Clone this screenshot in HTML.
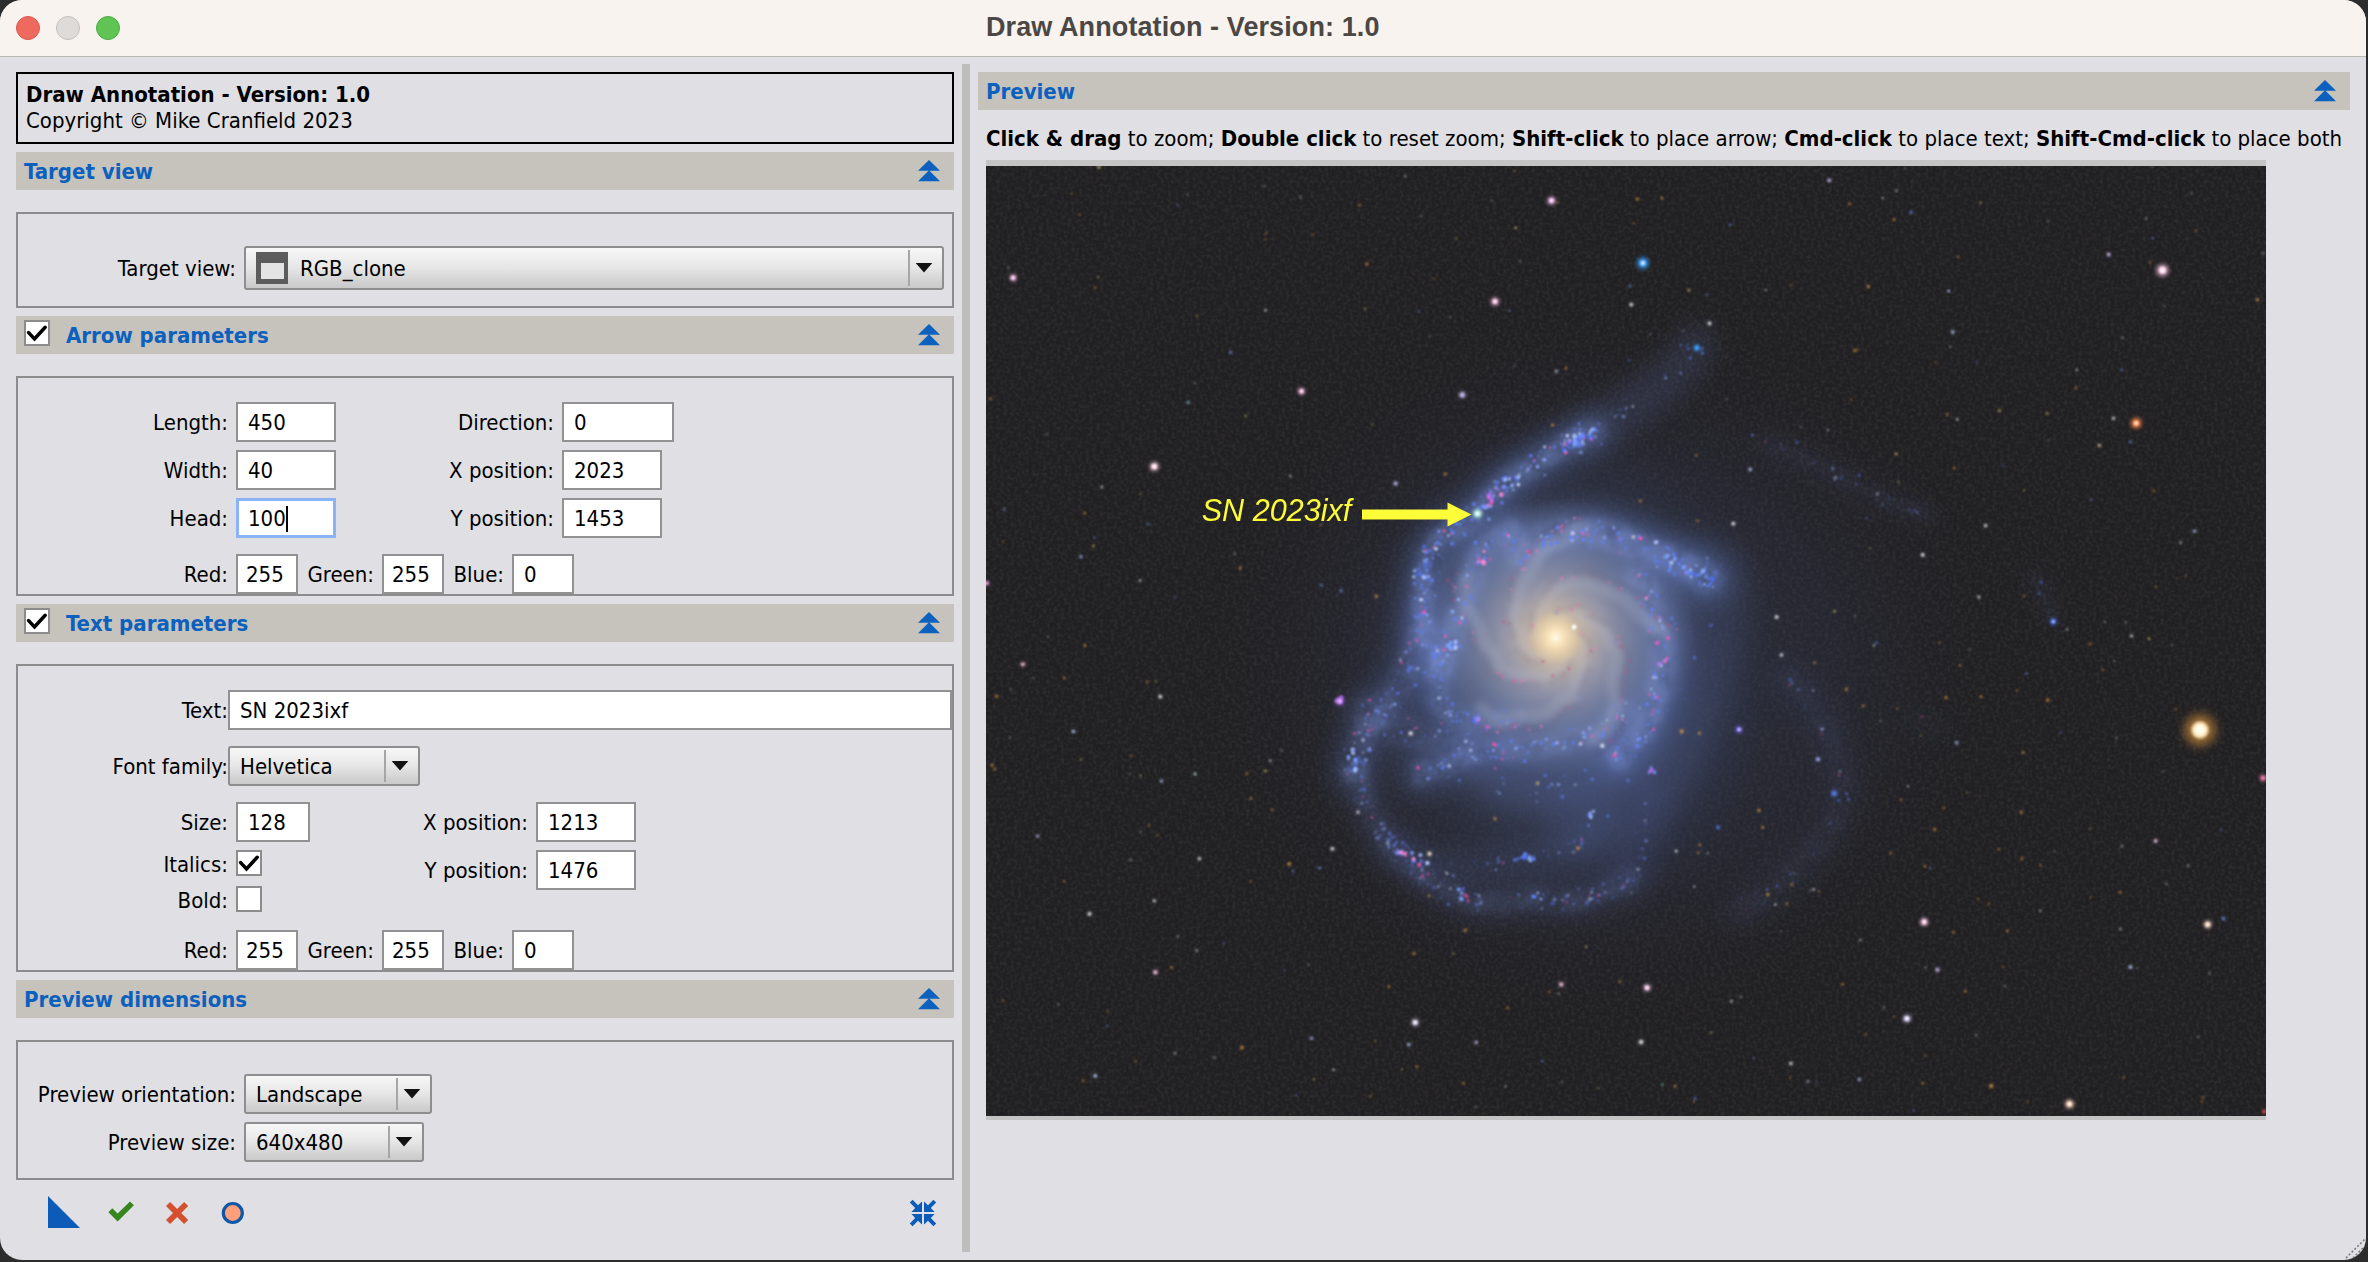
<!DOCTYPE html>
<html><head><meta charset="utf-8"><title>Draw Annotation - Version: 1.0</title>
<style>
html,body{margin:0;padding:0;}
body{width:2368px;height:1262px;overflow:hidden;background:#2c2c2c;position:relative;font-family:"DejaVu Sans Condensed","DejaVu Sans","Liberation Sans",sans-serif;font-size:22px;color:#000;}
.abs,#win *{position:absolute;box-sizing:border-box;}
#win b{position:static;}
#win{position:absolute;left:0;top:0;width:2366px;height:1260px;background:#e0e0e4;border-radius:22px;overflow:hidden;}
#tb{left:0;top:0;width:2366px;height:57px;background:#f8f3ef;border-bottom:1px solid #b9b6b4;}
#tb .dot{width:24px;height:24px;border-radius:50%;top:16px;}
#title{letter-spacing:.1px;left:986px;top:11px;font-family:"Liberation Sans",sans-serif;font-weight:bold;font-size:27px;color:#4b4745;white-space:nowrap;line-height:32px;}
.bar{background:#c5c3bb;height:38px;}
.grp{border:2px solid #8c8c8c;}
.lbl{white-space:nowrap;line-height:40px;height:40px;text-align:right;}
.ed{background:#fff;border:2px solid #929292;height:40px;line-height:36px;padding-left:10px;white-space:nowrap;}
.cb{background:#fff;border:2px solid #8c8c8c;width:26px;height:26px;}
.combo{border-radius:3px;border:2px solid #8e8e8e;background:linear-gradient(#f7f7f7,#e6e6e6 50%,#c9c9c9);height:40px;line-height:36px;white-space:nowrap;}
.combo .sep{width:2px;top:4px;bottom:4px;background:#a9a9a9;}
.combo .tx{left:10px;top:0;}
svg{overflow:visible;}
</style></head><body>
<div id="win">
<div id="tb">
 <div class="dot" style="left:16px;background:#ee6a5f;border:1px solid #d8584e;"></div>
 <div class="dot" style="left:56px;background:#dfdbd8;border:1px solid #c4c0bd;"></div>
 <div class="dot" style="left:96px;background:#5fc454;border:1px solid #4cab42;"></div>
 <div id="title">Draw Annotation - Version: 1.0</div>
</div>
<div style="left:16px;top:72px;width:938px;height:72px;border:2px solid #000"></div>
<div style="left:26px;top:81.70px;line-height:26px;white-space:nowrap;font-weight:bold;">Draw Annotation - Version: 1.0</div>
<div style="left:26px;top:107.90px;line-height:26px;white-space:nowrap;">Copyright © Mike Cranfield 2023</div>
<div class="bar" style="left:16px;top:152px;width:938px"></div>
<div style="left:24px;top:158.70px;line-height:26px;white-space:nowrap;font-weight:bold;color:#0c60be;">Target view</div>
<svg style="left:0;top:0" width="1" height="1"><path fill="#0c60be" d="M929 160L940 170.7L918 170.7ZM929 170.3L940 181.2L918 181.2Z"/></svg>
<div class="grp" style="left:16px;top:212px;width:938px;height:96px"></div>
<div style="left:0;width:236px;top:256.00px;line-height:26px;white-space:nowrap;text-align:right;">Target view:</div>
<div class="combo" style="left:244px;top:246px;width:700px;height:44px"></div>
<div style="left:908px;top:250px;width:2px;height:36px;background:#a6a6a6"></div>
<svg style="left:0;top:0" width="1" height="1"><path fill="#111" d="M915.7 263.0L932.3 263.0L924 272.6Z"/></svg>
<div style="left:300px;top:255.50px;line-height:26px;white-space:nowrap;">RGB_clone</div>
<div style="left:256px;top:252px;width:32px;height:32px;background:#5c5c5c"></div>
<div style="left:261px;top:263px;width:23px;height:16px;background:#e4e4e4"></div>
<div class="bar" style="left:16px;top:316px;width:938px"></div>
<div class="cb" style="left:24px;top:320px"></div>
<svg style="left:24px;top:320px" width="26" height="26" viewBox="0 0 26 26"><path d="M4.6 12.6L10.5 18.9L21.2 7.3" fill="none" stroke="#000" stroke-width="3.5" stroke-linecap="round" stroke-linejoin="miter"/></svg>
<div style="left:66px;top:322.70px;line-height:26px;white-space:nowrap;font-weight:bold;color:#0c60be;">Arrow parameters</div>
<svg style="left:0;top:0" width="1" height="1"><path fill="#0c60be" d="M929 324L940 334.7L918 334.7ZM929 334.3L940 345.2L918 345.2Z"/></svg>
<div class="grp" style="left:16px;top:376px;width:938px;height:220px"></div>
<div style="left:0;width:228px;top:409.50px;line-height:26px;white-space:nowrap;text-align:right;">Length:</div>
<div class="ed" style="left:236px;top:402px;width:100px;height:40px;"></div>
<div style="left:248px;top:409.50px;line-height:26px;white-space:nowrap;">450</div>
<div style="left:0;width:228px;top:457.50px;line-height:26px;white-space:nowrap;text-align:right;">Width:</div>
<div class="ed" style="left:236px;top:450px;width:100px;height:40px;"></div>
<div style="left:248px;top:457.50px;line-height:26px;white-space:nowrap;">40</div>
<div style="left:0;width:228px;top:505.50px;line-height:26px;white-space:nowrap;text-align:right;">Head:</div>
<div class="ed" style="left:236px;top:498px;width:100px;height:40px;border:3px solid #8bb3f8;"></div>
<div style="left:248px;top:505.50px;line-height:26px;white-space:nowrap;">100</div>
<div style="left:286px;top:506px;width:2px;height:26px;background:#000"></div>
<div style="left:0;width:554px;top:409.50px;line-height:26px;white-space:nowrap;text-align:right;">Direction:</div>
<div class="ed" style="left:562px;top:402px;width:112px;height:40px;"></div>
<div style="left:574px;top:409.50px;line-height:26px;white-space:nowrap;">0</div>
<div style="left:0;width:554px;top:457.50px;line-height:26px;white-space:nowrap;text-align:right;">X position:</div>
<div class="ed" style="left:562px;top:450px;width:100px;height:40px;"></div>
<div style="left:574px;top:457.50px;line-height:26px;white-space:nowrap;">2023</div>
<div style="left:0;width:554px;top:505.50px;line-height:26px;white-space:nowrap;text-align:right;">Y position:</div>
<div class="ed" style="left:562px;top:498px;width:100px;height:40px;"></div>
<div style="left:574px;top:505.50px;line-height:26px;white-space:nowrap;">1453</div>
<div style="left:0;width:228px;top:561.50px;line-height:26px;white-space:nowrap;text-align:right;">Red:</div>
<div class="ed" style="left:236px;top:554px;width:62px;height:40px;"></div>
<div style="left:246px;top:561.50px;line-height:26px;white-space:nowrap;">255</div>
<div style="left:0;width:374px;top:561.50px;line-height:26px;white-space:nowrap;text-align:right;">Green:</div>
<div class="ed" style="left:382px;top:554px;width:62px;height:40px;"></div>
<div style="left:392px;top:561.50px;line-height:26px;white-space:nowrap;">255</div>
<div style="left:0;width:504px;top:561.50px;line-height:26px;white-space:nowrap;text-align:right;">Blue:</div>
<div class="ed" style="left:512px;top:554px;width:62px;height:40px;"></div>
<div style="left:524px;top:561.50px;line-height:26px;white-space:nowrap;">0</div>
<div class="bar" style="left:16px;top:604px;width:938px"></div>
<div class="cb" style="left:24px;top:608px"></div>
<svg style="left:24px;top:608px" width="26" height="26" viewBox="0 0 26 26"><path d="M4.6 12.6L10.5 18.9L21.2 7.3" fill="none" stroke="#000" stroke-width="3.5" stroke-linecap="round" stroke-linejoin="miter"/></svg>
<div style="left:66px;top:610.70px;line-height:26px;white-space:nowrap;font-weight:bold;color:#0c60be;">Text parameters</div>
<svg style="left:0;top:0" width="1" height="1"><path fill="#0c60be" d="M929 612L940 622.7L918 622.7ZM929 622.3L940 633.2L918 633.2Z"/></svg>
<div class="grp" style="left:16px;top:664px;width:938px;height:308px"></div>
<div style="left:0;width:228px;top:697.50px;line-height:26px;white-space:nowrap;text-align:right;">Text:</div>
<div class="ed" style="left:228px;top:690px;width:724px;height:40px;"></div>
<div style="left:240px;top:697.50px;line-height:26px;white-space:nowrap;">SN 2023ixf</div>
<div style="left:0;width:228px;top:753.50px;line-height:26px;white-space:nowrap;text-align:right;">Font family:</div>
<div class="combo" style="left:228px;top:746px;width:192px;height:40px"></div>
<div style="left:384px;top:750px;width:2px;height:32px;background:#a6a6a6"></div>
<svg style="left:0;top:0" width="1" height="1"><path fill="#111" d="M391.7 761.0L408.3 761.0L400 770.6Z"/></svg>
<div style="left:240px;top:753.50px;line-height:26px;white-space:nowrap;">Helvetica</div>
<div style="left:0;width:228px;top:809.50px;line-height:26px;white-space:nowrap;text-align:right;">Size:</div>
<div class="ed" style="left:236px;top:802px;width:74px;height:40px;"></div>
<div style="left:248px;top:809.50px;line-height:26px;white-space:nowrap;">128</div>
<div style="left:0;width:228px;top:851.50px;line-height:26px;white-space:nowrap;text-align:right;">Italics:</div>
<div class="cb" style="left:236px;top:850px"></div>
<svg style="left:236px;top:850px" width="26" height="26" viewBox="0 0 26 26"><path d="M4.6 12.6L10.5 18.9L21.2 7.3" fill="none" stroke="#000" stroke-width="3.5" stroke-linecap="round" stroke-linejoin="miter"/></svg>
<div style="left:0;width:228px;top:887.50px;line-height:26px;white-space:nowrap;text-align:right;">Bold:</div>
<div class="cb" style="left:236px;top:886px"></div>
<div style="left:0;width:528px;top:809.50px;line-height:26px;white-space:nowrap;text-align:right;">X position:</div>
<div class="ed" style="left:536px;top:802px;width:100px;height:40px;"></div>
<div style="left:548px;top:809.50px;line-height:26px;white-space:nowrap;">1213</div>
<div style="left:0;width:528px;top:857.50px;line-height:26px;white-space:nowrap;text-align:right;">Y position:</div>
<div class="ed" style="left:536px;top:850px;width:100px;height:40px;"></div>
<div style="left:548px;top:857.50px;line-height:26px;white-space:nowrap;">1476</div>
<div style="left:0;width:228px;top:937.50px;line-height:26px;white-space:nowrap;text-align:right;">Red:</div>
<div class="ed" style="left:236px;top:930px;width:62px;height:40px;"></div>
<div style="left:246px;top:937.50px;line-height:26px;white-space:nowrap;">255</div>
<div style="left:0;width:374px;top:937.50px;line-height:26px;white-space:nowrap;text-align:right;">Green:</div>
<div class="ed" style="left:382px;top:930px;width:62px;height:40px;"></div>
<div style="left:392px;top:937.50px;line-height:26px;white-space:nowrap;">255</div>
<div style="left:0;width:504px;top:937.50px;line-height:26px;white-space:nowrap;text-align:right;">Blue:</div>
<div class="ed" style="left:512px;top:930px;width:62px;height:40px;"></div>
<div style="left:524px;top:937.50px;line-height:26px;white-space:nowrap;">0</div>
<div class="bar" style="left:16px;top:980px;width:938px"></div>
<div style="left:24px;top:986.70px;line-height:26px;white-space:nowrap;font-weight:bold;color:#0c60be;">Preview dimensions</div>
<svg style="left:0;top:0" width="1" height="1"><path fill="#0c60be" d="M929 988L940 998.7L918 998.7ZM929 998.3L940 1009.2L918 1009.2Z"/></svg>
<div class="grp" style="left:16px;top:1040px;width:938px;height:140px"></div>
<div style="left:0;width:236px;top:1081.50px;line-height:26px;white-space:nowrap;text-align:right;">Preview orientation:</div>
<div class="combo" style="left:244px;top:1074px;width:188px;height:40px"></div>
<div style="left:396px;top:1078px;width:2px;height:32px;background:#a6a6a6"></div>
<svg style="left:0;top:0" width="1" height="1"><path fill="#111" d="M403.7 1089.0L420.3 1089.0L412 1098.6Z"/></svg>
<div style="left:256px;top:1081.50px;line-height:26px;white-space:nowrap;">Landscape</div>
<div style="left:0;width:236px;top:1129.50px;line-height:26px;white-space:nowrap;text-align:right;">Preview size:</div>
<div class="combo" style="left:244px;top:1122px;width:180px;height:40px"></div>
<div style="left:388px;top:1126px;width:2px;height:32px;background:#a6a6a6"></div>
<svg style="left:0;top:0" width="1" height="1"><path fill="#111" d="M395.7 1137.0L412.3 1137.0L404 1146.6Z"/></svg>
<div style="left:256px;top:1129.50px;line-height:26px;white-space:nowrap;">640x480</div>
<svg style="left:0;top:0" width="1" height="1">
<path d="M48 1196L80 1228L48 1228Z" fill="#0d5bb8"/>
<path d="M108.4 1212.2L112.3 1208.3L117.6 1213.6L130 1201.4L133.9 1205.3L117.6 1221.4Z" fill="#35861f"/>
<path d="M166 1206L170.1 1201.9L177.1 1208.9L184.1 1201.9L188.2 1206L181.2 1213L188.2 1220L184.1 1224.1L177.1 1217.1L170.1 1224.1L166 1220L173 1213Z" fill="#d4502f"/>
<circle cx="232.8" cy="1213" r="9.5" fill="#ffa07a" stroke="#0d56a8" stroke-width="3.2"/>
<g fill="#0d5bb8" transform="translate(923 1213)">
 <g id="ar"><path d="M-13.2 -10.4L-10.4 -13.2L-5 -7.8L-1 -11.6L-1 -1L-11.6 -1L-7.8 -5Z"/></g>
 <use href="#ar" transform="scale(-1 1)"/><use href="#ar" transform="scale(1 -1)"/><use href="#ar" transform="scale(-1 -1)"/>
</g>
</svg>
<div style="left:962px;top:64px;width:8px;height:1188px;background:#bebebe"></div>
<div class="bar" style="left:978px;top:72px;width:1372px"></div>
<div style="left:986px;top:78.70px;line-height:26px;white-space:nowrap;font-weight:bold;color:#0c60be;">Preview</div>
<svg style="left:0;top:0" width="1" height="1"><path fill="#0c60be" d="M2325 80L2336 90.7L2314 90.7ZM2325 90.3L2336 101.2L2314 101.2Z"/></svg>
<div style="left:986px;top:125.60px;line-height:26px;white-space:nowrap;"><b>Click &amp; drag</b> to zoom; <b>Double click</b> to reset zoom; <b>Shift-click</b> to place arrow; <b>Cmd-click</b> to place text; <b>Shift-Cmd-click</b> to place both</div>
<div style="left:986px;top:160px;width:1280px;height:960px;background:#c4c4c4"></div>
<svg style="left:986px;top:166px;overflow:hidden" width="1280" height="950" viewBox="0 0 1280 950">
<defs>
<filter id="b1" x="-50%" y="-50%" width="200%" height="200%"><feGaussianBlur stdDeviation="0.8"/></filter>
<filter id="b3" x="-50%" y="-50%" width="200%" height="200%"><feGaussianBlur stdDeviation="1.5"/></filter>
<filter id="b6" x="-50%" y="-50%" width="200%" height="200%"><feGaussianBlur stdDeviation="5"/></filter>
<filter id="armw" x="0" y="0" width="1280" height="950" filterUnits="userSpaceOnUse"><feGaussianBlur stdDeviation="12"/></filter>
<filter id="armn" x="0" y="0" width="1280" height="950" filterUnits="userSpaceOnUse">
 <feGaussianBlur stdDeviation="4.5" result="bl"/>
 <feTurbulence type="fractalNoise" baseFrequency="0.045" numOctaves="3" seed="4" result="n"/>
 <feColorMatrix in="n" type="matrix" values="0 0 0 0 1  0 0 0 0 1  0 0 0 0 1  2.2 1.0 0 0 -.85" result="m"/>
 <feComposite in="bl" in2="m" operator="in"/>
</filter>
<radialGradient id="halo"><stop offset="0" stop-color="#5c6990" stop-opacity=".8"/><stop offset=".45" stop-color="#4c587e" stop-opacity=".55"/><stop offset=".78" stop-color="#394260" stop-opacity=".2"/><stop offset="1" stop-color="#303850" stop-opacity="0"/></radialGradient>
<radialGradient id="halo2"><stop offset="0" stop-color="#3c4666" stop-opacity=".5"/><stop offset=".6" stop-color="#343c58" stop-opacity=".26"/><stop offset="1" stop-color="#2c3248" stop-opacity="0"/></radialGradient>
<radialGradient id="disk"><stop offset="0" stop-color="#e6d2b0" stop-opacity="1"/><stop offset=".17" stop-color="#cdbba5" stop-opacity=".95"/><stop offset=".38" stop-color="#aaa9b8" stop-opacity=".78"/><stop offset=".62" stop-color="#8d99bd" stop-opacity=".5"/><stop offset=".85" stop-color="#7b89b3" stop-opacity=".2"/><stop offset="1" stop-color="#7b89b3" stop-opacity="0"/></radialGradient>
<radialGradient id="core"><stop offset="0" stop-color="#fffbe8" stop-opacity="1"/><stop offset=".3" stop-color="#fbe6bd" stop-opacity=".9"/><stop offset="1" stop-color="#e8c99a" stop-opacity="0"/></radialGradient>
</defs>
<rect width="1280" height="950" fill="#201f21"/>
<filter id="grain" x="0" y="0" width="100%" height="100%"><feTurbulence type="fractalNoise" baseFrequency="0.28" numOctaves="2" seed="9"/><feColorMatrix type="matrix" values="0 0 0 0 .62  0 0 0 0 .56  0 0 0 0 .52  0 0 0 .9 -.34"/></filter>
<rect width="1280" height="950" filter="url(#grain)" opacity=".2"/>
<ellipse cx="614.6" cy="506.6" rx="390" ry="350" fill="url(#halo2)"/>
<ellipse cx="573.6" cy="501.6" rx="215" ry="250" fill="url(#halo)"/>
<ellipse cx="631.6" cy="566.6" rx="150" ry="175" fill="url(#halo2)"/>
<g filter="url(#armw)" fill="none" stroke-linecap="round" stroke-linejoin="round">
<path d="M450.7 487.6C448.4 482.9 439.0 470.4 436.9 459.8C434.8 449.3 436.9 435.4 438.1 424.2C439.2 412.9 440.2 401.4 443.6 392.5C447.0 383.6 450.9 378.0 458.7 370.7C466.5 363.4 480.5 357.5 490.4 348.9C500.3 340.3 508.2 327.8 518.1 319.2C528.0 310.6 539.2 304.3 549.8 297.4C560.4 290.5 572.2 282.9 581.5 277.6C590.7 272.3 601.3 267.7 605.3 265.7" stroke="#627bc4" stroke-width="38" stroke-opacity="0.40"/>
<path d="M605.3 265.7C610.5 262.4 627.7 251.8 637.0 245.9C646.2 239.9 652.1 236.6 660.7 230.0C669.3 223.4 680.2 214.9 688.5 206.3C696.7 197.7 706.6 183.2 710.3 178.5" stroke="#627bc4" stroke-width="42" stroke-opacity="0.17"/>
<path d="M526.0 364.7C521.4 368.0 504.9 376.6 498.3 384.6C491.7 392.5 490.4 401.7 486.4 412.3C482.4 422.9 478.5 436.7 474.5 447.9C470.6 459.2 466.3 469.7 462.6 479.6C459.0 489.5 454.4 502.8 452.7 507.4" stroke="#627bc4" stroke-width="38" stroke-opacity="0.42"/>
<path d="M533.9 388.5C539.2 385.5 553.8 374.3 565.6 370.7C577.5 367.1 593.4 366.1 605.3 366.7C617.1 367.4 626.4 371.3 637.0 374.6C647.5 378.0 658.7 382.6 668.7 386.5C678.6 390.5 687.5 394.0 696.4 398.4C705.3 402.8 717.8 410.6 722.1 413.1" stroke="#627bc4" stroke-width="45" stroke-opacity="0.47"/>
<path d="M722.1 413.1C721.8 418.9 722.1 435.5 720.2 447.9C718.2 460.4 713.9 474.4 710.3 487.6C706.6 500.8 703.0 514.0 698.4 527.2C693.7 540.4 688.8 553.6 682.5 566.8C676.2 580.0 669.0 594.5 660.7 606.4C652.5 618.3 642.2 630.2 633.0 638.1C623.8 646.0 609.9 651.3 605.3 654.0" stroke="#627bc4" stroke-width="90" stroke-opacity="0.11"/>
<path d="M652.8 412.3C655.8 418.2 666.7 435.4 670.6 447.9C674.6 460.5 676.6 474.4 676.6 487.6C676.6 500.8 673.9 514.6 670.6 527.2C667.3 539.7 663.0 552.3 656.8 562.8C650.5 573.4 637.0 586.0 633.0 590.6" stroke="#627bc4" stroke-width="45" stroke-opacity="0.39"/>
<path d="M637.0 543.0C632.3 547.0 619.8 561.0 609.2 566.8C598.7 572.6 585.5 575.3 573.6 577.9C561.7 580.5 549.1 581.5 537.9 582.7C526.7 583.8 516.8 583.0 506.2 584.6C495.6 586.3 483.8 589.6 474.5 592.6C465.3 595.5 457.7 599.8 450.7 602.5C443.8 605.1 435.9 607.4 432.9 608.4" stroke="#627bc4" stroke-width="38" stroke-opacity="0.29"/>
<path d="M452.7 507.4C452.4 511.3 448.4 524.2 450.7 531.1C453.1 538.1 459.3 544.9 466.6 549.0C473.9 553.1 484.4 555.1 494.3 555.7C504.2 556.4 520.7 553.4 526.0 552.9" stroke="#627bc4" stroke-width="38" stroke-opacity="0.28"/>
<path d="M435.7 455.9C434.4 461.2 431.5 477.0 427.8 487.6C424.0 498.1 419.5 508.7 413.1 519.3C406.7 529.8 395.9 540.4 389.3 551.0C382.7 561.5 377.0 573.4 373.5 582.7C370.0 591.9 369.2 602.5 368.3 606.4" stroke="#627bc4" stroke-width="42" stroke-opacity="0.23"/>
<path d="M379.4 547.0C384.7 549.6 399.9 558.6 411.1 562.8C422.4 567.1 435.6 569.8 446.8 572.7C458.0 575.7 473.2 579.4 478.5 580.7" stroke="#627bc4" stroke-width="45" stroke-opacity="0.17"/>
<path d="M506.2 614.3C514.1 616.0 537.9 624.9 553.8 624.3C569.6 623.6 587.4 616.7 601.3 610.4C615.2 604.1 631.0 590.6 637.0 586.6" stroke="#627bc4" stroke-width="42" stroke-opacity="0.17"/>
<path d="M368.0 598.0C370.0 604.2 375.5 624.2 380.0 635.0C384.5 645.8 389.2 653.8 395.0 663.0C400.8 672.2 406.7 681.3 415.0 690.0C423.3 698.7 435.2 708.2 445.0 715.0C454.8 721.8 463.2 727.3 474.0 731.0C484.8 734.7 497.3 736.8 510.0 737.0C522.7 737.2 537.5 732.2 550.0 732.0C562.5 731.8 573.8 737.0 585.0 736.0C596.2 735.0 607.3 730.0 617.0 726.0C626.7 722.0 638.7 714.3 643.0 712.0" stroke="#627bc4" stroke-width="35" stroke-opacity="0.14"/>
<path d="M643.0 712.0C645.5 706.0 654.2 689.7 658.0 676.0C661.8 662.3 664.7 637.7 666.0 630.0" stroke="#627bc4" stroke-width="38" stroke-opacity="0.09"/>
<path d="M405.0 680.0C410.3 682.5 424.5 691.7 437.0 695.0C449.5 698.3 462.5 700.5 480.0 700.0C497.5 699.5 523.7 695.3 542.0 692.0C560.3 688.7 577.5 687.0 590.0 680.0C602.5 673.0 612.5 655.0 617.0 650.0" stroke="#627bc4" stroke-width="32" stroke-opacity="0.14"/>
<path d="M783.1 278.6C790.7 281.8 815.8 291.8 828.3 297.4C840.9 303.1 845.9 306.2 858.4 312.5C871.0 318.8 889.8 329.2 903.6 335.1C917.4 341.0 935.0 345.8 941.3 347.9" stroke="#627bc4" stroke-width="29" stroke-opacity="0.05"/>
<path d="M802.0 512.0C808.2 520.2 830.6 542.2 839.6 561.0C848.6 579.8 856.8 606.2 856.2 625.0C855.5 643.8 845.5 659.5 835.8 673.9C826.2 688.4 812.0 699.4 798.2 711.6C784.4 723.8 760.5 741.1 753.0 747.0" stroke="#627bc4" stroke-width="38" stroke-opacity="0.06"/>
<path d="M1050.5 410.4 L1065.5 451.8" stroke="#627bc4" stroke-width="22" stroke-opacity="0.06"/>
<path d="M930.0 553.5 L960.1 563.3" stroke="#627bc4" stroke-width="22" stroke-opacity="0.04"/>
</g>
<g filter="url(#armn)" fill="none" stroke-linecap="round" stroke-linejoin="round">
<path d="M450.7 487.6C448.4 482.9 439.0 470.4 436.9 459.8C434.8 449.3 436.9 435.4 438.1 424.2C439.2 412.9 440.2 401.4 443.6 392.5C447.0 383.6 450.9 378.0 458.7 370.7C466.5 363.4 480.5 357.5 490.4 348.9C500.3 340.3 508.2 327.8 518.1 319.2C528.0 310.6 539.2 304.3 549.8 297.4C560.4 290.5 572.2 282.9 581.5 277.6C590.7 272.3 601.3 267.7 605.3 265.7" stroke="#8aa2ea" stroke-width="23" stroke-opacity="0.29"/>
<path d="M526.0 364.7C521.4 368.0 504.9 376.6 498.3 384.6C491.7 392.5 490.4 401.7 486.4 412.3C482.4 422.9 478.5 436.7 474.5 447.9C470.6 459.2 466.3 469.7 462.6 479.6C459.0 489.5 454.4 502.8 452.7 507.4" stroke="#8aa2ea" stroke-width="23" stroke-opacity="0.31"/>
<path d="M533.9 388.5C539.2 385.5 553.8 374.3 565.6 370.7C577.5 367.1 593.4 366.1 605.3 366.7C617.1 367.4 626.4 371.3 637.0 374.6C647.5 378.0 658.7 382.6 668.7 386.5C678.6 390.5 687.5 394.0 696.4 398.4C705.3 402.8 717.8 410.6 722.1 413.1" stroke="#8aa2ea" stroke-width="27" stroke-opacity="0.34"/>
<path d="M652.8 412.3C655.8 418.2 666.7 435.4 670.6 447.9C674.6 460.5 676.6 474.4 676.6 487.6C676.6 500.8 673.9 514.6 670.6 527.2C667.3 539.7 663.0 552.3 656.8 562.8C650.5 573.4 637.0 586.0 633.0 590.6" stroke="#8aa2ea" stroke-width="27" stroke-opacity="0.29"/>
<path d="M637.0 543.0C632.3 547.0 619.8 561.0 609.2 566.8C598.7 572.6 585.5 575.3 573.6 577.9C561.7 580.5 549.1 581.5 537.9 582.7C526.7 583.8 516.8 583.0 506.2 584.6C495.6 586.3 483.8 589.6 474.5 592.6C465.3 595.5 457.7 599.8 450.7 602.5C443.8 605.1 435.9 607.4 432.9 608.4" stroke="#8aa2ea" stroke-width="23" stroke-opacity="0.21"/>
<path d="M452.7 507.4C452.4 511.3 448.4 524.2 450.7 531.1C453.1 538.1 459.3 544.9 466.6 549.0C473.9 553.1 484.4 555.1 494.3 555.7C504.2 556.4 520.7 553.4 526.0 552.9" stroke="#8aa2ea" stroke-width="23" stroke-opacity="0.20"/>
<path d="M435.7 455.9C434.4 461.2 431.5 477.0 427.8 487.6C424.0 498.1 419.5 508.7 413.1 519.3C406.7 529.8 395.9 540.4 389.3 551.0C382.7 561.5 377.0 573.4 373.5 582.7C370.0 591.9 369.2 602.5 368.3 606.4" stroke="#8aa2ea" stroke-width="25" stroke-opacity="0.17"/>
<path d="M379.4 547.0C384.7 549.6 399.9 558.6 411.1 562.8C422.4 567.1 435.6 569.8 446.8 572.7C458.0 575.7 473.2 579.4 478.5 580.7" stroke="#8aa2ea" stroke-width="27" stroke-opacity="0.12"/>
<path d="M368.0 598.0C370.0 604.2 375.5 624.2 380.0 635.0C384.5 645.8 389.2 653.8 395.0 663.0C400.8 672.2 406.7 681.3 415.0 690.0C423.3 698.7 435.2 708.2 445.0 715.0C454.8 721.8 463.2 727.3 474.0 731.0C484.8 734.7 497.3 736.8 510.0 737.0C522.7 737.2 537.5 732.2 550.0 732.0C562.5 731.8 573.8 737.0 585.0 736.0C596.2 735.0 607.3 730.0 617.0 726.0C626.7 722.0 638.7 714.3 643.0 712.0" stroke="#8aa2ea" stroke-width="21" stroke-opacity="0.11"/>
<path d="M783.1 278.6C790.7 281.8 815.8 291.8 828.3 297.4C840.9 303.1 845.9 306.2 858.4 312.5C871.0 318.8 889.8 329.2 903.6 335.1C917.4 341.0 935.0 345.8 941.3 347.9" stroke="#8aa2ea" stroke-width="17" stroke-opacity="0.04"/>
<path d="M802.0 512.0C808.2 520.2 830.6 542.2 839.6 561.0C848.6 579.8 856.8 606.2 856.2 625.0C855.5 643.8 845.5 659.5 835.8 673.9C826.2 688.4 812.0 699.4 798.2 711.6C784.4 723.8 760.5 741.1 753.0 747.0" stroke="#8aa2ea" stroke-width="23" stroke-opacity="0.04"/>
<path d="M1050.5 410.4 L1065.5 451.8" stroke="#8aa2ea" stroke-width="13" stroke-opacity="0.04"/>
</g>
<circle cx="569.6" cy="471.6" r="140" fill="url(#disk)"/>
<filter id="b4" x="-50%" y="-50%" width="200%" height="200%"><feGaussianBlur stdDeviation="3"/></filter><g filter="url(#b4)" fill="none" stroke-linecap="round">
<path d="M583.2 492.1C582.8 493.0 581.8 495.5 580.8 497.4C579.9 499.4 578.9 502.3 577.4 503.8C575.9 505.3 573.8 505.3 571.8 506.4C569.7 507.5 567.6 509.1 565.2 510.2C562.8 511.3 559.8 512.8 557.1 513.0C554.4 513.3 552.3 511.7 549.1 511.5C545.9 511.3 541.7 512.4 537.9 511.9C534.1 511.4 530.3 510.2 526.3 508.5C522.3 506.9 516.8 505.2 513.9 502.0C511.0 498.9 511.7 493.9 509.1 489.7C506.4 485.5 500.6 481.7 497.9 476.8C495.2 471.9 496.0 467.0 492.9 460.4C489.9 453.8 481.9 445.1 479.8 437.3C477.7 429.4 480.1 417.3 480.2 413.3" stroke="#d4d4e4" stroke-width="13" stroke-opacity=".17"/>
<path d="M585.0 494.8C584.5 495.8 583.4 498.6 582.3 500.8C581.2 503.0 580.1 506.3 578.4 508.0C576.7 509.7 574.3 509.7 572.0 510.9C569.7 512.1 567.4 514.0 564.6 515.2C561.9 516.5 558.5 518.2 555.5 518.4C552.5 518.7 550.0 516.9 546.4 516.7C542.8 516.5 538.0 517.7 533.8 517.2C529.5 516.6 525.2 515.2 520.7 513.3C516.2 511.4 509.9 509.5 506.6 506.0C503.4 502.5 504.2 496.8 501.2 492.1C498.2 487.3 491.6 483.0 488.6 477.5C485.6 472.0 486.4 466.4 483.0 458.9C479.6 451.5 470.5 441.7 468.1 432.8C465.7 423.9 468.5 410.2 468.6 405.7" stroke="#4a2c44" stroke-width="3.5" stroke-opacity=".3" stroke-dasharray="7 4 12 5 4 8"/>
<path d="M558.2 492.1C557.0 492.4 553.2 493.8 551.1 493.6C548.9 493.4 547.0 492.2 545.3 491.0C543.5 489.8 542.3 488.0 540.6 486.3C539.0 484.5 536.7 482.7 535.5 480.5C534.3 478.3 534.1 475.7 533.3 473.0C532.5 470.3 532.1 467.8 530.8 464.5C529.6 461.1 526.3 456.5 525.9 452.8C525.6 449.2 528.1 446.5 529.0 442.6C529.8 438.6 529.6 433.7 530.8 429.1C531.9 424.5 533.5 419.4 536.0 415.2C538.5 410.9 542.1 408.7 545.6 403.8C549.1 399.0 552.2 390.9 556.9 386.2C561.6 381.4 567.2 379.4 573.6 375.2C580.1 371.0 591.9 363.3 595.6 360.9" stroke="#d4d4e4" stroke-width="13" stroke-opacity=".17"/>
<path d="M556.7 494.8C555.4 495.1 551.1 496.7 548.6 496.5C546.2 496.3 544.1 494.9 542.1 493.5C540.1 492.2 538.7 490.2 536.9 488.2C535.0 486.2 532.4 484.1 531.0 481.7C529.7 479.2 529.5 476.2 528.6 473.2C527.7 470.2 527.2 467.3 525.8 463.5C524.4 459.7 520.6 454.5 520.3 450.4C519.9 446.3 522.8 443.3 523.7 438.8C524.6 434.3 524.4 428.7 525.7 423.6C527.0 418.4 528.8 412.6 531.6 407.8C534.4 403.1 538.5 400.5 542.5 395.0C546.4 389.6 550.0 380.5 555.2 375.1C560.5 369.7 566.9 367.5 574.2 362.7C581.4 358.0 594.8 349.2 599.0 346.5" stroke="#4a2c44" stroke-width="3.5" stroke-opacity=".3" stroke-dasharray="7 4 12 5 4 8"/>
<path d="M548.4 467.2C548.2 466.2 547.3 463.3 547.3 461.3C547.3 459.3 547.8 457.4 548.1 455.2C548.5 452.9 548.6 450.0 549.5 447.7C550.3 445.4 551.8 443.4 553.3 441.4C554.9 439.4 556.8 438.3 558.7 435.5C560.7 432.7 562.4 427.4 565.1 424.7C567.8 421.9 571.2 420.4 574.7 419.0C578.2 417.6 582.0 416.8 586.1 416.3C590.1 415.8 594.7 415.2 598.9 415.9C603.0 416.6 606.7 418.8 611.1 420.5C615.5 422.1 620.3 423.7 625.2 426.0C630.2 428.3 636.3 430.7 640.9 434.5C645.5 438.3 647.1 443.5 652.9 448.7C658.7 453.9 672.0 462.8 675.8 465.6" stroke="#d4d4e4" stroke-width="13" stroke-opacity=".17"/>
<path d="M545.6 466.6C545.4 465.5 544.4 462.2 544.4 460.0C544.4 457.7 544.9 455.6 545.4 453.0C545.8 450.5 545.9 447.2 546.8 444.6C547.8 442.0 549.5 439.8 551.2 437.5C553.0 435.2 555.1 433.9 557.3 430.8C559.5 427.6 561.5 421.7 564.5 418.6C567.5 415.5 571.4 413.7 575.4 412.2C579.3 410.6 583.7 409.7 588.2 409.1C592.8 408.5 597.9 407.8 602.7 408.6C607.4 409.4 611.5 411.9 616.5 413.8C621.5 415.7 626.9 417.4 632.5 420.1C638.1 422.7 644.9 425.4 650.1 429.7C655.3 434.0 657.1 439.9 663.7 445.7C670.3 451.6 685.3 461.6 689.6 464.8" stroke="#4a2c44" stroke-width="3.5" stroke-opacity=".3" stroke-dasharray="7 4 12 5 4 8"/>
<path d="M568.7 450.2C569.5 449.5 571.9 446.8 573.6 446.1C575.4 445.5 576.8 446.7 579.0 446.3C581.2 445.9 584.3 443.9 586.8 443.8C589.4 443.6 592.3 444.2 594.2 445.5C596.2 446.8 596.5 449.8 598.6 451.6C600.7 453.3 603.6 454.1 607.0 455.9C610.3 457.6 616.1 459.3 618.7 462.1C621.3 464.9 620.2 468.8 622.4 472.8C624.6 476.9 630.4 481.7 631.7 486.3C632.9 490.8 630.7 495.3 629.9 500.1C629.2 504.9 627.6 508.8 627.4 515.1C627.2 521.3 629.7 530.3 628.8 537.7C628.0 545.1 625.9 553.8 622.3 559.7C618.6 565.5 609.4 570.8 606.8 573.0" stroke="#d4d4e4" stroke-width="13" stroke-opacity=".17"/>
<path d="M568.6 447.4C569.5 446.6 572.2 443.6 574.2 442.8C576.1 442.1 577.8 443.5 580.3 443.0C582.8 442.6 586.2 440.3 589.1 440.1C591.9 440.0 595.2 440.6 597.4 442.1C599.6 443.6 600.0 447.0 602.4 448.9C604.8 450.9 608.1 451.9 611.9 453.8C615.6 455.8 622.2 457.7 625.1 460.9C628.0 464.1 626.8 468.5 629.3 473.0C631.7 477.6 638.3 483.0 639.8 488.2C641.2 493.3 638.6 498.4 637.8 503.8C637.0 509.3 635.1 513.7 634.9 520.7C634.7 527.8 637.5 537.9 636.5 546.3C635.5 554.7 633.3 564.5 629.1 571.1C625.0 577.8 614.6 583.7 611.7 586.2" stroke="#4a2c44" stroke-width="3.5" stroke-opacity=".3" stroke-dasharray="7 4 12 5 4 8"/>
<path d="M589.0 465.8C589.7 466.4 591.7 468.0 593.3 469.6C594.9 471.1 597.6 472.9 598.8 475.0C599.9 477.0 600.4 479.6 600.4 481.9C600.4 484.1 599.0 486.0 598.8 488.6C598.6 491.2 599.4 494.5 599.0 497.4C598.6 500.3 597.5 503.1 596.3 506.0C595.2 509.0 593.5 511.2 592.0 515.2C590.5 519.2 589.9 526.9 587.4 530.1C584.8 533.3 580.6 531.6 576.8 534.2C573.0 536.7 569.3 542.8 564.8 545.4C560.3 548.0 555.1 549.1 549.9 549.8C544.7 550.4 540.3 548.7 533.7 549.4C527.2 550.0 516.9 555.2 510.5 553.8C504.0 552.4 497.6 543.3 495.1 541.2" stroke="#d4d4e4" stroke-width="13" stroke-opacity=".17"/>
<path d="M591.5 465.0C592.4 465.7 594.5 467.6 596.4 469.3C598.2 471.0 601.2 473.1 602.6 475.4C603.9 477.7 604.4 480.6 604.4 483.2C604.4 485.7 602.9 487.9 602.6 490.8C602.3 493.7 603.3 497.5 602.9 500.8C602.4 504.1 601.1 507.1 599.8 510.5C598.5 513.8 596.6 516.3 595.0 520.9C593.3 525.4 592.6 534.1 589.7 537.7C586.8 541.3 582.0 539.4 577.7 542.3C573.5 545.2 569.2 552.0 564.1 555.0C559.1 557.9 553.2 559.2 547.3 559.9C541.5 560.7 536.5 558.7 529.1 559.5C521.7 560.2 510.1 566.0 502.8 564.5C495.5 562.9 488.3 552.6 485.4 550.2" stroke="#4a2c44" stroke-width="3.5" stroke-opacity=".3" stroke-dasharray="7 4 12 5 4 8"/>
</g>
<circle cx="569.6" cy="471.6" r="27" fill="url(#core)"/>
<circle cx="588.1" cy="461.1" r="2.4" fill="#fff" filter="url(#b1)"/>
<g filter="url(#b1)"><circle cx="519.7" cy="325.9" r="1.0" fill="#5f80ff" fill-opacity="0.96"/><circle cx="486.6" cy="352.8" r="1.0" fill="#5f80ff" fill-opacity="0.96"/><circle cx="615.6" cy="277.7" r="1.0" fill="#5f80ff" fill-opacity="0.96"/><circle cx="450.2" cy="480.2" r="1.2" fill="#5f80ff" fill-opacity="0.96"/><circle cx="442.5" cy="456.0" r="1.0" fill="#5f80ff" fill-opacity="0.96"/><circle cx="505.2" cy="332.3" r="1.8" fill="#5f80ff" fill-opacity="0.96"/><circle cx="605.3" cy="271.8" r="1.0" fill="#5f80ff" fill-opacity="0.96"/><circle cx="455.7" cy="371.5" r="1.0" fill="#5f80ff" fill-opacity="0.96"/><circle cx="594.8" cy="286.3" r="1.4" fill="#8eaaff" fill-opacity="0.96"/><circle cx="532.1" cy="311.3" r="1.8" fill="#c9d6ff" fill-opacity="0.96"/><circle cx="458.3" cy="365.0" r="1.4" fill="#ff58b8" fill-opacity="0.96"/><circle cx="559.7" cy="293.8" r="0.8" fill="#5f80ff" fill-opacity="0.96"/><circle cx="544.7" cy="289.8" r="1.8" fill="#5f80ff" fill-opacity="0.96"/><circle cx="452.3" cy="379.8" r="0.8" fill="#5f80ff" fill-opacity="0.96"/><circle cx="524.2" cy="313.5" r="1.0" fill="#5f80ff" fill-opacity="0.96"/><circle cx="575.6" cy="278.1" r="1.2" fill="#5f80ff" fill-opacity="0.96"/><circle cx="551.4" cy="300.7" r="1.8" fill="#8eaaff" fill-opacity="0.96"/><circle cx="427.7" cy="410.9" r="1.4" fill="#c9d6ff" fill-opacity="0.96"/><circle cx="489.9" cy="350.0" r="0.8" fill="#5f80ff" fill-opacity="0.96"/><circle cx="479.5" cy="370.3" r="0.8" fill="#5f80ff" fill-opacity="0.96"/><circle cx="508.6" cy="315.4" r="1.0" fill="#8eaaff" fill-opacity="0.96"/><circle cx="495.0" cy="345.8" r="0.8" fill="#ff58b8" fill-opacity="0.96"/><circle cx="529.2" cy="311.2" r="1.4" fill="#5f80ff" fill-opacity="0.96"/><circle cx="513.1" cy="323.9" r="0.8" fill="#5f80ff" fill-opacity="0.96"/><circle cx="449.2" cy="429.8" r="1.2" fill="#5f80ff" fill-opacity="0.96"/><circle cx="596.8" cy="268.5" r="1.8" fill="#5f80ff" fill-opacity="0.96"/><circle cx="579.2" cy="285.0" r="1.4" fill="#5f80ff" fill-opacity="0.96"/><circle cx="429.2" cy="432.6" r="1.4" fill="#5f80ff" fill-opacity="0.96"/><circle cx="447.3" cy="487.7" r="1.8" fill="#5f80ff" fill-opacity="0.96"/><circle cx="441.2" cy="396.2" r="1.4" fill="#5f80ff" fill-opacity="0.96"/><circle cx="454.7" cy="378.2" r="1.0" fill="#8eaaff" fill-opacity="0.96"/><circle cx="450.2" cy="382.9" r="1.8" fill="#c9d6ff" fill-opacity="0.96"/><circle cx="452.4" cy="388.5" r="0.8" fill="#8eaaff" fill-opacity="0.96"/><circle cx="474.1" cy="358.3" r="1.4" fill="#5f80ff" fill-opacity="0.96"/><circle cx="451.7" cy="376.8" r="1.8" fill="#5f80ff" fill-opacity="0.96"/><circle cx="488.0" cy="338.1" r="1.8" fill="#5f80ff" fill-opacity="0.96"/><circle cx="438.2" cy="447.8" r="1.8" fill="#5f80ff" fill-opacity="0.96"/><circle cx="470.2" cy="357.6" r="1.8" fill="#5f80ff" fill-opacity="0.96"/><circle cx="435.4" cy="422.1" r="1.2" fill="#5f80ff" fill-opacity="0.96"/><circle cx="443.7" cy="399.9" r="0.8" fill="#5f80ff" fill-opacity="0.96"/><circle cx="575.6" cy="268.9" r="0.8" fill="#8eaaff" fill-opacity="0.96"/><circle cx="448.1" cy="382.8" r="0.8" fill="#8eaaff" fill-opacity="0.96"/><circle cx="579.1" cy="275.0" r="1.2" fill="#8eaaff" fill-opacity="0.96"/><circle cx="581.4" cy="269.8" r="1.8" fill="#c9d6ff" fill-opacity="0.96"/><circle cx="432.0" cy="413.8" r="1.0" fill="#5f80ff" fill-opacity="0.96"/><circle cx="521.0" cy="325.1" r="0.8" fill="#5f80ff" fill-opacity="0.96"/><circle cx="594.3" cy="263.5" r="1.2" fill="#5f80ff" fill-opacity="0.96"/><circle cx="456.4" cy="391.8" r="0.8" fill="#5f80ff" fill-opacity="0.96"/><circle cx="532.4" cy="318.6" r="1.8" fill="#c9d6ff" fill-opacity="0.96"/><circle cx="492.6" cy="355.4" r="0.8" fill="#5f80ff" fill-opacity="0.96"/><circle cx="441.1" cy="448.9" r="1.4" fill="#8eaaff" fill-opacity="0.96"/><circle cx="562.4" cy="289.6" r="0.8" fill="#5f80ff" fill-opacity="0.96"/><circle cx="445.6" cy="479.5" r="1.0" fill="#5f80ff" fill-opacity="0.96"/><circle cx="578.9" cy="278.4" r="1.4" fill="#c9d6ff" fill-opacity="0.96"/><circle cx="554.7" cy="285.0" r="1.0" fill="#5f80ff" fill-opacity="0.96"/><circle cx="592.0" cy="279.9" r="1.0" fill="#5f80ff" fill-opacity="0.96"/><circle cx="594.0" cy="279.5" r="1.8" fill="#5f80ff" fill-opacity="0.96"/><circle cx="445.8" cy="414.4" r="1.8" fill="#5f80ff" fill-opacity="0.96"/><circle cx="519.5" cy="311.3" r="1.8" fill="#5f80ff" fill-opacity="0.96"/><circle cx="588.3" cy="276.3" r="1.4" fill="#5f80ff" fill-opacity="0.96"/><circle cx="598.2" cy="271.7" r="1.0" fill="#5f80ff" fill-opacity="0.96"/><circle cx="568.9" cy="280.9" r="1.4" fill="#5f80ff" fill-opacity="0.96"/><circle cx="548.1" cy="295.3" r="1.4" fill="#5f80ff" fill-opacity="0.96"/><circle cx="439.8" cy="442.1" r="1.2" fill="#5f80ff" fill-opacity="0.96"/><circle cx="449.9" cy="481.4" r="0.8" fill="#8eaaff" fill-opacity="0.96"/><circle cx="492.6" cy="342.0" r="1.4" fill="#5f80ff" fill-opacity="0.96"/><circle cx="609.2" cy="271.0" r="1.2" fill="#8eaaff" fill-opacity="0.96"/><circle cx="579.2" cy="278.6" r="1.4" fill="#ff58b8" fill-opacity="0.96"/><circle cx="428.8" cy="404.7" r="1.8" fill="#8eaaff" fill-opacity="0.96"/><circle cx="579.8" cy="286.5" r="1.8" fill="#ff58b8" fill-opacity="0.96"/><circle cx="462.3" cy="369.8" r="1.2" fill="#c9d6ff" fill-opacity="0.96"/><circle cx="480.7" cy="341.6" r="1.0" fill="#5f80ff" fill-opacity="0.96"/><circle cx="446.8" cy="388.5" r="1.0" fill="#5f80ff" fill-opacity="0.96"/><circle cx="435.9" cy="448.1" r="1.4" fill="#5f80ff" fill-opacity="0.96"/><circle cx="440.5" cy="431.9" r="0.8" fill="#5f80ff" fill-opacity="0.96"/><circle cx="593.0" cy="257.5" r="1.2" fill="#5f80ff" fill-opacity="0.96"/><circle cx="564.4" cy="281.8" r="1.0" fill="#ff58b8" fill-opacity="0.96"/><circle cx="558.2" cy="293.7" r="1.8" fill="#8eaaff" fill-opacity="0.96"/><circle cx="594.5" cy="269.5" r="0.8" fill="#5f80ff" fill-opacity="0.96"/><circle cx="453.1" cy="406.7" r="0.8" fill="#5f80ff" fill-opacity="0.96"/><circle cx="444.6" cy="418.0" r="0.8" fill="#5f80ff" fill-opacity="0.96"/><circle cx="545.0" cy="299.8" r="1.0" fill="#8eaaff" fill-opacity="0.96"/><circle cx="447.5" cy="482.7" r="1.0" fill="#5f80ff" fill-opacity="0.96"/><circle cx="541.2" cy="304.9" r="1.0" fill="#8eaaff" fill-opacity="0.96"/><circle cx="435.3" cy="441.1" r="0.8" fill="#ff58b8" fill-opacity="0.96"/><circle cx="519.5" cy="313.7" r="1.8" fill="#c9d6ff" fill-opacity="0.96"/><circle cx="465.4" cy="368.0" r="1.0" fill="#ff58b8" fill-opacity="0.96"/><circle cx="526.3" cy="319.1" r="1.8" fill="#8eaaff" fill-opacity="0.96"/><circle cx="535.1" cy="301.3" r="1.0" fill="#5f80ff" fill-opacity="0.96"/><circle cx="499.4" cy="341.3" r="1.2" fill="#c9d6ff" fill-opacity="0.96"/><circle cx="440.5" cy="480.1" r="1.2" fill="#5f80ff" fill-opacity="0.96"/><circle cx="516.4" cy="312.3" r="1.4" fill="#5f80ff" fill-opacity="0.96"/><circle cx="558.7" cy="281.0" r="1.4" fill="#c9d6ff" fill-opacity="0.96"/><circle cx="448.7" cy="482.5" r="1.0" fill="#5f80ff" fill-opacity="0.96"/><circle cx="511.5" cy="316.3" r="1.4" fill="#5f80ff" fill-opacity="0.96"/><circle cx="465.9" cy="377.7" r="1.8" fill="#5f80ff" fill-opacity="0.96"/><circle cx="535.1" cy="310.1" r="0.8" fill="#8eaaff" fill-opacity="0.96"/><circle cx="427.9" cy="449.3" r="0.8" fill="#5f80ff" fill-opacity="0.96"/><circle cx="428.5" cy="417.5" r="1.4" fill="#5f80ff" fill-opacity="0.96"/><circle cx="431.3" cy="464.8" r="1.2" fill="#5f80ff" fill-opacity="0.96"/><circle cx="485.6" cy="353.8" r="1.2" fill="#5f80ff" fill-opacity="0.96"/><circle cx="471.5" cy="350.4" r="0.8" fill="#5f80ff" fill-opacity="0.96"/><circle cx="453.0" cy="365.4" r="1.4" fill="#8eaaff" fill-opacity="0.96"/><circle cx="521.4" cy="322.1" r="1.4" fill="#5f80ff" fill-opacity="0.96"/><circle cx="503.0" cy="353.2" r="1.4" fill="#8eaaff" fill-opacity="0.96"/><circle cx="467.0" cy="366.6" r="1.8" fill="#5f80ff" fill-opacity="0.96"/><circle cx="558.8" cy="308.9" r="1.0" fill="#8eaaff" fill-opacity="0.96"/><circle cx="443.1" cy="432.2" r="0.8" fill="#5f80ff" fill-opacity="0.96"/><circle cx="436.0" cy="466.8" r="1.2" fill="#5f80ff" fill-opacity="0.96"/><circle cx="523.5" cy="312.9" r="1.8" fill="#8eaaff" fill-opacity="0.96"/><circle cx="509.5" cy="322.3" r="1.0" fill="#c9d6ff" fill-opacity="0.96"/><circle cx="438.3" cy="427.0" r="1.2" fill="#8eaaff" fill-opacity="0.96"/><circle cx="504.3" cy="340.3" r="1.8" fill="#8eaaff" fill-opacity="0.96"/><circle cx="437.2" cy="385.3" r="1.0" fill="#c9d6ff" fill-opacity="0.96"/><circle cx="578.8" cy="285.2" r="0.8" fill="#8eaaff" fill-opacity="0.96"/><circle cx="448.7" cy="491.3" r="1.8" fill="#5f80ff" fill-opacity="0.96"/><circle cx="449.1" cy="378.0" r="0.8" fill="#c9d6ff" fill-opacity="0.96"/><circle cx="432.6" cy="402.9" r="1.2" fill="#5f80ff" fill-opacity="0.96"/><circle cx="505.5" cy="339.2" r="1.0" fill="#ff58b8" fill-opacity="0.96"/><circle cx="438.1" cy="446.0" r="1.8" fill="#ff58b8" fill-opacity="0.96"/><circle cx="440.0" cy="385.0" r="1.4" fill="#ff58b8" fill-opacity="0.96"/><circle cx="515.9" cy="336.8" r="1.8" fill="#5f80ff" fill-opacity="0.96"/><circle cx="588.6" cy="263.3" r="1.0" fill="#5f80ff" fill-opacity="0.96"/><circle cx="504.0" cy="324.7" r="1.2" fill="#5f80ff" fill-opacity="0.96"/><circle cx="429.2" cy="450.8" r="1.4" fill="#5f80ff" fill-opacity="0.96"/><circle cx="453.0" cy="487.2" r="1.8" fill="#5f80ff" fill-opacity="0.96"/><circle cx="475.6" cy="353.1" r="1.2" fill="#5f80ff" fill-opacity="0.96"/><circle cx="440.6" cy="424.0" r="1.2" fill="#5f80ff" fill-opacity="0.96"/><circle cx="434.9" cy="433.8" r="1.8" fill="#c9d6ff" fill-opacity="0.96"/><circle cx="465.0" cy="363.7" r="1.2" fill="#5f80ff" fill-opacity="0.96"/><circle cx="440.4" cy="386.6" r="1.8" fill="#5f80ff" fill-opacity="0.96"/><circle cx="507.5" cy="329.8" r="1.4" fill="#8eaaff" fill-opacity="0.96"/><circle cx="444.0" cy="385.0" r="1.4" fill="#5f80ff" fill-opacity="0.96"/><circle cx="597.4" cy="272.2" r="1.4" fill="#ff58b8" fill-opacity="0.96"/><circle cx="478.0" cy="354.9" r="0.8" fill="#5f80ff" fill-opacity="0.96"/><circle cx="597.9" cy="270.2" r="1.4" fill="#5f80ff" fill-opacity="0.96"/><circle cx="583.4" cy="282.0" r="1.2" fill="#5f80ff" fill-opacity="0.96"/><circle cx="438.7" cy="435.4" r="1.0" fill="#5f80ff" fill-opacity="0.96"/><circle cx="531.3" cy="313.4" r="1.8" fill="#5f80ff" fill-opacity="0.96"/><circle cx="542.3" cy="302.8" r="1.2" fill="#8eaaff" fill-opacity="0.96"/><circle cx="552.1" cy="290.0" r="0.8" fill="#8eaaff" fill-opacity="0.96"/><circle cx="430.7" cy="474.3" r="1.2" fill="#ff58b8" fill-opacity="0.96"/><circle cx="518.4" cy="314.3" r="1.8" fill="#8eaaff" fill-opacity="0.96"/><circle cx="576.1" cy="281.0" r="0.8" fill="#5f80ff" fill-opacity="0.96"/><circle cx="533.2" cy="308.3" r="1.0" fill="#c9d6ff" fill-opacity="0.96"/><circle cx="510.3" cy="320.1" r="1.4" fill="#5f80ff" fill-opacity="0.96"/><circle cx="478.3" cy="368.2" r="1.4" fill="#5f80ff" fill-opacity="0.96"/><circle cx="436.3" cy="433.5" r="1.0" fill="#c9d6ff" fill-opacity="0.96"/><circle cx="553.0" cy="300.3" r="0.8" fill="#5f80ff" fill-opacity="0.96"/><circle cx="446.9" cy="392.3" r="1.0" fill="#8eaaff" fill-opacity="0.96"/><circle cx="548.2" cy="293.9" r="1.0" fill="#ff58b8" fill-opacity="0.96"/><circle cx="527.4" cy="323.8" r="1.2" fill="#8eaaff" fill-opacity="0.96"/><circle cx="583.6" cy="274.6" r="1.4" fill="#c9d6ff" fill-opacity="0.96"/><circle cx="494.9" cy="330.4" r="0.8" fill="#5f80ff" fill-opacity="0.96"/><circle cx="448.0" cy="381.0" r="1.0" fill="#ff58b8" fill-opacity="0.96"/><circle cx="525.3" cy="320.3" r="1.2" fill="#8eaaff" fill-opacity="0.96"/><circle cx="435.1" cy="458.4" r="0.8" fill="#ff58b8" fill-opacity="0.96"/><circle cx="679.7" cy="212.0" r="1.4" fill="#8eaaff" fill-opacity="0.61"/><circle cx="631.5" cy="248.9" r="1.0" fill="#5f80ff" fill-opacity="0.61"/><circle cx="716.5" cy="187.0" r="1.8" fill="#5f80ff" fill-opacity="0.61"/><circle cx="620.0" cy="269.1" r="0.8" fill="#5f80ff" fill-opacity="0.61"/><circle cx="640.0" cy="242.3" r="1.2" fill="#8eaaff" fill-opacity="0.61"/><circle cx="716.1" cy="182.6" r="1.4" fill="#5f80ff" fill-opacity="0.61"/><circle cx="704.1" cy="192.2" r="1.4" fill="#5f80ff" fill-opacity="0.61"/><circle cx="625.1" cy="247.6" r="0.8" fill="#5f80ff" fill-opacity="0.61"/><circle cx="695.2" cy="179.1" r="1.2" fill="#5f80ff" fill-opacity="0.61"/><circle cx="694.7" cy="207.1" r="1.4" fill="#8eaaff" fill-opacity="0.61"/><circle cx="611.6" cy="265.4" r="0.8" fill="#8eaaff" fill-opacity="0.61"/><circle cx="701.6" cy="179.1" r="0.8" fill="#8eaaff" fill-opacity="0.61"/><circle cx="612.7" cy="257.6" r="1.4" fill="#5f80ff" fill-opacity="0.61"/><circle cx="629.0" cy="250.6" r="1.0" fill="#c9d6ff" fill-opacity="0.61"/><circle cx="637.4" cy="250.5" r="1.8" fill="#8eaaff" fill-opacity="0.61"/><circle cx="678.2" cy="208.2" r="0.8" fill="#5f80ff" fill-opacity="0.61"/><circle cx="646.9" cy="240.3" r="1.2" fill="#c9d6ff" fill-opacity="0.61"/><circle cx="702.2" cy="182.6" r="1.4" fill="#5f80ff" fill-opacity="0.61"/><circle cx="634.6" cy="243.6" r="1.0" fill="#5f80ff" fill-opacity="0.61"/><circle cx="480.0" cy="451.5" r="0.8" fill="#5f80ff" fill-opacity="1.00"/><circle cx="522.7" cy="370.3" r="1.4" fill="#8eaaff" fill-opacity="1.00"/><circle cx="484.5" cy="431.1" r="1.8" fill="#5f80ff" fill-opacity="1.00"/><circle cx="491.5" cy="389.6" r="1.4" fill="#5f80ff" fill-opacity="1.00"/><circle cx="466.4" cy="445.6" r="1.8" fill="#8eaaff" fill-opacity="1.00"/><circle cx="482.9" cy="403.5" r="0.8" fill="#5f80ff" fill-opacity="1.00"/><circle cx="487.1" cy="403.5" r="0.8" fill="#5f80ff" fill-opacity="1.00"/><circle cx="480.3" cy="399.6" r="0.8" fill="#8eaaff" fill-opacity="1.00"/><circle cx="494.7" cy="396.6" r="1.2" fill="#5f80ff" fill-opacity="1.00"/><circle cx="472.5" cy="433.6" r="1.8" fill="#8eaaff" fill-opacity="1.00"/><circle cx="471.7" cy="479.5" r="1.0" fill="#5f80ff" fill-opacity="1.00"/><circle cx="519.9" cy="364.2" r="0.8" fill="#5f80ff" fill-opacity="1.00"/><circle cx="458.3" cy="466.0" r="1.2" fill="#5f80ff" fill-opacity="1.00"/><circle cx="475.9" cy="452.0" r="1.4" fill="#c9d6ff" fill-opacity="1.00"/><circle cx="498.8" cy="392.0" r="1.8" fill="#5f80ff" fill-opacity="1.00"/><circle cx="461.6" cy="489.2" r="1.2" fill="#8eaaff" fill-opacity="1.00"/><circle cx="501.5" cy="381.5" r="1.2" fill="#5f80ff" fill-opacity="1.00"/><circle cx="454.7" cy="498.1" r="1.8" fill="#5f80ff" fill-opacity="1.00"/><circle cx="506.3" cy="375.2" r="1.0" fill="#5f80ff" fill-opacity="1.00"/><circle cx="469.7" cy="438.7" r="0.8" fill="#5f80ff" fill-opacity="1.00"/><circle cx="469.9" cy="452.8" r="1.4" fill="#5f80ff" fill-opacity="1.00"/><circle cx="477.0" cy="456.2" r="1.2" fill="#5f80ff" fill-opacity="1.00"/><circle cx="489.3" cy="435.3" r="1.0" fill="#5f80ff" fill-opacity="1.00"/><circle cx="459.5" cy="470.2" r="1.4" fill="#ff58b8" fill-opacity="1.00"/><circle cx="458.2" cy="483.7" r="1.4" fill="#ff58b8" fill-opacity="1.00"/><circle cx="473.7" cy="456.6" r="1.4" fill="#ff58b8" fill-opacity="1.00"/><circle cx="489.5" cy="376.7" r="1.8" fill="#5f80ff" fill-opacity="1.00"/><circle cx="451.3" cy="484.8" r="1.2" fill="#c9d6ff" fill-opacity="1.00"/><circle cx="481.2" cy="409.5" r="1.4" fill="#8eaaff" fill-opacity="1.00"/><circle cx="490.5" cy="417.8" r="1.0" fill="#5f80ff" fill-opacity="1.00"/><circle cx="469.8" cy="474.0" r="0.8" fill="#5f80ff" fill-opacity="1.00"/><circle cx="500.1" cy="378.2" r="1.2" fill="#8eaaff" fill-opacity="1.00"/><circle cx="503.8" cy="393.1" r="1.2" fill="#ff58b8" fill-opacity="1.00"/><circle cx="469.1" cy="452.8" r="1.4" fill="#5f80ff" fill-opacity="1.00"/><circle cx="520.2" cy="379.5" r="0.8" fill="#ff58b8" fill-opacity="1.00"/><circle cx="457.1" cy="495.4" r="1.0" fill="#8eaaff" fill-opacity="1.00"/><circle cx="521.6" cy="368.8" r="1.4" fill="#ff58b8" fill-opacity="1.00"/><circle cx="480.1" cy="454.8" r="1.0" fill="#5f80ff" fill-opacity="1.00"/><circle cx="517.8" cy="368.4" r="1.2" fill="#5f80ff" fill-opacity="1.00"/><circle cx="469.7" cy="465.5" r="0.8" fill="#5f80ff" fill-opacity="1.00"/><circle cx="478.7" cy="437.5" r="1.8" fill="#5f80ff" fill-opacity="1.00"/><circle cx="453.9" cy="521.4" r="0.8" fill="#8eaaff" fill-opacity="1.00"/><circle cx="481.0" cy="420.8" r="1.2" fill="#ff58b8" fill-opacity="1.00"/><circle cx="490.9" cy="397.0" r="1.4" fill="#5f80ff" fill-opacity="1.00"/><circle cx="494.8" cy="396.0" r="1.0" fill="#5f80ff" fill-opacity="1.00"/><circle cx="713.9" cy="417.6" r="1.2" fill="#5f80ff" fill-opacity="1.00"/><circle cx="693.1" cy="397.9" r="1.8" fill="#5f80ff" fill-opacity="1.00"/><circle cx="610.8" cy="364.3" r="1.0" fill="#5f80ff" fill-opacity="1.00"/><circle cx="687.3" cy="389.4" r="0.8" fill="#5f80ff" fill-opacity="1.00"/><circle cx="678.0" cy="391.6" r="0.8" fill="#8eaaff" fill-opacity="1.00"/><circle cx="596.5" cy="365.0" r="1.8" fill="#5f80ff" fill-opacity="1.00"/><circle cx="607.7" cy="366.3" r="1.0" fill="#5f80ff" fill-opacity="1.00"/><circle cx="682.3" cy="389.5" r="1.0" fill="#c9d6ff" fill-opacity="1.00"/><circle cx="527.9" cy="375.1" r="1.8" fill="#5f80ff" fill-opacity="1.00"/><circle cx="659.3" cy="382.8" r="1.2" fill="#5f80ff" fill-opacity="1.00"/><circle cx="654.7" cy="372.4" r="1.8" fill="#ff58b8" fill-opacity="1.00"/><circle cx="687.8" cy="388.4" r="1.8" fill="#5f80ff" fill-opacity="1.00"/><circle cx="726.8" cy="421.0" r="1.0" fill="#8eaaff" fill-opacity="1.00"/><circle cx="672.3" cy="375.6" r="1.0" fill="#5f80ff" fill-opacity="1.00"/><circle cx="670.2" cy="395.2" r="1.4" fill="#5f80ff" fill-opacity="1.00"/><circle cx="571.3" cy="361.6" r="1.8" fill="#5f80ff" fill-opacity="1.00"/><circle cx="571.5" cy="376.5" r="1.8" fill="#5f80ff" fill-opacity="1.00"/><circle cx="630.2" cy="375.7" r="0.8" fill="#5f80ff" fill-opacity="1.00"/><circle cx="566.0" cy="365.2" r="1.0" fill="#8eaaff" fill-opacity="1.00"/><circle cx="541.1" cy="385.2" r="1.2" fill="#ff58b8" fill-opacity="1.00"/><circle cx="711.5" cy="409.0" r="1.8" fill="#5f80ff" fill-opacity="1.00"/><circle cx="696.4" cy="393.8" r="1.2" fill="#5f80ff" fill-opacity="1.00"/><circle cx="652.4" cy="370.1" r="1.4" fill="#5f80ff" fill-opacity="1.00"/><circle cx="624.8" cy="376.2" r="0.8" fill="#5f80ff" fill-opacity="1.00"/><circle cx="721.2" cy="392.1" r="1.0" fill="#8eaaff" fill-opacity="1.00"/><circle cx="662.9" cy="382.4" r="1.0" fill="#5f80ff" fill-opacity="1.00"/><circle cx="669.1" cy="390.2" r="1.2" fill="#5f80ff" fill-opacity="1.00"/><circle cx="557.3" cy="378.1" r="1.8" fill="#5f80ff" fill-opacity="1.00"/><circle cx="604.9" cy="375.5" r="1.4" fill="#5f80ff" fill-opacity="1.00"/><circle cx="584.7" cy="371.4" r="1.8" fill="#5f80ff" fill-opacity="1.00"/><circle cx="561.5" cy="375.2" r="0.8" fill="#8eaaff" fill-opacity="1.00"/><circle cx="669.9" cy="376.2" r="1.8" fill="#c9d6ff" fill-opacity="1.00"/><circle cx="567.1" cy="370.3" r="1.0" fill="#5f80ff" fill-opacity="1.00"/><circle cx="543.2" cy="389.4" r="1.0" fill="#8eaaff" fill-opacity="1.00"/><circle cx="562.8" cy="370.5" r="1.8" fill="#5f80ff" fill-opacity="1.00"/><circle cx="601.9" cy="368.5" r="1.0" fill="#ff58b8" fill-opacity="1.00"/><circle cx="575.4" cy="365.7" r="0.8" fill="#8eaaff" fill-opacity="1.00"/><circle cx="632.4" cy="367.3" r="1.8" fill="#5f80ff" fill-opacity="1.00"/><circle cx="588.6" cy="365.9" r="1.0" fill="#5f80ff" fill-opacity="1.00"/><circle cx="633.7" cy="374.1" r="1.2" fill="#5f80ff" fill-opacity="1.00"/><circle cx="588.5" cy="352.3" r="0.8" fill="#c9d6ff" fill-opacity="1.00"/><circle cx="616.7" cy="376.2" r="1.4" fill="#5f80ff" fill-opacity="1.00"/><circle cx="729.4" cy="406.2" r="1.2" fill="#5f80ff" fill-opacity="1.00"/><circle cx="586.6" cy="367.0" r="1.8" fill="#8eaaff" fill-opacity="1.00"/><circle cx="540.5" cy="392.2" r="1.4" fill="#5f80ff" fill-opacity="1.00"/><circle cx="555.2" cy="370.5" r="1.2" fill="#8eaaff" fill-opacity="1.00"/><circle cx="688.4" cy="409.1" r="1.2" fill="#5f80ff" fill-opacity="1.00"/><circle cx="639.5" cy="381.1" r="1.2" fill="#5f80ff" fill-opacity="1.00"/><circle cx="598.9" cy="373.4" r="1.0" fill="#5f80ff" fill-opacity="1.00"/><circle cx="537.2" cy="378.7" r="0.8" fill="#ff58b8" fill-opacity="1.00"/><circle cx="715.4" cy="420.4" r="1.0" fill="#5f80ff" fill-opacity="1.00"/><circle cx="613.2" cy="355.2" r="1.2" fill="#5f80ff" fill-opacity="1.00"/><circle cx="688.5" cy="407.1" r="0.8" fill="#5f80ff" fill-opacity="1.00"/><circle cx="528.1" cy="383.2" r="1.2" fill="#5f80ff" fill-opacity="1.00"/><circle cx="604.1" cy="381.6" r="1.0" fill="#5f80ff" fill-opacity="1.00"/><circle cx="565.3" cy="377.7" r="1.8" fill="#5f80ff" fill-opacity="1.00"/><circle cx="627.9" cy="362.0" r="1.4" fill="#8eaaff" fill-opacity="1.00"/><circle cx="710.3" cy="399.4" r="0.8" fill="#c9d6ff" fill-opacity="1.00"/><circle cx="557.9" cy="374.9" r="1.4" fill="#5f80ff" fill-opacity="1.00"/><circle cx="618.4" cy="371.7" r="1.4" fill="#8eaaff" fill-opacity="1.00"/><circle cx="596.8" cy="367.4" r="1.2" fill="#ff58b8" fill-opacity="1.00"/><circle cx="670.9" cy="400.7" r="1.0" fill="#8eaaff" fill-opacity="1.00"/><circle cx="616.7" cy="361.0" r="1.2" fill="#5f80ff" fill-opacity="1.00"/><circle cx="719.7" cy="401.2" r="0.8" fill="#8eaaff" fill-opacity="1.00"/><circle cx="633.1" cy="372.4" r="0.8" fill="#ff58b8" fill-opacity="1.00"/><circle cx="634.1" cy="387.3" r="0.8" fill="#ff58b8" fill-opacity="1.00"/><circle cx="696.7" cy="401.4" r="1.2" fill="#5f80ff" fill-opacity="1.00"/><circle cx="538.6" cy="390.8" r="1.0" fill="#5f80ff" fill-opacity="1.00"/><circle cx="586.6" cy="367.3" r="1.8" fill="#c9d6ff" fill-opacity="1.00"/><circle cx="534.5" cy="396.3" r="1.8" fill="#5f80ff" fill-opacity="1.00"/><circle cx="680.3" cy="381.2" r="1.2" fill="#5f80ff" fill-opacity="1.00"/><circle cx="559.8" cy="371.3" r="1.0" fill="#8eaaff" fill-opacity="1.00"/><circle cx="704.9" cy="405.3" r="1.0" fill="#5f80ff" fill-opacity="1.00"/><circle cx="682.9" cy="383.0" r="1.2" fill="#5f80ff" fill-opacity="1.00"/><circle cx="596.7" cy="374.0" r="1.4" fill="#5f80ff" fill-opacity="1.00"/><circle cx="586.2" cy="374.6" r="1.8" fill="#8eaaff" fill-opacity="1.00"/><circle cx="557.8" cy="380.2" r="1.2" fill="#5f80ff" fill-opacity="1.00"/><circle cx="634.9" cy="376.6" r="0.8" fill="#5f80ff" fill-opacity="1.00"/><circle cx="636.5" cy="372.4" r="1.2" fill="#5f80ff" fill-opacity="1.00"/><circle cx="718.6" cy="403.5" r="1.2" fill="#5f80ff" fill-opacity="1.00"/><circle cx="699.7" cy="407.0" r="1.0" fill="#ff58b8" fill-opacity="1.00"/><circle cx="555.2" cy="369.3" r="1.0" fill="#8eaaff" fill-opacity="1.00"/><circle cx="600.5" cy="363.2" r="1.4" fill="#8eaaff" fill-opacity="1.00"/><circle cx="605.8" cy="371.0" r="0.8" fill="#5f80ff" fill-opacity="1.00"/><circle cx="721.3" cy="396.4" r="1.0" fill="#5f80ff" fill-opacity="1.00"/><circle cx="591.1" cy="371.2" r="1.4" fill="#5f80ff" fill-opacity="1.00"/><circle cx="702.5" cy="400.3" r="0.8" fill="#ff58b8" fill-opacity="1.00"/><circle cx="698.6" cy="532.6" r="0.8" fill="#5f80ff" fill-opacity="0.52"/><circle cx="735.0" cy="399.7" r="1.0" fill="#5f80ff" fill-opacity="0.52"/><circle cx="656.5" cy="578.8" r="1.2" fill="#5f80ff" fill-opacity="0.52"/><circle cx="659.5" cy="575.5" r="1.4" fill="#8eaaff" fill-opacity="0.52"/><circle cx="676.6" cy="516.4" r="1.0" fill="#5f80ff" fill-opacity="0.52"/><circle cx="689.0" cy="457.6" r="1.4" fill="#5f80ff" fill-opacity="0.52"/><circle cx="708.5" cy="491.9" r="1.8" fill="#5f80ff" fill-opacity="0.52"/><circle cx="681.6" cy="544.1" r="1.0" fill="#5f80ff" fill-opacity="0.52"/><circle cx="695.4" cy="523.1" r="0.8" fill="#5f80ff" fill-opacity="0.52"/><circle cx="731.1" cy="407.0" r="0.8" fill="#5f80ff" fill-opacity="0.52"/><circle cx="629.5" cy="586.3" r="1.0" fill="#c9d6ff" fill-opacity="0.52"/><circle cx="642.0" cy="614.6" r="1.8" fill="#5f80ff" fill-opacity="0.52"/><circle cx="725.1" cy="459.2" r="1.8" fill="#5f80ff" fill-opacity="0.52"/><circle cx="685.7" cy="452.5" r="1.4" fill="#5f80ff" fill-opacity="0.95"/><circle cx="649.6" cy="590.3" r="1.0" fill="#5f80ff" fill-opacity="0.95"/><circle cx="651.2" cy="580.1" r="1.8" fill="#5f80ff" fill-opacity="0.95"/><circle cx="653.5" cy="542.0" r="0.8" fill="#c9d6ff" fill-opacity="0.95"/><circle cx="653.9" cy="408.1" r="1.0" fill="#8eaaff" fill-opacity="0.95"/><circle cx="628.9" cy="588.9" r="1.8" fill="#ff58b8" fill-opacity="0.95"/><circle cx="671.3" cy="430.0" r="1.4" fill="#5f80ff" fill-opacity="0.95"/><circle cx="664.4" cy="565.9" r="1.0" fill="#5f80ff" fill-opacity="0.95"/><circle cx="630.2" cy="593.6" r="1.2" fill="#8eaaff" fill-opacity="0.95"/><circle cx="668.3" cy="527.7" r="1.2" fill="#8eaaff" fill-opacity="0.95"/><circle cx="670.4" cy="485.1" r="1.0" fill="#5f80ff" fill-opacity="0.95"/><circle cx="658.6" cy="438.8" r="1.0" fill="#5f80ff" fill-opacity="0.95"/><circle cx="674.5" cy="452.8" r="1.4" fill="#5f80ff" fill-opacity="0.95"/><circle cx="667.3" cy="511.5" r="1.2" fill="#c9d6ff" fill-opacity="0.95"/><circle cx="678.2" cy="462.1" r="0.8" fill="#8eaaff" fill-opacity="0.95"/><circle cx="660.1" cy="432.4" r="1.4" fill="#c9d6ff" fill-opacity="0.95"/><circle cx="663.1" cy="465.6" r="1.0" fill="#ff58b8" fill-opacity="0.95"/><circle cx="652.5" cy="409.9" r="1.2" fill="#ff58b8" fill-opacity="0.95"/><circle cx="675.0" cy="499.4" r="1.4" fill="#c9d6ff" fill-opacity="0.95"/><circle cx="660.8" cy="431.7" r="1.4" fill="#ff58b8" fill-opacity="0.95"/><circle cx="638.7" cy="574.6" r="0.8" fill="#5f80ff" fill-opacity="0.95"/><circle cx="631.9" cy="581.9" r="1.4" fill="#5f80ff" fill-opacity="0.95"/><circle cx="668.3" cy="507.6" r="1.8" fill="#5f80ff" fill-opacity="0.95"/><circle cx="674.4" cy="535.0" r="1.4" fill="#5f80ff" fill-opacity="0.95"/><circle cx="661.8" cy="558.3" r="1.2" fill="#5f80ff" fill-opacity="0.95"/><circle cx="668.2" cy="531.7" r="1.8" fill="#5f80ff" fill-opacity="0.95"/><circle cx="626.3" cy="590.4" r="0.8" fill="#ff58b8" fill-opacity="0.95"/><circle cx="668.6" cy="427.4" r="0.8" fill="#5f80ff" fill-opacity="0.95"/><circle cx="651.1" cy="568.3" r="0.8" fill="#8eaaff" fill-opacity="0.95"/><circle cx="667.1" cy="544.2" r="1.0" fill="#ff58b8" fill-opacity="0.95"/><circle cx="633.7" cy="591.9" r="1.2" fill="#5f80ff" fill-opacity="0.95"/><circle cx="672.2" cy="545.4" r="1.4" fill="#5f80ff" fill-opacity="0.95"/><circle cx="651.9" cy="573.3" r="1.4" fill="#8eaaff" fill-opacity="0.95"/><circle cx="670.9" cy="531.3" r="1.4" fill="#ff58b8" fill-opacity="0.95"/><circle cx="666.2" cy="548.2" r="1.0" fill="#ff58b8" fill-opacity="0.95"/><circle cx="673.8" cy="454.8" r="1.2" fill="#c9d6ff" fill-opacity="0.95"/><circle cx="676.5" cy="462.6" r="1.0" fill="#8eaaff" fill-opacity="0.95"/><circle cx="660.2" cy="408.3" r="1.4" fill="#5f80ff" fill-opacity="0.95"/><circle cx="652.8" cy="581.0" r="1.0" fill="#5f80ff" fill-opacity="0.95"/><circle cx="663.6" cy="528.1" r="1.2" fill="#ff58b8" fill-opacity="0.95"/><circle cx="673.8" cy="475.7" r="1.0" fill="#5f80ff" fill-opacity="0.95"/><circle cx="672.5" cy="449.5" r="0.8" fill="#5f80ff" fill-opacity="0.95"/><circle cx="666.0" cy="443.5" r="1.8" fill="#5f80ff" fill-opacity="0.95"/><circle cx="676.2" cy="459.7" r="1.0" fill="#8eaaff" fill-opacity="0.95"/><circle cx="683.6" cy="493.2" r="1.0" fill="#5f80ff" fill-opacity="0.95"/><circle cx="653.8" cy="572.9" r="1.8" fill="#5f80ff" fill-opacity="0.95"/><circle cx="673.4" cy="527.9" r="0.8" fill="#5f80ff" fill-opacity="0.95"/><circle cx="632.7" cy="587.5" r="0.8" fill="#5f80ff" fill-opacity="0.95"/><circle cx="679.0" cy="480.8" r="1.4" fill="#5f80ff" fill-opacity="0.95"/><circle cx="661.1" cy="538.3" r="1.8" fill="#5f80ff" fill-opacity="0.95"/><circle cx="659.5" cy="571.0" r="1.2" fill="#8eaaff" fill-opacity="0.95"/><circle cx="654.1" cy="572.1" r="0.8" fill="#8eaaff" fill-opacity="0.95"/><circle cx="682.1" cy="472.1" r="1.8" fill="#ff58b8" fill-opacity="0.95"/><circle cx="671.7" cy="477.1" r="0.8" fill="#ff58b8" fill-opacity="0.95"/><circle cx="667.4" cy="563.7" r="1.4" fill="#ff58b8" fill-opacity="0.95"/><circle cx="663.4" cy="429.6" r="0.8" fill="#8eaaff" fill-opacity="0.95"/><circle cx="640.5" cy="556.2" r="0.8" fill="#8eaaff" fill-opacity="0.95"/><circle cx="664.4" cy="449.2" r="1.4" fill="#5f80ff" fill-opacity="0.95"/><circle cx="665.2" cy="523.1" r="1.0" fill="#c9d6ff" fill-opacity="0.95"/><circle cx="670.1" cy="511.6" r="1.8" fill="#8eaaff" fill-opacity="0.95"/><circle cx="665.4" cy="425.7" r="1.4" fill="#8eaaff" fill-opacity="0.95"/><circle cx="665.6" cy="462.5" r="1.4" fill="#5f80ff" fill-opacity="0.95"/><circle cx="606.6" cy="566.6" r="0.8" fill="#5f80ff" fill-opacity="0.79"/><circle cx="472.9" cy="582.5" r="1.2" fill="#8eaaff" fill-opacity="0.79"/><circle cx="444.3" cy="602.2" r="1.4" fill="#5f80ff" fill-opacity="0.79"/><circle cx="631.3" cy="548.7" r="0.8" fill="#5f80ff" fill-opacity="0.79"/><circle cx="533.0" cy="580.9" r="0.8" fill="#8eaaff" fill-opacity="0.79"/><circle cx="617.9" cy="565.4" r="0.8" fill="#5f80ff" fill-opacity="0.79"/><circle cx="587.4" cy="576.9" r="1.8" fill="#5f80ff" fill-opacity="0.79"/><circle cx="555.2" cy="576.7" r="1.4" fill="#5f80ff" fill-opacity="0.79"/><circle cx="588.9" cy="571.7" r="0.8" fill="#5f80ff" fill-opacity="0.79"/><circle cx="620.8" cy="554.1" r="1.0" fill="#c9d6ff" fill-opacity="0.79"/><circle cx="512.0" cy="591.4" r="0.8" fill="#5f80ff" fill-opacity="0.79"/><circle cx="637.5" cy="554.0" r="0.8" fill="#8eaaff" fill-opacity="0.79"/><circle cx="456.4" cy="601.9" r="1.8" fill="#5f80ff" fill-opacity="0.79"/><circle cx="603.8" cy="562.4" r="1.8" fill="#8eaaff" fill-opacity="0.79"/><circle cx="449.4" cy="606.7" r="0.8" fill="#5f80ff" fill-opacity="0.79"/><circle cx="516.1" cy="593.0" r="1.2" fill="#ff58b8" fill-opacity="0.79"/><circle cx="587.1" cy="563.1" r="1.0" fill="#5f80ff" fill-opacity="0.79"/><circle cx="516.9" cy="582.6" r="1.2" fill="#5f80ff" fill-opacity="0.79"/><circle cx="489.6" cy="593.6" r="1.4" fill="#8eaaff" fill-opacity="0.79"/><circle cx="542.2" cy="586.6" r="1.4" fill="#5f80ff" fill-opacity="0.79"/><circle cx="568.3" cy="577.4" r="1.8" fill="#5f80ff" fill-opacity="0.79"/><circle cx="559.7" cy="582.3" r="0.8" fill="#8eaaff" fill-opacity="0.79"/><circle cx="630.2" cy="553.1" r="1.0" fill="#5f80ff" fill-opacity="0.79"/><circle cx="507.5" cy="584.4" r="1.4" fill="#8eaaff" fill-opacity="0.79"/><circle cx="626.0" cy="560.8" r="1.0" fill="#5f80ff" fill-opacity="0.79"/><circle cx="486.1" cy="577.8" r="1.0" fill="#8eaaff" fill-opacity="0.79"/><circle cx="495.4" cy="588.8" r="0.8" fill="#5f80ff" fill-opacity="0.79"/><circle cx="444.4" cy="611.9" r="1.0" fill="#5f80ff" fill-opacity="0.79"/><circle cx="582.5" cy="564.1" r="1.2" fill="#5f80ff" fill-opacity="0.79"/><circle cx="571.2" cy="576.8" r="1.4" fill="#c9d6ff" fill-opacity="0.79"/><circle cx="579.3" cy="580.5" r="1.0" fill="#8eaaff" fill-opacity="0.79"/><circle cx="473.4" cy="614.3" r="1.4" fill="#5f80ff" fill-opacity="0.79"/><circle cx="486.6" cy="591.3" r="1.2" fill="#8eaaff" fill-opacity="0.79"/><circle cx="628.7" cy="538.8" r="1.0" fill="#5f80ff" fill-opacity="0.79"/><circle cx="639.9" cy="537.1" r="1.2" fill="#8eaaff" fill-opacity="0.79"/><circle cx="441.9" cy="613.0" r="1.4" fill="#8eaaff" fill-opacity="0.79"/><circle cx="606.5" cy="570.1" r="1.4" fill="#ff58b8" fill-opacity="0.79"/><circle cx="527.3" cy="591.6" r="0.8" fill="#ff58b8" fill-opacity="0.79"/><circle cx="550.8" cy="574.7" r="0.8" fill="#8eaaff" fill-opacity="0.79"/><circle cx="538.7" cy="595.3" r="1.8" fill="#5f80ff" fill-opacity="0.79"/><circle cx="596.1" cy="576.5" r="1.0" fill="#ff58b8" fill-opacity="0.79"/><circle cx="617.2" cy="567.1" r="1.4" fill="#5f80ff" fill-opacity="0.79"/><circle cx="537.0" cy="581.4" r="1.4" fill="#5f80ff" fill-opacity="0.79"/><circle cx="467.9" cy="589.3" r="1.4" fill="#5f80ff" fill-opacity="0.79"/><circle cx="458.6" cy="593.9" r="1.2" fill="#5f80ff" fill-opacity="0.79"/><circle cx="560.3" cy="573.2" r="1.4" fill="#8eaaff" fill-opacity="0.79"/><circle cx="507.9" cy="578.3" r="1.8" fill="#ff58b8" fill-opacity="0.79"/><circle cx="554.9" cy="577.7" r="1.4" fill="#5f80ff" fill-opacity="0.79"/><circle cx="455.6" cy="597.3" r="1.2" fill="#8eaaff" fill-opacity="0.79"/><circle cx="508.5" cy="590.2" r="1.2" fill="#5f80ff" fill-opacity="0.79"/><circle cx="462.7" cy="610.8" r="0.8" fill="#5f80ff" fill-opacity="0.79"/><circle cx="545.3" cy="579.0" r="1.4" fill="#5f80ff" fill-opacity="0.79"/><circle cx="599.9" cy="568.3" r="1.2" fill="#5f80ff" fill-opacity="0.79"/><circle cx="616.1" cy="569.7" r="1.8" fill="#5f80ff" fill-opacity="0.79"/><circle cx="517.1" cy="586.4" r="1.2" fill="#ff58b8" fill-opacity="0.79"/><circle cx="620.1" cy="562.3" r="1.0" fill="#ff58b8" fill-opacity="0.79"/><circle cx="452.0" cy="599.2" r="1.0" fill="#8eaaff" fill-opacity="0.79"/><circle cx="548.2" cy="576.3" r="1.2" fill="#8eaaff" fill-opacity="0.79"/><circle cx="458.9" cy="599.9" r="1.2" fill="#5f80ff" fill-opacity="0.79"/><circle cx="512.8" cy="579.2" r="1.2" fill="#5f80ff" fill-opacity="0.79"/><circle cx="612.6" cy="566.9" r="0.8" fill="#5f80ff" fill-opacity="0.79"/><circle cx="578.7" cy="576.3" r="1.4" fill="#5f80ff" fill-opacity="0.79"/><circle cx="509.0" cy="578.7" r="1.8" fill="#ff58b8" fill-opacity="0.79"/><circle cx="597.3" cy="566.8" r="1.8" fill="#8eaaff" fill-opacity="0.79"/><circle cx="577.5" cy="582.3" r="1.2" fill="#8eaaff" fill-opacity="0.79"/><circle cx="504.9" cy="591.3" r="1.2" fill="#5f80ff" fill-opacity="0.79"/><circle cx="598.3" cy="571.2" r="1.8" fill="#8eaaff" fill-opacity="0.79"/><circle cx="594.3" cy="577.9" r="1.8" fill="#c9d6ff" fill-opacity="0.79"/><circle cx="474.3" cy="587.7" r="0.8" fill="#5f80ff" fill-opacity="0.79"/><circle cx="501.8" cy="585.2" r="1.2" fill="#5f80ff" fill-opacity="0.79"/><circle cx="617.1" cy="570.0" r="0.8" fill="#5f80ff" fill-opacity="0.79"/><circle cx="525.1" cy="575.4" r="1.8" fill="#5f80ff" fill-opacity="0.79"/><circle cx="529.9" cy="582.4" r="1.8" fill="#8eaaff" fill-opacity="0.79"/><circle cx="482.0" cy="589.2" r="0.8" fill="#5f80ff" fill-opacity="0.79"/><circle cx="521.8" cy="591.8" r="0.8" fill="#5f80ff" fill-opacity="0.79"/><circle cx="510.6" cy="592.3" r="1.2" fill="#5f80ff" fill-opacity="0.79"/><circle cx="463.3" cy="600.0" r="1.8" fill="#c9d6ff" fill-opacity="0.79"/><circle cx="615.9" cy="557.3" r="0.8" fill="#8eaaff" fill-opacity="0.79"/><circle cx="431.9" cy="601.7" r="1.8" fill="#ff58b8" fill-opacity="0.79"/><circle cx="567.3" cy="578.5" r="1.8" fill="#5f80ff" fill-opacity="0.79"/><circle cx="636.6" cy="550.0" r="1.2" fill="#c9d6ff" fill-opacity="0.79"/><circle cx="631.2" cy="547.4" r="1.0" fill="#8eaaff" fill-opacity="0.79"/><circle cx="516.0" cy="576.0" r="0.8" fill="#5f80ff" fill-opacity="0.79"/><circle cx="630.9" cy="551.6" r="1.4" fill="#ff58b8" fill-opacity="0.79"/><circle cx="471.1" cy="555.3" r="1.4" fill="#5f80ff" fill-opacity="0.78"/><circle cx="523.4" cy="555.0" r="1.2" fill="#5f80ff" fill-opacity="0.78"/><circle cx="459.3" cy="547.1" r="1.0" fill="#c9d6ff" fill-opacity="0.78"/><circle cx="475.0" cy="554.9" r="1.2" fill="#5f80ff" fill-opacity="0.78"/><circle cx="454.5" cy="531.7" r="1.0" fill="#8eaaff" fill-opacity="0.78"/><circle cx="500.5" cy="562.7" r="1.2" fill="#5f80ff" fill-opacity="0.78"/><circle cx="454.2" cy="512.5" r="1.2" fill="#5f80ff" fill-opacity="0.78"/><circle cx="518.5" cy="545.2" r="1.0" fill="#5f80ff" fill-opacity="0.78"/><circle cx="448.2" cy="510.7" r="1.4" fill="#5f80ff" fill-opacity="0.78"/><circle cx="470.6" cy="550.9" r="1.2" fill="#5f80ff" fill-opacity="0.78"/><circle cx="457.1" cy="514.2" r="1.0" fill="#5f80ff" fill-opacity="0.78"/><circle cx="509.3" cy="550.0" r="1.0" fill="#5f80ff" fill-opacity="0.78"/><circle cx="446.4" cy="538.3" r="0.8" fill="#5f80ff" fill-opacity="0.78"/><circle cx="454.1" cy="507.9" r="0.8" fill="#5f80ff" fill-opacity="0.78"/><circle cx="452.7" cy="532.2" r="1.4" fill="#c9d6ff" fill-opacity="0.78"/><circle cx="455.5" cy="557.6" r="1.0" fill="#ff58b8" fill-opacity="0.78"/><circle cx="466.3" cy="545.2" r="1.0" fill="#8eaaff" fill-opacity="0.78"/><circle cx="461.6" cy="532.3" r="1.4" fill="#5f80ff" fill-opacity="0.78"/><circle cx="521.0" cy="557.2" r="0.8" fill="#c9d6ff" fill-opacity="0.78"/><circle cx="516.6" cy="555.5" r="1.2" fill="#5f80ff" fill-opacity="0.78"/><circle cx="501.4" cy="560.7" r="1.8" fill="#ff58b8" fill-opacity="0.78"/><circle cx="478.0" cy="546.1" r="0.8" fill="#5f80ff" fill-opacity="0.78"/><circle cx="466.4" cy="538.1" r="1.8" fill="#5f80ff" fill-opacity="0.78"/><circle cx="462.9" cy="545.7" r="1.4" fill="#8eaaff" fill-opacity="0.78"/><circle cx="491.0" cy="557.8" r="1.4" fill="#5f80ff" fill-opacity="0.78"/><circle cx="455.4" cy="538.2" r="0.8" fill="#5f80ff" fill-opacity="0.78"/><circle cx="494.9" cy="556.9" r="1.0" fill="#5f80ff" fill-opacity="0.78"/><circle cx="471.3" cy="547.4" r="0.8" fill="#5f80ff" fill-opacity="0.78"/><circle cx="477.5" cy="546.1" r="0.8" fill="#5f80ff" fill-opacity="0.78"/><circle cx="448.8" cy="534.1" r="0.8" fill="#5f80ff" fill-opacity="0.78"/><circle cx="492.8" cy="552.4" r="1.2" fill="#8eaaff" fill-opacity="0.78"/><circle cx="464.4" cy="549.3" r="1.8" fill="#8eaaff" fill-opacity="0.78"/><circle cx="466.6" cy="555.3" r="1.2" fill="#5f80ff" fill-opacity="0.78"/><circle cx="380.4" cy="584.7" r="1.0" fill="#5f80ff" fill-opacity="0.70"/><circle cx="377.1" cy="586.8" r="1.0" fill="#c9d6ff" fill-opacity="0.70"/><circle cx="405.4" cy="539.2" r="1.0" fill="#8eaaff" fill-opacity="0.70"/><circle cx="400.0" cy="538.7" r="0.8" fill="#5f80ff" fill-opacity="0.70"/><circle cx="379.8" cy="594.0" r="1.8" fill="#8eaaff" fill-opacity="0.70"/><circle cx="432.4" cy="450.5" r="1.4" fill="#5f80ff" fill-opacity="0.70"/><circle cx="366.6" cy="604.4" r="1.2" fill="#5f80ff" fill-opacity="0.70"/><circle cx="383.0" cy="569.6" r="0.8" fill="#5f80ff" fill-opacity="0.70"/><circle cx="389.6" cy="560.2" r="0.8" fill="#5f80ff" fill-opacity="0.70"/><circle cx="391.8" cy="544.7" r="1.8" fill="#5f80ff" fill-opacity="0.70"/><circle cx="383.7" cy="534.2" r="1.4" fill="#ff58b8" fill-opacity="0.70"/><circle cx="422.7" cy="504.7" r="1.8" fill="#5f80ff" fill-opacity="0.70"/><circle cx="415.2" cy="496.7" r="1.4" fill="#ff58b8" fill-opacity="0.70"/><circle cx="423.3" cy="477.3" r="1.2" fill="#ff58b8" fill-opacity="0.70"/><circle cx="428.7" cy="503.5" r="1.0" fill="#5f80ff" fill-opacity="0.70"/><circle cx="443.9" cy="455.8" r="1.4" fill="#8eaaff" fill-opacity="0.70"/><circle cx="366.2" cy="596.7" r="0.8" fill="#c9d6ff" fill-opacity="0.70"/><circle cx="438.7" cy="506.3" r="1.4" fill="#5f80ff" fill-opacity="0.70"/><circle cx="414.4" cy="493.7" r="1.2" fill="#c9d6ff" fill-opacity="0.70"/><circle cx="362.6" cy="595.6" r="0.8" fill="#5f80ff" fill-opacity="0.70"/><circle cx="390.6" cy="540.1" r="0.8" fill="#5f80ff" fill-opacity="0.70"/><circle cx="373.3" cy="566.5" r="1.4" fill="#8eaaff" fill-opacity="0.70"/><circle cx="437.7" cy="464.0" r="1.0" fill="#5f80ff" fill-opacity="0.70"/><circle cx="370.3" cy="594.4" r="1.8" fill="#5f80ff" fill-opacity="0.70"/><circle cx="381.1" cy="568.4" r="1.2" fill="#8eaaff" fill-opacity="0.70"/><circle cx="422.9" cy="493.7" r="0.8" fill="#5f80ff" fill-opacity="0.70"/><circle cx="358.6" cy="583.4" r="0.8" fill="#5f80ff" fill-opacity="0.70"/><circle cx="414.9" cy="541.5" r="0.8" fill="#5f80ff" fill-opacity="0.70"/><circle cx="384.1" cy="584.3" r="1.8" fill="#5f80ff" fill-opacity="0.70"/><circle cx="426.4" cy="501.9" r="1.4" fill="#5f80ff" fill-opacity="0.70"/><circle cx="424.2" cy="483.0" r="1.2" fill="#5f80ff" fill-opacity="0.70"/><circle cx="364.1" cy="605.6" r="1.0" fill="#8eaaff" fill-opacity="0.70"/><circle cx="436.4" cy="478.9" r="1.4" fill="#8eaaff" fill-opacity="0.70"/><circle cx="377.1" cy="574.1" r="1.8" fill="#c9d6ff" fill-opacity="0.70"/><circle cx="408.6" cy="514.0" r="0.8" fill="#5f80ff" fill-opacity="0.70"/><circle cx="429.5" cy="519.2" r="1.8" fill="#5f80ff" fill-opacity="0.70"/><circle cx="383.4" cy="582.9" r="1.8" fill="#8eaaff" fill-opacity="0.70"/><circle cx="403.4" cy="542.0" r="0.8" fill="#8eaaff" fill-opacity="0.70"/><circle cx="398.5" cy="568.8" r="1.4" fill="#5f80ff" fill-opacity="0.70"/><circle cx="415.8" cy="516.0" r="0.8" fill="#5f80ff" fill-opacity="0.70"/><circle cx="379.4" cy="558.1" r="1.0" fill="#c9d6ff" fill-opacity="0.70"/><circle cx="368.7" cy="567.5" r="1.4" fill="#ff58b8" fill-opacity="0.70"/><circle cx="412.7" cy="505.8" r="0.8" fill="#5f80ff" fill-opacity="0.70"/><circle cx="372.8" cy="591.2" r="1.4" fill="#5f80ff" fill-opacity="0.70"/><circle cx="398.3" cy="548.7" r="1.4" fill="#8eaaff" fill-opacity="0.70"/><circle cx="431.8" cy="502.7" r="1.4" fill="#c9d6ff" fill-opacity="0.70"/><circle cx="412.6" cy="527.0" r="1.2" fill="#5f80ff" fill-opacity="0.70"/><circle cx="423.4" cy="501.4" r="1.8" fill="#5f80ff" fill-opacity="0.70"/><circle cx="393.2" cy="546.3" r="0.8" fill="#8eaaff" fill-opacity="0.70"/><circle cx="406.4" cy="522.8" r="1.4" fill="#5f80ff" fill-opacity="0.70"/><circle cx="382.4" cy="564.6" r="1.4" fill="#ff58b8" fill-opacity="0.70"/><circle cx="369.8" cy="597.1" r="1.4" fill="#8eaaff" fill-opacity="0.70"/><circle cx="366.9" cy="586.7" r="1.8" fill="#c9d6ff" fill-opacity="0.70"/><circle cx="392.3" cy="547.7" r="1.0" fill="#5f80ff" fill-opacity="0.70"/><circle cx="377.9" cy="597.7" r="1.4" fill="#5f80ff" fill-opacity="0.70"/><circle cx="408.9" cy="538.2" r="1.8" fill="#8eaaff" fill-opacity="0.70"/><circle cx="394.9" cy="533.5" r="1.4" fill="#5f80ff" fill-opacity="0.70"/><circle cx="386.5" cy="563.3" r="1.0" fill="#ff58b8" fill-opacity="0.70"/><circle cx="411.4" cy="527.4" r="1.4" fill="#5f80ff" fill-opacity="0.70"/><circle cx="374.4" cy="595.7" r="1.4" fill="#5f80ff" fill-opacity="0.70"/><circle cx="400.4" cy="527.7" r="1.2" fill="#5f80ff" fill-opacity="0.70"/><circle cx="368.9" cy="589.3" r="0.8" fill="#5f80ff" fill-opacity="0.70"/><circle cx="365.8" cy="603.3" r="0.8" fill="#5f80ff" fill-opacity="0.70"/><circle cx="362.8" cy="602.6" r="1.2" fill="#5f80ff" fill-opacity="0.70"/><circle cx="370.5" cy="598.3" r="1.4" fill="#5f80ff" fill-opacity="0.70"/><circle cx="386.9" cy="550.3" r="0.8" fill="#5f80ff" fill-opacity="0.70"/><circle cx="368.5" cy="576.9" r="0.8" fill="#c9d6ff" fill-opacity="0.70"/><circle cx="396.0" cy="540.1" r="0.8" fill="#5f80ff" fill-opacity="0.70"/><circle cx="419.9" cy="486.0" r="1.4" fill="#8eaaff" fill-opacity="0.70"/><circle cx="421.5" cy="497.3" r="0.8" fill="#5f80ff" fill-opacity="0.70"/><circle cx="389.6" cy="544.7" r="1.2" fill="#8eaaff" fill-opacity="0.70"/><circle cx="369.0" cy="606.2" r="0.8" fill="#c9d6ff" fill-opacity="0.70"/><circle cx="461.1" cy="565.0" r="1.2" fill="#5f80ff" fill-opacity="0.61"/><circle cx="382.5" cy="547.4" r="1.2" fill="#ff58b8" fill-opacity="0.61"/><circle cx="398.2" cy="554.7" r="1.2" fill="#5f80ff" fill-opacity="0.61"/><circle cx="408.6" cy="550.6" r="0.8" fill="#5f80ff" fill-opacity="0.61"/><circle cx="479.8" cy="575.4" r="1.8" fill="#c9d6ff" fill-opacity="0.61"/><circle cx="396.2" cy="557.4" r="1.2" fill="#5f80ff" fill-opacity="0.61"/><circle cx="422.2" cy="551.9" r="1.0" fill="#ff58b8" fill-opacity="0.61"/><circle cx="449.3" cy="570.2" r="1.2" fill="#8eaaff" fill-opacity="0.61"/><circle cx="423.8" cy="579.7" r="1.0" fill="#5f80ff" fill-opacity="0.61"/><circle cx="384.5" cy="559.5" r="0.8" fill="#ff58b8" fill-opacity="0.61"/><circle cx="484.8" cy="584.2" r="1.8" fill="#c9d6ff" fill-opacity="0.61"/><circle cx="382.1" cy="548.7" r="1.2" fill="#8eaaff" fill-opacity="0.61"/><circle cx="428.2" cy="562.9" r="0.8" fill="#8eaaff" fill-opacity="0.61"/><circle cx="439.2" cy="569.7" r="1.0" fill="#5f80ff" fill-opacity="0.61"/><circle cx="376.5" cy="539.2" r="1.2" fill="#5f80ff" fill-opacity="0.61"/><circle cx="474.0" cy="588.4" r="1.2" fill="#5f80ff" fill-opacity="0.61"/><circle cx="379.5" cy="552.6" r="1.2" fill="#5f80ff" fill-opacity="0.61"/><circle cx="419.5" cy="575.0" r="1.2" fill="#5f80ff" fill-opacity="0.61"/><circle cx="400.5" cy="549.7" r="1.8" fill="#5f80ff" fill-opacity="0.61"/><circle cx="453.4" cy="564.9" r="1.8" fill="#8eaaff" fill-opacity="0.61"/><circle cx="430.2" cy="561.9" r="1.4" fill="#ff58b8" fill-opacity="0.61"/><circle cx="415.3" cy="566.5" r="1.8" fill="#5f80ff" fill-opacity="0.61"/><circle cx="481.6" cy="568.1" r="1.2" fill="#5f80ff" fill-opacity="0.61"/><circle cx="407.4" cy="570.3" r="0.8" fill="#8eaaff" fill-opacity="0.61"/><circle cx="572.4" cy="618.6" r="1.8" fill="#8eaaff" fill-opacity="0.61"/><circle cx="599.3" cy="604.3" r="1.4" fill="#5f80ff" fill-opacity="0.61"/><circle cx="577.9" cy="610.0" r="1.0" fill="#5f80ff" fill-opacity="0.61"/><circle cx="562.5" cy="621.0" r="1.4" fill="#5f80ff" fill-opacity="0.61"/><circle cx="589.3" cy="618.6" r="1.2" fill="#c9d6ff" fill-opacity="0.61"/><circle cx="517.6" cy="617.8" r="1.0" fill="#8eaaff" fill-opacity="0.61"/><circle cx="513.7" cy="627.4" r="1.4" fill="#8eaaff" fill-opacity="0.61"/><circle cx="630.0" cy="582.1" r="1.0" fill="#5f80ff" fill-opacity="0.61"/><circle cx="566.0" cy="618.4" r="1.4" fill="#8eaaff" fill-opacity="0.61"/><circle cx="606.2" cy="613.4" r="1.8" fill="#5f80ff" fill-opacity="0.61"/><circle cx="559.3" cy="609.5" r="1.8" fill="#5f80ff" fill-opacity="0.61"/><circle cx="576.4" cy="630.9" r="1.8" fill="#5f80ff" fill-opacity="0.61"/><circle cx="550.9" cy="635.7" r="1.0" fill="#8eaaff" fill-opacity="0.61"/><circle cx="511.0" cy="625.6" r="1.0" fill="#8eaaff" fill-opacity="0.61"/><circle cx="509.1" cy="602.3" r="1.2" fill="#ff58b8" fill-opacity="0.61"/><circle cx="550.4" cy="627.1" r="0.8" fill="#c9d6ff" fill-opacity="0.61"/><circle cx="516.5" cy="612.2" r="1.2" fill="#5f80ff" fill-opacity="0.61"/><circle cx="543.9" cy="628.9" r="0.8" fill="#5f80ff" fill-opacity="0.61"/><circle cx="575.7" cy="624.2" r="0.8" fill="#5f80ff" fill-opacity="0.61"/><circle cx="408.8" cy="680.2" r="0.8" fill="#c9d6ff" fill-opacity="0.57"/><circle cx="634.0" cy="711.4" r="1.2" fill="#5f80ff" fill-opacity="0.57"/><circle cx="371.1" cy="630.9" r="0.8" fill="#5f80ff" fill-opacity="0.57"/><circle cx="378.5" cy="623.8" r="1.8" fill="#5f80ff" fill-opacity="0.57"/><circle cx="462.3" cy="738.4" r="1.8" fill="#5f80ff" fill-opacity="0.57"/><circle cx="568.5" cy="733.5" r="1.8" fill="#8eaaff" fill-opacity="0.57"/><circle cx="535.3" cy="742.1" r="0.8" fill="#5f80ff" fill-opacity="0.57"/><circle cx="375.6" cy="615.2" r="1.0" fill="#ff58b8" fill-opacity="0.57"/><circle cx="619.0" cy="726.3" r="1.2" fill="#8eaaff" fill-opacity="0.57"/><circle cx="374.4" cy="624.3" r="1.2" fill="#5f80ff" fill-opacity="0.57"/><circle cx="375.8" cy="611.2" r="1.4" fill="#5f80ff" fill-opacity="0.57"/><circle cx="377.2" cy="621.9" r="0.8" fill="#8eaaff" fill-opacity="0.57"/><circle cx="426.2" cy="704.5" r="0.8" fill="#5f80ff" fill-opacity="0.57"/><circle cx="377.2" cy="630.7" r="1.0" fill="#ff58b8" fill-opacity="0.57"/><circle cx="491.0" cy="738.7" r="1.8" fill="#5f80ff" fill-opacity="0.57"/><circle cx="366.9" cy="599.3" r="1.8" fill="#5f80ff" fill-opacity="0.57"/><circle cx="479.1" cy="728.8" r="1.8" fill="#ff58b8" fill-opacity="0.57"/><circle cx="441.8" cy="717.7" r="1.0" fill="#5f80ff" fill-opacity="0.57"/><circle cx="495.6" cy="734.5" r="0.8" fill="#5f80ff" fill-opacity="0.57"/><circle cx="455.0" cy="731.6" r="0.8" fill="#8eaaff" fill-opacity="0.57"/><circle cx="636.1" cy="722.1" r="1.2" fill="#8eaaff" fill-opacity="0.57"/><circle cx="386.0" cy="651.4" r="1.4" fill="#ff58b8" fill-opacity="0.57"/><circle cx="480.6" cy="730.3" r="1.8" fill="#ff58b8" fill-opacity="0.57"/><circle cx="602.8" cy="730.1" r="1.0" fill="#ff58b8" fill-opacity="0.57"/><circle cx="638.4" cy="721.0" r="1.2" fill="#5f80ff" fill-opacity="0.57"/><circle cx="601.1" cy="739.5" r="0.8" fill="#5f80ff" fill-opacity="0.57"/><circle cx="600.7" cy="736.7" r="1.8" fill="#5f80ff" fill-opacity="0.57"/><circle cx="433.6" cy="717.3" r="0.8" fill="#5f80ff" fill-opacity="0.57"/><circle cx="482.1" cy="734.7" r="1.8" fill="#ff58b8" fill-opacity="0.57"/><circle cx="409.7" cy="694.9" r="0.8" fill="#5f80ff" fill-opacity="0.57"/><circle cx="362.7" cy="592.6" r="1.4" fill="#c9d6ff" fill-opacity="0.57"/><circle cx="637.5" cy="719.3" r="1.0" fill="#ff58b8" fill-opacity="0.57"/><circle cx="406.1" cy="671.5" r="1.4" fill="#5f80ff" fill-opacity="0.57"/><circle cx="587.6" cy="737.8" r="1.4" fill="#5f80ff" fill-opacity="0.57"/><circle cx="626.6" cy="731.6" r="1.0" fill="#5f80ff" fill-opacity="0.57"/><circle cx="612.2" cy="729.5" r="1.4" fill="#ff58b8" fill-opacity="0.57"/><circle cx="582.2" cy="729.3" r="1.2" fill="#c9d6ff" fill-opacity="0.57"/><circle cx="368.0" cy="634.0" r="1.0" fill="#5f80ff" fill-opacity="0.57"/><circle cx="435.9" cy="704.3" r="1.2" fill="#c9d6ff" fill-opacity="0.57"/><circle cx="375.6" cy="624.0" r="1.0" fill="#5f80ff" fill-opacity="0.57"/><circle cx="606.6" cy="732.3" r="1.8" fill="#5f80ff" fill-opacity="0.57"/><circle cx="375.8" cy="637.2" r="1.2" fill="#c9d6ff" fill-opacity="0.57"/><circle cx="489.3" cy="728.1" r="1.4" fill="#5f80ff" fill-opacity="0.57"/><circle cx="603.7" cy="733.2" r="1.8" fill="#c9d6ff" fill-opacity="0.57"/><circle cx="448.1" cy="721.4" r="1.4" fill="#5f80ff" fill-opacity="0.57"/><circle cx="359.1" cy="604.1" r="1.4" fill="#8eaaff" fill-opacity="0.57"/><circle cx="567.2" cy="737.2" r="1.8" fill="#5f80ff" fill-opacity="0.57"/><circle cx="613.6" cy="728.5" r="1.2" fill="#5f80ff" fill-opacity="0.57"/><circle cx="605.6" cy="726.4" r="1.4" fill="#c9d6ff" fill-opacity="0.57"/><circle cx="557.2" cy="728.6" r="1.2" fill="#5f80ff" fill-opacity="0.57"/><circle cx="395.7" cy="657.4" r="0.8" fill="#c9d6ff" fill-opacity="0.57"/><circle cx="393.0" cy="672.2" r="0.8" fill="#8eaaff" fill-opacity="0.57"/><circle cx="394.1" cy="669.7" r="1.2" fill="#5f80ff" fill-opacity="0.57"/><circle cx="420.6" cy="695.1" r="1.0" fill="#5f80ff" fill-opacity="0.57"/><circle cx="395.2" cy="663.4" r="0.8" fill="#5f80ff" fill-opacity="0.57"/><circle cx="401.8" cy="677.2" r="1.8" fill="#c9d6ff" fill-opacity="0.57"/><circle cx="454.8" cy="716.8" r="1.0" fill="#5f80ff" fill-opacity="0.57"/><circle cx="381.1" cy="635.9" r="1.2" fill="#5f80ff" fill-opacity="0.57"/><circle cx="423.2" cy="682.5" r="1.0" fill="#5f80ff" fill-opacity="0.57"/><circle cx="457.2" cy="729.3" r="0.8" fill="#5f80ff" fill-opacity="0.57"/><circle cx="408.6" cy="671.0" r="1.2" fill="#5f80ff" fill-opacity="0.57"/><circle cx="523.6" cy="731.4" r="0.8" fill="#ff58b8" fill-opacity="0.57"/><circle cx="436.2" cy="710.3" r="1.8" fill="#ff58b8" fill-opacity="0.57"/><circle cx="438.3" cy="713.4" r="1.0" fill="#8eaaff" fill-opacity="0.57"/><circle cx="442.1" cy="708.0" r="1.4" fill="#ff58b8" fill-opacity="0.57"/><circle cx="422.8" cy="700.3" r="0.8" fill="#5f80ff" fill-opacity="0.57"/><circle cx="436.4" cy="701.1" r="1.4" fill="#5f80ff" fill-opacity="0.57"/><circle cx="494.7" cy="737.1" r="1.8" fill="#8eaaff" fill-opacity="0.57"/><circle cx="398.0" cy="662.7" r="1.8" fill="#8eaaff" fill-opacity="0.57"/><circle cx="617.6" cy="717.9" r="1.4" fill="#5f80ff" fill-opacity="0.57"/><circle cx="647.4" cy="714.6" r="1.2" fill="#5f80ff" fill-opacity="0.57"/><circle cx="434.0" cy="713.0" r="1.2" fill="#8eaaff" fill-opacity="0.57"/><circle cx="403.4" cy="667.2" r="0.8" fill="#5f80ff" fill-opacity="0.57"/><circle cx="451.8" cy="721.2" r="1.0" fill="#c9d6ff" fill-opacity="0.57"/><circle cx="452.8" cy="720.1" r="1.0" fill="#c9d6ff" fill-opacity="0.57"/><circle cx="576.8" cy="734.2" r="1.2" fill="#8eaaff" fill-opacity="0.57"/><circle cx="556.0" cy="742.8" r="1.2" fill="#8eaaff" fill-opacity="0.57"/><circle cx="420.2" cy="679.7" r="1.2" fill="#5f80ff" fill-opacity="0.57"/><circle cx="555.5" cy="733.5" r="1.2" fill="#5f80ff" fill-opacity="0.57"/><circle cx="370.7" cy="603.3" r="1.8" fill="#5f80ff" fill-opacity="0.57"/><circle cx="425.1" cy="707.3" r="1.2" fill="#5f80ff" fill-opacity="0.57"/><circle cx="564.7" cy="736.9" r="1.0" fill="#5f80ff" fill-opacity="0.57"/><circle cx="603.0" cy="736.2" r="0.8" fill="#5f80ff" fill-opacity="0.57"/><circle cx="641.2" cy="715.5" r="1.4" fill="#8eaaff" fill-opacity="0.57"/><circle cx="464.3" cy="722.8" r="1.2" fill="#c9d6ff" fill-opacity="0.57"/><circle cx="532.6" cy="728.8" r="1.2" fill="#8eaaff" fill-opacity="0.57"/><circle cx="391.1" cy="672.0" r="1.8" fill="#8eaaff" fill-opacity="0.57"/><circle cx="606.7" cy="722.8" r="1.4" fill="#5f80ff" fill-opacity="0.57"/><circle cx="398.0" cy="657.7" r="1.2" fill="#5f80ff" fill-opacity="0.57"/><circle cx="389.4" cy="666.2" r="1.2" fill="#8eaaff" fill-opacity="0.57"/><circle cx="612.0" cy="734.9" r="1.4" fill="#5f80ff" fill-opacity="0.57"/><circle cx="576.7" cy="743.9" r="1.0" fill="#5f80ff" fill-opacity="0.57"/><circle cx="438.7" cy="707.6" r="1.0" fill="#5f80ff" fill-opacity="0.57"/><circle cx="567.9" cy="730.3" r="0.8" fill="#5f80ff" fill-opacity="0.57"/><circle cx="544.5" cy="734.4" r="1.0" fill="#5f80ff" fill-opacity="0.57"/><circle cx="580.7" cy="735.9" r="1.0" fill="#ff58b8" fill-opacity="0.57"/><circle cx="493.2" cy="731.9" r="1.4" fill="#5f80ff" fill-opacity="0.57"/><circle cx="559.8" cy="731.0" r="0.8" fill="#5f80ff" fill-opacity="0.57"/><circle cx="523.2" cy="747.3" r="0.8" fill="#5f80ff" fill-opacity="0.57"/><circle cx="394.7" cy="658.1" r="1.2" fill="#8eaaff" fill-opacity="0.57"/><circle cx="580.0" cy="730.4" r="1.4" fill="#5f80ff" fill-opacity="0.57"/><circle cx="493.0" cy="729.3" r="1.2" fill="#c9d6ff" fill-opacity="0.57"/><circle cx="402.0" cy="673.5" r="1.8" fill="#5f80ff" fill-opacity="0.57"/><circle cx="361.4" cy="608.0" r="1.0" fill="#ff58b8" fill-opacity="0.57"/><circle cx="374.7" cy="611.1" r="0.8" fill="#5f80ff" fill-opacity="0.57"/><circle cx="403.6" cy="667.6" r="1.8" fill="#5f80ff" fill-opacity="0.57"/><circle cx="409.8" cy="686.2" r="1.4" fill="#8eaaff" fill-opacity="0.57"/><circle cx="432.4" cy="711.5" r="0.8" fill="#5f80ff" fill-opacity="0.57"/><circle cx="491.8" cy="744.2" r="1.2" fill="#5f80ff" fill-opacity="0.57"/><circle cx="659.1" cy="654.7" r="1.2" fill="#c9d6ff" fill-opacity="0.48"/><circle cx="652.1" cy="703.2" r="1.8" fill="#c9d6ff" fill-opacity="0.48"/><circle cx="653.6" cy="691.7" r="1.0" fill="#5f80ff" fill-opacity="0.48"/><circle cx="659.9" cy="674.7" r="1.8" fill="#8eaaff" fill-opacity="0.48"/><circle cx="658.4" cy="692.5" r="1.8" fill="#5f80ff" fill-opacity="0.48"/><circle cx="656.3" cy="682.8" r="1.4" fill="#5f80ff" fill-opacity="0.48"/><circle cx="636.5" cy="701.0" r="0.8" fill="#5f80ff" fill-opacity="0.48"/><circle cx="660.2" cy="658.3" r="1.0" fill="#5f80ff" fill-opacity="0.48"/><circle cx="643.0" cy="712.7" r="1.2" fill="#5f80ff" fill-opacity="0.48"/><circle cx="659.3" cy="637.6" r="1.4" fill="#8eaaff" fill-opacity="0.48"/><circle cx="650.0" cy="667.2" r="0.8" fill="#5f80ff" fill-opacity="0.48"/><circle cx="654.3" cy="708.9" r="1.0" fill="#5f80ff" fill-opacity="0.48"/><circle cx="410.7" cy="675.8" r="0.8" fill="#5f80ff" fill-opacity="0.56"/><circle cx="513.2" cy="695.7" r="1.4" fill="#5f80ff" fill-opacity="0.56"/><circle cx="605.6" cy="663.6" r="0.8" fill="#5f80ff" fill-opacity="0.56"/><circle cx="594.9" cy="680.9" r="1.0" fill="#8eaaff" fill-opacity="0.56"/><circle cx="532.3" cy="692.7" r="1.8" fill="#5f80ff" fill-opacity="0.56"/><circle cx="621.7" cy="650.1" r="1.8" fill="#5f80ff" fill-opacity="0.56"/><circle cx="547.8" cy="690.4" r="1.4" fill="#5f80ff" fill-opacity="0.56"/><circle cx="407.7" cy="679.1" r="1.8" fill="#5f80ff" fill-opacity="0.56"/><circle cx="595.6" cy="673.8" r="1.2" fill="#ff58b8" fill-opacity="0.56"/><circle cx="517.3" cy="696.8" r="1.4" fill="#ff58b8" fill-opacity="0.56"/><circle cx="602.5" cy="659.3" r="1.4" fill="#8eaaff" fill-opacity="0.56"/><circle cx="595.8" cy="677.3" r="1.8" fill="#5f80ff" fill-opacity="0.56"/><circle cx="511.7" cy="696.9" r="0.8" fill="#5f80ff" fill-opacity="0.56"/><circle cx="501.4" cy="697.5" r="1.4" fill="#5f80ff" fill-opacity="0.56"/><circle cx="543.2" cy="689.5" r="1.2" fill="#5f80ff" fill-opacity="0.56"/><circle cx="529.5" cy="694.2" r="1.8" fill="#5f80ff" fill-opacity="0.56"/><circle cx="416.7" cy="676.8" r="1.8" fill="#5f80ff" fill-opacity="0.56"/><circle cx="467.3" cy="709.7" r="1.4" fill="#8eaaff" fill-opacity="0.56"/><circle cx="488.8" cy="696.0" r="0.8" fill="#5f80ff" fill-opacity="0.56"/><circle cx="465.5" cy="697.8" r="0.8" fill="#8eaaff" fill-opacity="0.56"/><circle cx="426.2" cy="699.3" r="1.2" fill="#5f80ff" fill-opacity="0.56"/><circle cx="528.5" cy="693.7" r="1.8" fill="#5f80ff" fill-opacity="0.56"/><circle cx="587.4" cy="686.0" r="1.2" fill="#c9d6ff" fill-opacity="0.56"/><circle cx="557.6" cy="685.3" r="1.0" fill="#5f80ff" fill-opacity="0.56"/><circle cx="459.3" cy="705.8" r="0.8" fill="#c9d6ff" fill-opacity="0.56"/><circle cx="588.4" cy="675.2" r="1.2" fill="#5f80ff" fill-opacity="0.56"/><circle cx="427.6" cy="680.2" r="0.8" fill="#5f80ff" fill-opacity="0.56"/><circle cx="407.4" cy="685.0" r="0.8" fill="#ff58b8" fill-opacity="0.56"/><circle cx="573.0" cy="686.7" r="1.2" fill="#8eaaff" fill-opacity="0.56"/><circle cx="510.0" cy="703.8" r="1.4" fill="#8eaaff" fill-opacity="0.56"/><circle cx="595.6" cy="672.5" r="1.0" fill="#5f80ff" fill-opacity="0.56"/><circle cx="583.1" cy="677.5" r="1.0" fill="#5f80ff" fill-opacity="0.56"/><circle cx="511.2" cy="693.6" r="1.0" fill="#5f80ff" fill-opacity="0.56"/><circle cx="512.4" cy="691.4" r="1.0" fill="#8eaaff" fill-opacity="0.56"/><circle cx="403.6" cy="674.6" r="1.0" fill="#8eaaff" fill-opacity="0.56"/><circle cx="562.9" cy="690.4" r="0.8" fill="#5f80ff" fill-opacity="0.56"/><circle cx="794.8" cy="277.7" r="0.8" fill="#8eaaff" fill-opacity="0.43"/><circle cx="928.8" cy="344.7" r="1.4" fill="#5f80ff" fill-opacity="0.43"/><circle cx="779.4" cy="275.6" r="1.0" fill="#ff58b8" fill-opacity="0.43"/><circle cx="931.4" cy="346.3" r="1.2" fill="#8eaaff" fill-opacity="0.43"/><circle cx="891.4" cy="328.1" r="1.8" fill="#c9d6ff" fill-opacity="0.43"/><circle cx="897.9" cy="326.6" r="0.8" fill="#5f80ff" fill-opacity="0.43"/><circle cx="870.1" cy="317.9" r="1.2" fill="#5f80ff" fill-opacity="0.43"/><circle cx="797.5" cy="283.8" r="0.8" fill="#5f80ff" fill-opacity="0.43"/><circle cx="896.7" cy="338.7" r="1.2" fill="#8eaaff" fill-opacity="0.43"/><circle cx="827.3" cy="296.8" r="1.2" fill="#5f80ff" fill-opacity="0.43"/><circle cx="848.3" cy="313.6" r="1.2" fill="#5f80ff" fill-opacity="0.43"/><circle cx="903.0" cy="332.6" r="1.2" fill="#5f80ff" fill-opacity="0.43"/><circle cx="873.3" cy="309.2" r="1.8" fill="#5f80ff" fill-opacity="0.43"/><circle cx="856.1" cy="309.9" r="1.0" fill="#5f80ff" fill-opacity="0.43"/><circle cx="810.8" cy="276.1" r="1.8" fill="#5f80ff" fill-opacity="0.43"/><circle cx="923.3" cy="344.0" r="1.4" fill="#5f80ff" fill-opacity="0.43"/><circle cx="855.0" cy="312.3" r="1.4" fill="#5f80ff" fill-opacity="0.43"/><circle cx="795.3" cy="282.7" r="0.8" fill="#5f80ff" fill-opacity="0.43"/><circle cx="849.7" cy="311.6" r="1.8" fill="#c9d6ff" fill-opacity="0.43"/><circle cx="846.7" cy="302.4" r="1.8" fill="#8eaaff" fill-opacity="0.43"/><circle cx="818.9" cy="540.6" r="1.0" fill="#5f80ff" fill-opacity="0.44"/><circle cx="755.2" cy="732.8" r="1.0" fill="#5f80ff" fill-opacity="0.44"/><circle cx="781.2" cy="723.5" r="1.4" fill="#8eaaff" fill-opacity="0.44"/><circle cx="812.2" cy="523.8" r="1.4" fill="#8eaaff" fill-opacity="0.44"/><circle cx="837.0" cy="562.3" r="1.4" fill="#5f80ff" fill-opacity="0.44"/><circle cx="835.2" cy="568.1" r="1.2" fill="#ff58b8" fill-opacity="0.44"/><circle cx="844.5" cy="657.3" r="1.2" fill="#5f80ff" fill-opacity="0.44"/><circle cx="804.0" cy="513.5" r="1.8" fill="#5f80ff" fill-opacity="0.44"/><circle cx="790.9" cy="720.1" r="1.8" fill="#5f80ff" fill-opacity="0.44"/><circle cx="827.6" cy="688.0" r="1.0" fill="#5f80ff" fill-opacity="0.44"/><circle cx="806.1" cy="517.1" r="1.4" fill="#8eaaff" fill-opacity="0.44"/><circle cx="804.4" cy="708.2" r="1.2" fill="#5f80ff" fill-opacity="0.44"/><circle cx="849.7" cy="595.5" r="0.8" fill="#5f80ff" fill-opacity="0.44"/><circle cx="778.1" cy="737.2" r="1.0" fill="#5f80ff" fill-opacity="0.44"/><circle cx="853.9" cy="605.6" r="1.4" fill="#c9d6ff" fill-opacity="0.44"/><circle cx="853.4" cy="609.7" r="1.2" fill="#ff58b8" fill-opacity="0.44"/><circle cx="859.6" cy="612.2" r="0.8" fill="#5f80ff" fill-opacity="0.44"/><circle cx="842.5" cy="667.1" r="0.8" fill="#5f80ff" fill-opacity="0.44"/><circle cx="807.0" cy="715.9" r="1.0" fill="#5f80ff" fill-opacity="0.44"/><circle cx="760.4" cy="743.5" r="0.8" fill="#ff58b8" fill-opacity="0.44"/><circle cx="852.5" cy="634.6" r="1.8" fill="#5f80ff" fill-opacity="0.44"/><circle cx="862.6" cy="633.6" r="1.8" fill="#5f80ff" fill-opacity="0.44"/><circle cx="808.2" cy="707.3" r="1.0" fill="#c9d6ff" fill-opacity="0.44"/><circle cx="835.8" cy="563.3" r="1.8" fill="#c9d6ff" fill-opacity="0.44"/><circle cx="769.3" cy="727.4" r="0.8" fill="#5f80ff" fill-opacity="0.44"/><circle cx="827.1" cy="524.6" r="1.4" fill="#c9d6ff" fill-opacity="0.44"/><circle cx="860.6" cy="627.8" r="1.8" fill="#5f80ff" fill-opacity="0.44"/><circle cx="803.0" cy="519.4" r="1.2" fill="#ff58b8" fill-opacity="0.44"/><circle cx="1065.8" cy="444.9" r="0.8" fill="#5f80ff" fill-opacity="0.44"/><circle cx="1055.0" cy="416.4" r="1.8" fill="#5f80ff" fill-opacity="0.44"/><circle cx="1053.0" cy="427.4" r="1.8" fill="#5f80ff" fill-opacity="0.44"/><circle cx="936.4" cy="550.8" r="1.4" fill="#ff58b8" fill-opacity="0.41"/><circle cx="538.3" cy="514.1" r="0.8" fill="#ff7ac8" fill-opacity=".7"/><circle cx="500.6" cy="492.4" r="1.0" fill="#8090e0" fill-opacity=".7"/><circle cx="487.1" cy="466.5" r="1.0" fill="#ff7ac8" fill-opacity=".7"/><circle cx="537.1" cy="514.1" r="1.0" fill="#ff7ac8" fill-opacity=".7"/><circle cx="461.9" cy="414.4" r="1.3" fill="#d04878" fill-opacity=".7"/><circle cx="468.1" cy="434.5" r="1.0" fill="#ff5ab0" fill-opacity=".7"/><circle cx="485.6" cy="473.5" r="0.8" fill="#8090e0" fill-opacity=".7"/><circle cx="480.5" cy="461.5" r="0.8" fill="#8090e0" fill-opacity=".7"/><circle cx="547.5" cy="514.2" r="0.8" fill="#ff5ab0" fill-opacity=".7"/><circle cx="477.7" cy="448.4" r="0.8" fill="#ff5ab0" fill-opacity=".7"/><circle cx="566.6" cy="509.7" r="1.3" fill="#d04878" fill-opacity=".7"/><circle cx="512.4" cy="507.3" r="1.3" fill="#ff5ab0" fill-opacity=".7"/><circle cx="583.0" cy="502.8" r="1.3" fill="#d04878" fill-opacity=".7"/><circle cx="468.2" cy="425.2" r="0.8" fill="#ff7ac8" fill-opacity=".7"/><circle cx="489.0" cy="473.4" r="1.0" fill="#d04878" fill-opacity=".7"/><circle cx="527.8" cy="515.8" r="1.0" fill="#d04878" fill-opacity=".7"/><circle cx="471.1" cy="407.4" r="0.8" fill="#d04878" fill-opacity=".7"/><circle cx="469.2" cy="421.5" r="1.3" fill="#ff7ac8" fill-opacity=".7"/><circle cx="465.9" cy="418.4" r="0.8" fill="#ff7ac8" fill-opacity=".7"/><circle cx="528.8" cy="514.6" r="1.3" fill="#ff5ab0" fill-opacity=".7"/><circle cx="516.7" cy="511.1" r="1.3" fill="#ff5ab0" fill-opacity=".7"/><circle cx="577.1" cy="507.3" r="0.8" fill="#ff5ab0" fill-opacity=".7"/><circle cx="534.0" cy="516.1" r="1.0" fill="#ff7ac8" fill-opacity=".7"/><circle cx="517.7" cy="456.0" r="1.3" fill="#d04878" fill-opacity=".7"/><circle cx="587.5" cy="352.4" r="0.8" fill="#ff7ac8" fill-opacity=".7"/><circle cx="529.2" cy="483.4" r="0.8" fill="#8090e0" fill-opacity=".7"/><circle cx="523.6" cy="457.9" r="0.8" fill="#d04878" fill-opacity=".7"/><circle cx="536.6" cy="403.2" r="1.3" fill="#ff7ac8" fill-opacity=".7"/><circle cx="568.7" cy="365.2" r="0.8" fill="#d04878" fill-opacity=".7"/><circle cx="576.6" cy="358.9" r="1.0" fill="#ff5ab0" fill-opacity=".7"/><circle cx="576.1" cy="360.4" r="1.0" fill="#ff5ab0" fill-opacity=".7"/><circle cx="576.4" cy="361.7" r="1.0" fill="#d04878" fill-opacity=".7"/><circle cx="592.2" cy="352.5" r="1.0" fill="#d04878" fill-opacity=".7"/><circle cx="557.0" cy="495.6" r="1.3" fill="#d04878" fill-opacity=".7"/><circle cx="580.5" cy="355.4" r="1.3" fill="#8090e0" fill-opacity=".7"/><circle cx="554.0" cy="374.0" r="1.0" fill="#d04878" fill-opacity=".7"/><circle cx="524.9" cy="423.5" r="1.0" fill="#ff7ac8" fill-opacity=".7"/><circle cx="574.2" cy="361.3" r="1.0" fill="#ff7ac8" fill-opacity=".7"/><circle cx="544.1" cy="385.2" r="1.3" fill="#d04878" fill-opacity=".7"/><circle cx="539.7" cy="402.5" r="1.0" fill="#ff7ac8" fill-opacity=".7"/><circle cx="594.2" cy="352.2" r="0.8" fill="#ff5ab0" fill-opacity=".7"/><circle cx="525.9" cy="412.7" r="1.3" fill="#d04878" fill-opacity=".7"/><circle cx="550.7" cy="384.9" r="1.3" fill="#ff7ac8" fill-opacity=".7"/><circle cx="575.5" cy="365.5" r="1.3" fill="#ff5ab0" fill-opacity=".7"/><circle cx="543.9" cy="387.6" r="1.3" fill="#d04878" fill-opacity=".7"/><circle cx="540.6" cy="394.9" r="0.8" fill="#ff5ab0" fill-opacity=".7"/><circle cx="564.5" cy="423.2" r="0.8" fill="#d04878" fill-opacity=".7"/><circle cx="608.3" cy="411.3" r="0.8" fill="#d04878" fill-opacity=".7"/><circle cx="653.2" cy="431.3" r="0.8" fill="#ff7ac8" fill-opacity=".7"/><circle cx="624.0" cy="419.5" r="0.8" fill="#8090e0" fill-opacity=".7"/><circle cx="673.5" cy="451.6" r="1.0" fill="#ff7ac8" fill-opacity=".7"/><circle cx="575.6" cy="412.4" r="1.0" fill="#ff7ac8" fill-opacity=".7"/><circle cx="668.3" cy="451.3" r="1.3" fill="#d04878" fill-opacity=".7"/><circle cx="655.7" cy="440.0" r="1.0" fill="#d04878" fill-opacity=".7"/><circle cx="575.9" cy="412.1" r="1.3" fill="#ff7ac8" fill-opacity=".7"/><circle cx="651.5" cy="431.2" r="0.8" fill="#d04878" fill-opacity=".7"/><circle cx="691.0" cy="463.6" r="1.0" fill="#ff7ac8" fill-opacity=".7"/><circle cx="587.5" cy="410.9" r="1.0" fill="#ff7ac8" fill-opacity=".7"/><circle cx="686.5" cy="460.7" r="1.0" fill="#8090e0" fill-opacity=".7"/><circle cx="635.9" cy="422.6" r="1.3" fill="#8090e0" fill-opacity=".7"/><circle cx="673.2" cy="454.2" r="0.8" fill="#ff5ab0" fill-opacity=".7"/><circle cx="623.5" cy="416.2" r="0.8" fill="#ff7ac8" fill-opacity=".7"/><circle cx="545.6" cy="453.3" r="0.8" fill="#8090e0" fill-opacity=".7"/><circle cx="546.1" cy="459.6" r="1.3" fill="#ff5ab0" fill-opacity=".7"/><circle cx="633.7" cy="423.2" r="1.3" fill="#d04878" fill-opacity=".7"/><circle cx="682.2" cy="459.6" r="1.3" fill="#d04878" fill-opacity=".7"/><circle cx="652.9" cy="436.1" r="0.8" fill="#8090e0" fill-opacity=".7"/><circle cx="642.4" cy="425.6" r="1.0" fill="#8090e0" fill-opacity=".7"/><circle cx="635.0" cy="481.1" r="1.3" fill="#d04878" fill-opacity=".7"/><circle cx="585.4" cy="443.7" r="1.3" fill="#ff5ab0" fill-opacity=".7"/><circle cx="632.8" cy="470.6" r="1.0" fill="#ff5ab0" fill-opacity=".7"/><circle cx="639.1" cy="500.8" r="0.8" fill="#d04878" fill-opacity=".7"/><circle cx="634.2" cy="478.0" r="0.8" fill="#ff5ab0" fill-opacity=".7"/><circle cx="602.7" cy="447.9" r="0.8" fill="#ff7ac8" fill-opacity=".7"/><circle cx="624.9" cy="575.4" r="1.3" fill="#d04878" fill-opacity=".7"/><circle cx="635.5" cy="530.5" r="1.0" fill="#d04878" fill-opacity=".7"/><circle cx="572.2" cy="443.2" r="0.8" fill="#ff5ab0" fill-opacity=".7"/><circle cx="636.3" cy="553.8" r="1.0" fill="#ff7ac8" fill-opacity=".7"/><circle cx="570.6" cy="446.7" r="1.3" fill="#8090e0" fill-opacity=".7"/><circle cx="633.6" cy="476.1" r="1.0" fill="#ff7ac8" fill-opacity=".7"/><circle cx="599.5" cy="450.9" r="1.0" fill="#8090e0" fill-opacity=".7"/><circle cx="643.5" cy="494.9" r="1.0" fill="#d04878" fill-opacity=".7"/><circle cx="639.7" cy="506.2" r="1.3" fill="#d04878" fill-opacity=".7"/><circle cx="636.2" cy="535.2" r="1.0" fill="#ff5ab0" fill-opacity=".7"/><circle cx="629.3" cy="477.0" r="1.3" fill="#8090e0" fill-opacity=".7"/><circle cx="635.4" cy="553.3" r="0.8" fill="#8090e0" fill-opacity=".7"/><circle cx="633.9" cy="544.3" r="1.0" fill="#8090e0" fill-opacity=".7"/><circle cx="591.9" cy="439.1" r="1.3" fill="#ff5ab0" fill-opacity=".7"/><circle cx="635.2" cy="518.9" r="0.8" fill="#d04878" fill-opacity=".7"/><circle cx="633.1" cy="566.8" r="0.8" fill="#8090e0" fill-opacity=".7"/><circle cx="619.6" cy="456.8" r="0.8" fill="#8090e0" fill-opacity=".7"/><circle cx="594.0" cy="533.9" r="0.8" fill="#8090e0" fill-opacity=".7"/><circle cx="517.2" cy="563.5" r="0.8" fill="#d04878" fill-opacity=".7"/><circle cx="593.6" cy="531.5" r="1.3" fill="#8090e0" fill-opacity=".7"/><circle cx="529.3" cy="560.7" r="1.3" fill="#8090e0" fill-opacity=".7"/><circle cx="541.5" cy="561.0" r="1.0" fill="#d04878" fill-opacity=".7"/><circle cx="604.8" cy="485.0" r="1.3" fill="#d04878" fill-opacity=".7"/><circle cx="495.8" cy="560.4" r="0.8" fill="#d04878" fill-opacity=".7"/><circle cx="501.1" cy="565.2" r="0.8" fill="#d04878" fill-opacity=".7"/><circle cx="574.7" cy="544.9" r="0.8" fill="#ff7ac8" fill-opacity=".7"/><circle cx="528.2" cy="561.5" r="1.0" fill="#ff5ab0" fill-opacity=".7"/><circle cx="503.9" cy="561.5" r="1.0" fill="#8090e0" fill-opacity=".7"/><circle cx="532.6" cy="559.2" r="0.8" fill="#ff7ac8" fill-opacity=".7"/><circle cx="543.4" cy="563.7" r="1.0" fill="#ff7ac8" fill-opacity=".7"/><circle cx="581.9" cy="541.2" r="1.0" fill="#d04878" fill-opacity=".7"/><circle cx="608.4" cy="482.6" r="1.3" fill="#ff7ac8" fill-opacity=".7"/><circle cx="595.7" cy="468.3" r="1.0" fill="#ff7ac8" fill-opacity=".7"/><circle cx="513.7" cy="560.5" r="0.8" fill="#ff5ab0" fill-opacity=".7"/><circle cx="555.1" cy="560.4" r="1.3" fill="#ff7ac8" fill-opacity=".7"/><circle cx="597.5" cy="509.0" r="1.3" fill="#8090e0" fill-opacity=".7"/><circle cx="527.6" cy="559.1" r="1.3" fill="#d04878" fill-opacity=".7"/><circle cx="511.4" cy="566.3" r="1.3" fill="#ff7ac8" fill-opacity=".7"/><circle cx="524.3" cy="563.1" r="1.0" fill="#d04878" fill-opacity=".7"/></g>
<g filter="url(#b1)" fill-opacity=".95"><circle cx="605.2" cy="273.2" r="1.5" fill="#c070ff"/><circle cx="589.6" cy="275.9" r="2.3" fill="#7ca0ff"/><circle cx="588.7" cy="278.4" r="2.3" fill="#7ca0ff"/><circle cx="596.0" cy="269.8" r="2.3" fill="#5f86ff"/><circle cx="588.7" cy="273.9" r="2.3" fill="#7ca0ff"/><circle cx="584.2" cy="276.7" r="1.9" fill="#4f70f0"/><circle cx="593.7" cy="267.5" r="1.5" fill="#a9c0ff"/><circle cx="593.7" cy="271.7" r="1.2" fill="#7ca0ff"/><circle cx="596.1" cy="276.3" r="1.5" fill="#4f70f0"/><circle cx="596.3" cy="275.3" r="1.5" fill="#a9c0ff"/><circle cx="591.6" cy="272.6" r="1.9" fill="#4f70f0"/><circle cx="592.8" cy="270.4" r="1.5" fill="#5f86ff"/><circle cx="588.5" cy="269.9" r="2.3" fill="#a9c0ff"/><circle cx="587.4" cy="281.4" r="1.2" fill="#5f86ff"/><circle cx="592.8" cy="277.6" r="1.9" fill="#5f86ff"/><circle cx="608.1" cy="263.3" r="2.3" fill="#5f86ff"/><circle cx="578.8" cy="285.1" r="1.2" fill="#7ca0ff"/><circle cx="604.6" cy="265.2" r="1.5" fill="#a9c0ff"/><circle cx="581.3" cy="279.4" r="1.5" fill="#4f70f0"/><circle cx="577.6" cy="283.7" r="1.9" fill="#4f70f0"/><circle cx="596.4" cy="273.6" r="1.2" fill="#4f70f0"/><circle cx="583.2" cy="275.8" r="1.2" fill="#c070ff"/><circle cx="603.6" cy="268.2" r="1.9" fill="#7ca0ff"/><circle cx="602.2" cy="271.5" r="1.2" fill="#4f70f0"/><circle cx="609.6" cy="264.1" r="1.5" fill="#5f86ff"/><circle cx="606.3" cy="263.2" r="1.5" fill="#a9c0ff"/><circle cx="604.8" cy="270.3" r="1.9" fill="#4f70f0"/><circle cx="597.3" cy="278.0" r="1.2" fill="#a9c0ff"/><circle cx="515.3" cy="328.6" r="2.3" fill="#ff8ad8"/><circle cx="502.8" cy="331.2" r="1.9" fill="#7c90ff"/><circle cx="498.0" cy="340.6" r="1.5" fill="#7c90ff"/><circle cx="517.9" cy="321.0" r="2.3" fill="#7c90ff"/><circle cx="511.9" cy="323.0" r="1.2" fill="#c070ff"/><circle cx="497.2" cy="340.5" r="2.3" fill="#7c90ff"/><circle cx="506.0" cy="334.2" r="1.9" fill="#c070ff"/><circle cx="505.4" cy="336.3" r="1.9" fill="#ff5cc4"/><circle cx="502.9" cy="331.6" r="1.9" fill="#ff5cc4"/><circle cx="498.6" cy="340.1" r="1.2" fill="#7c90ff"/><circle cx="505.3" cy="326.5" r="1.2" fill="#c070ff"/><circle cx="500.5" cy="341.0" r="2.3" fill="#7c90ff"/><circle cx="502.2" cy="339.0" r="1.2" fill="#ff8ad8"/><circle cx="503.0" cy="329.5" r="2.3" fill="#c070ff"/><circle cx="717.0" cy="405.0" r="2.3" fill="#a9c0ff"/><circle cx="705.0" cy="410.8" r="1.2" fill="#a9c0ff"/><circle cx="721.8" cy="420.1" r="1.5" fill="#5f86ff"/><circle cx="704.8" cy="406.7" r="1.2" fill="#5f86ff"/><circle cx="726.3" cy="412.6" r="2.3" fill="#4f70f0"/><circle cx="708.6" cy="408.0" r="1.5" fill="#4f70f0"/><circle cx="718.5" cy="418.2" r="1.2" fill="#a9c0ff"/><circle cx="714.1" cy="408.4" r="1.2" fill="#7ca0ff"/><circle cx="719.8" cy="410.7" r="1.5" fill="#7ca0ff"/><circle cx="707.4" cy="409.0" r="1.5" fill="#4f70f0"/><circle cx="726.2" cy="416.1" r="1.5" fill="#4f70f0"/><circle cx="716.6" cy="405.8" r="2.3" fill="#7ca0ff"/><circle cx="726.7" cy="412.6" r="2.3" fill="#4f70f0"/><circle cx="722.4" cy="412.5" r="1.2" fill="#5f86ff"/><circle cx="724.1" cy="418.1" r="1.5" fill="#5f86ff"/><circle cx="720.9" cy="407.9" r="1.2" fill="#4f70f0"/><circle cx="688.6" cy="393.7" r="1.2" fill="#a9c0ff"/><circle cx="673.1" cy="396.6" r="1.5" fill="#4f70f0"/><circle cx="701.4" cy="406.6" r="2.3" fill="#7ca0ff"/><circle cx="680.1" cy="398.1" r="1.5" fill="#4f70f0"/><circle cx="704.8" cy="403.4" r="1.5" fill="#a9c0ff"/><circle cx="689.0" cy="392.4" r="1.9" fill="#7ca0ff"/><circle cx="702.1" cy="406.8" r="1.9" fill="#5f86ff"/><circle cx="685.4" cy="396.7" r="2.3" fill="#a9c0ff"/><circle cx="698.0" cy="401.3" r="2.3" fill="#7ca0ff"/><circle cx="680.4" cy="390.5" r="2.3" fill="#7ca0ff"/><circle cx="683.5" cy="404.5" r="1.9" fill="#5f86ff"/><circle cx="684.4" cy="400.9" r="1.5" fill="#7ca0ff"/><circle cx="435.3" cy="695.1" r="1.5" fill="#5f86ff"/><circle cx="441.2" cy="696.9" r="1.9" fill="#ff8ad8"/><circle cx="419.3" cy="688.7" r="1.5" fill="#ff8ad8"/><circle cx="410.1" cy="676.6" r="1.2" fill="#5f86ff"/><circle cx="402.9" cy="680.7" r="1.2" fill="#7ca0ff"/><circle cx="418.1" cy="687.4" r="1.2" fill="#ff8ad8"/><circle cx="411.3" cy="684.0" r="1.2" fill="#5f86ff"/><circle cx="427.7" cy="694.8" r="2.3" fill="#5f86ff"/><circle cx="411.7" cy="687.3" r="1.9" fill="#7c90ff"/><circle cx="416.2" cy="684.6" r="1.5" fill="#4f70f0"/><circle cx="425.9" cy="687.0" r="1.9" fill="#7ca0ff"/><circle cx="415.7" cy="688.0" r="1.5" fill="#c070ff"/><circle cx="441.4" cy="697.0" r="2.3" fill="#a9c0ff"/><circle cx="415.8" cy="688.4" r="1.2" fill="#7c90ff"/><circle cx="433.3" cy="698.8" r="1.9" fill="#ff5cc4"/><circle cx="413.5" cy="686.1" r="1.5" fill="#a9c0ff"/><circle cx="434.4" cy="689.1" r="1.9" fill="#a9c0ff"/><circle cx="427.5" cy="692.6" r="1.9" fill="#ff8ad8"/><circle cx="419.9" cy="686.7" r="1.2" fill="#ff8ad8"/><circle cx="415.5" cy="686.3" r="1.9" fill="#ff8ad8"/><circle cx="542.2" cy="693.1" r="1.2" fill="#7ca0ff"/><circle cx="537.6" cy="690.6" r="1.5" fill="#7ca0ff"/><circle cx="538.3" cy="691.8" r="2.3" fill="#4f70f0"/><circle cx="539.2" cy="688.4" r="2.3" fill="#5f86ff"/><circle cx="543.7" cy="691.7" r="2.3" fill="#7ca0ff"/><circle cx="544.3" cy="694.7" r="1.5" fill="#a9c0ff"/><circle cx="547.7" cy="693.2" r="1.9" fill="#5f86ff"/><circle cx="535.2" cy="691.5" r="1.2" fill="#5f86ff"/><circle cx="603.9" cy="649.3" r="2.3" fill="#7ca0ff"/><circle cx="604.9" cy="649.1" r="1.9" fill="#5f86ff"/><circle cx="605.0" cy="650.8" r="1.5" fill="#a9c0ff"/><circle cx="604.1" cy="646.7" r="1.2" fill="#a9c0ff"/><circle cx="607.5" cy="645.3" r="1.5" fill="#a9c0ff"/><circle cx="605.1" cy="652.1" r="1.2" fill="#a9c0ff"/><circle cx="474.5" cy="732.0" r="1.2" fill="#a9c0ff"/><circle cx="475.4" cy="733.0" r="2.3" fill="#7ca0ff"/><circle cx="475.7" cy="726.5" r="1.5" fill="#7ca0ff"/><circle cx="475.6" cy="728.0" r="1.2" fill="#7ca0ff"/><circle cx="477.1" cy="722.7" r="1.5" fill="#4f70f0"/><circle cx="472.7" cy="723.3" r="1.9" fill="#7ca0ff"/><circle cx="547.2" cy="730.4" r="1.9" fill="#5f86ff"/><circle cx="549.3" cy="731.2" r="1.5" fill="#4f70f0"/><circle cx="554.7" cy="733.1" r="1.2" fill="#a9c0ff"/><circle cx="547.9" cy="730.3" r="1.9" fill="#5f86ff"/><circle cx="551.8" cy="727.0" r="1.2" fill="#a9c0ff"/><circle cx="352.8" cy="534.0" r="2.3" fill="#b068f0"/><circle cx="350.8" cy="535.0" r="1.9" fill="#d090ff"/><circle cx="354.3" cy="533.3" r="1.5" fill="#d090ff"/><circle cx="355.2" cy="531.9" r="2.3" fill="#b068f0"/><circle cx="353.9" cy="535.4" r="2.3" fill="#d090ff"/><circle cx="368.5" cy="592.6" r="1.2" fill="#4f70f0"/><circle cx="366.9" cy="583.8" r="2.3" fill="#a9c0ff"/><circle cx="362.5" cy="591.0" r="1.9" fill="#7ca0ff"/><circle cx="369.4" cy="602.2" r="1.9" fill="#7ca0ff"/><circle cx="367.5" cy="584.8" r="1.2" fill="#4f70f0"/><circle cx="369.2" cy="603.9" r="2.3" fill="#a9c0ff"/><circle cx="367.1" cy="587.4" r="1.2" fill="#a9c0ff"/><circle cx="369.4" cy="594.0" r="2.3" fill="#7ca0ff"/><circle cx="434.1" cy="407.9" r="2.3" fill="#4f70f0"/><circle cx="441.2" cy="393.3" r="1.2" fill="#7ca0ff"/><circle cx="442.6" cy="410.8" r="1.5" fill="#a9c0ff"/><circle cx="440.8" cy="404.4" r="1.5" fill="#5f86ff"/><circle cx="440.1" cy="409.9" r="1.5" fill="#5f86ff"/><circle cx="438.9" cy="399.2" r="1.9" fill="#4f70f0"/><circle cx="444.7" cy="397.4" r="1.2" fill="#4f70f0"/><circle cx="438.2" cy="380.8" r="1.9" fill="#4f70f0"/><circle cx="440.8" cy="412.3" r="1.9" fill="#4f70f0"/><circle cx="437.9" cy="411.2" r="2.3" fill="#a9c0ff"/><circle cx="439.7" cy="403.1" r="1.2" fill="#4f70f0"/><circle cx="435.7" cy="418.8" r="1.2" fill="#5f86ff"/><circle cx="438.8" cy="394.8" r="1.9" fill="#7ca0ff"/><circle cx="429.4" cy="409.7" r="1.2" fill="#5f86ff"/><circle cx="498.0" cy="385.2" r="1.5" fill="#ff8ad8"/><circle cx="497.0" cy="396.4" r="1.5" fill="#c070ff"/><circle cx="495.9" cy="395.1" r="1.5" fill="#ff5cc4"/><circle cx="492.9" cy="392.3" r="1.2" fill="#ff5cc4"/><circle cx="497.8" cy="397.6" r="1.9" fill="#ff8ad8"/><circle cx="496.0" cy="396.1" r="1.2" fill="#ff8ad8"/><circle cx="492.4" cy="395.7" r="1.5" fill="#ff8ad8"/><circle cx="497.6" cy="395.7" r="2.3" fill="#ff8ad8"/><circle cx="474.3" cy="480.8" r="1.5" fill="#5f86ff"/><circle cx="464.5" cy="476.2" r="1.2" fill="#a9c0ff"/><circle cx="469.4" cy="477.8" r="1.9" fill="#7ca0ff"/><circle cx="464.2" cy="478.7" r="1.2" fill="#c9d6ff"/><circle cx="464.3" cy="479.5" r="1.2" fill="#5f86ff"/><circle cx="465.1" cy="482.1" r="2.3" fill="#a9c0ff"/><circle cx="463.3" cy="481.2" r="1.5" fill="#7ca0ff"/><circle cx="466.1" cy="476.0" r="1.5" fill="#5f86ff"/><circle cx="469.2" cy="481.8" r="2.3" fill="#c9d6ff"/><circle cx="469.7" cy="475.7" r="1.9" fill="#a9c0ff"/><circle cx="461.6" cy="479.6" r="2.3" fill="#7ca0ff"/><circle cx="466.5" cy="481.3" r="1.9" fill="#5f86ff"/><circle cx="488.9" cy="556.0" r="1.2" fill="#a9c0ff"/><circle cx="486.8" cy="554.9" r="1.5" fill="#4f70f0"/><circle cx="481.5" cy="548.1" r="1.5" fill="#5f86ff"/><circle cx="488.4" cy="554.9" r="2.3" fill="#4f70f0"/><circle cx="492.4" cy="548.7" r="1.2" fill="#5f86ff"/><circle cx="491.8" cy="553.3" r="2.3" fill="#ff8ad8"/><circle cx="492.0" cy="553.0" r="1.5" fill="#5f86ff"/><circle cx="489.3" cy="551.7" r="1.9" fill="#5f86ff"/><circle cx="676.8" cy="509.3" r="1.2" fill="#5f86ff"/><circle cx="673.0" cy="497.6" r="1.5" fill="#ff8ad8"/><circle cx="678.6" cy="495.1" r="1.9" fill="#ff8ad8"/><circle cx="681.0" cy="492.6" r="1.5" fill="#ff5cc4"/><circle cx="673.6" cy="497.7" r="1.9" fill="#c070ff"/><circle cx="679.2" cy="495.3" r="1.5" fill="#ff5cc4"/><circle cx="678.0" cy="494.4" r="1.2" fill="#7c90ff"/><circle cx="670.8" cy="476.8" r="1.9" fill="#ff5cc4"/><circle cx="668.5" cy="606.2" r="1.9" fill="#7c90ff"/><circle cx="663.0" cy="606.7" r="1.2" fill="#7c90ff"/><circle cx="664.3" cy="605.0" r="1.9" fill="#c070ff"/><circle cx="665.1" cy="601.2" r="1.2" fill="#7c90ff"/><circle cx="666.4" cy="603.3" r="1.2" fill="#c070ff"/></g>
<g filter="url(#b1)" fill-opacity=".75">
<circle cx="979.3" cy="825.3" r="1.3" fill="#d89848"/>
<circle cx="161.8" cy="358.1" r="1.3" fill="#6888e8"/>
<circle cx="563.3" cy="825.9" r="1.1" fill="#d89848"/>
<circle cx="697.5" cy="164.5" r="1.0" fill="#9a9aa2"/>
<circle cx="1163.0" cy="472.7" r="1.3" fill="#d8c070"/>
<circle cx="880.7" cy="352.0" r="1.0" fill="#6888e8"/>
<circle cx="1210.1" cy="64.8" r="1.1" fill="#d89848"/>
<circle cx="278.5" cy="19.9" r="1.1" fill="#9a9aa2"/>
<circle cx="912.7" cy="316.0" r="0.9" fill="#d8c070"/>
<circle cx="154.1" cy="414.6" r="1.3" fill="#e8e8f0"/>
<circle cx="968.2" cy="302.0" r="1.3" fill="#d89848"/>
<circle cx="248.7" cy="387.7" r="1.3" fill="#9a9aa2"/>
<circle cx="894.5" cy="554.9" r="1.1" fill="#9a9aa2"/>
<circle cx="939.0" cy="700.3" r="1.3" fill="#d89848"/>
<circle cx="78.3" cy="715.3" r="1.1" fill="#d89848"/>
<circle cx="121.9" cy="845.2" r="1.0" fill="#d89848"/>
<circle cx="430.9" cy="900.8" r="1.3" fill="#d89848"/>
<circle cx="1169.8" cy="421.0" r="1.1" fill="#d89848"/>
<circle cx="1160.1" cy="52.7" r="1.3" fill="#9a9aa2"/>
<circle cx="1016.4" cy="299.5" r="0.9" fill="#6888e8"/>
<circle cx="972.1" cy="90.9" r="1.1" fill="#d89848"/>
<circle cx="865.2" cy="233.5" r="1.0" fill="#d89848"/>
<circle cx="47.6" cy="512.3" r="1.0" fill="#9a9aa2"/>
<circle cx="707.9" cy="936.0" r="0.9" fill="#d89848"/>
<circle cx="95.0" cy="593.6" r="1.1" fill="#d8c070"/>
<circle cx="754.8" cy="831.0" r="1.3" fill="#9a9aa2"/>
<circle cx="108.4" cy="371.6" r="1.1" fill="#6888e8"/>
<circle cx="1138.0" cy="911.3" r="1.0" fill="#d89848"/>
<circle cx="767.9" cy="892.5" r="1.1" fill="#6888e8"/>
<circle cx="1166.2" cy="0.6" r="0.9" fill="#9a9aa2"/>
<circle cx="211.0" cy="150.3" r="1.0" fill="#d8c070"/>
<circle cx="1178.5" cy="140.0" r="1.0" fill="#9a9aa2"/>
<circle cx="934.8" cy="569.4" r="0.9" fill="#d89848"/>
<circle cx="896.8" cy="32.1" r="1.1" fill="#e8e8f0"/>
<circle cx="713.8" cy="679.0" r="1.3" fill="#d89848"/>
<circle cx="322.6" cy="798.7" r="1.1" fill="#9a9aa2"/>
<circle cx="112.3" cy="111.2" r="1.0" fill="#d8c070"/>
<circle cx="949.3" cy="196.1" r="0.9" fill="#d89848"/>
<circle cx="1021.3" cy="764.9" r="1.3" fill="#d89848"/>
<circle cx="154.5" cy="328.2" r="0.9" fill="#d8c070"/>
<circle cx="279.4" cy="73.6" r="0.9" fill="#d89848"/>
<circle cx="1216.0" cy="935.7" r="1.0" fill="#d89848"/>
<circle cx="4.7" cy="232.7" r="1.3" fill="#d89848"/>
<circle cx="830.7" cy="916.1" r="0.9" fill="#6888e8"/>
<circle cx="939.0" cy="889.8" r="0.9" fill="#d89848"/>
<circle cx="1190.0" cy="543.2" r="1.0" fill="#d89848"/>
<circle cx="572.7" cy="827.5" r="1.3" fill="#9a9aa2"/>
<circle cx="1134.3" cy="726.4" r="1.3" fill="#d89848"/>
<circle cx="1199.4" cy="410.3" r="0.9" fill="#d89848"/>
<circle cx="143.7" cy="608.0" r="1.0" fill="#9a9aa2"/>
<circle cx="805.3" cy="119.2" r="0.9" fill="#d89848"/>
<circle cx="1019.0" cy="820.0" r="0.9" fill="#e8e8f0"/>
<circle cx="1116.9" cy="503.8" r="1.1" fill="#d89848"/>
<circle cx="201.3" cy="28.5" r="1.0" fill="#9a9aa2"/>
<circle cx="237.8" cy="777.2" r="1.0" fill="#6888e8"/>
<circle cx="927.7" cy="944.6" r="1.0" fill="#6888e8"/>
<circle cx="612.4" cy="922.1" r="0.9" fill="#d8c070"/>
<circle cx="154.6" cy="665.8" r="0.9" fill="#e8e8f0"/>
<circle cx="298.4" cy="804.3" r="0.9" fill="#6888e8"/>
<circle cx="1062.0" cy="55.2" r="0.9" fill="#9a9aa2"/>
<circle cx="529.7" cy="61.9" r="1.3" fill="#d8c070"/>
<circle cx="1037.9" cy="324.4" r="1.0" fill="#d8c070"/>
<circle cx="85.7" cy="27.5" r="0.9" fill="#d89848"/>
<circle cx="145.0" cy="589.7" r="1.0" fill="#d89848"/>
<circle cx="306.9" cy="705.0" r="1.3" fill="#6888e8"/>
<circle cx="980.9" cy="626.6" r="0.9" fill="#d89848"/>
<circle cx="884.0" cy="382.1" r="0.9" fill="#d8c070"/>
<circle cx="871.4" cy="183.6" r="0.9" fill="#d89848"/>
<circle cx="347.6" cy="903.7" r="1.3" fill="#e8e8f0"/>
<circle cx="1234.9" cy="664.0" r="1.0" fill="#6888e8"/>
<circle cx="953.6" cy="476.8" r="1.0" fill="#d89848"/>
<circle cx="991.1" cy="196.0" r="0.9" fill="#6888e8"/>
<circle cx="328.0" cy="913.4" r="1.1" fill="#d8c070"/>
<circle cx="575.9" cy="916.5" r="1.0" fill="#9a9aa2"/>
<circle cx="644.0" cy="120.4" r="1.3" fill="#6888e8"/>
<circle cx="107.4" cy="380.0" r="1.3" fill="#d8c070"/>
<circle cx="115.8" cy="321.0" r="1.3" fill="#e8e8f0"/>
<circle cx="1186.3" cy="478.9" r="0.9" fill="#9a9aa2"/>
<circle cx="62.2" cy="470.9" r="1.0" fill="#9a9aa2"/>
<circle cx="592.6" cy="722.8" r="1.0" fill="#6888e8"/>
<circle cx="144.8" cy="693.9" r="1.3" fill="#9a9aa2"/>
<circle cx="528.8" cy="4.9" r="0.9" fill="#d89848"/>
<circle cx="702.8" cy="124.4" r="1.3" fill="#d8c070"/>
<circle cx="24.7" cy="523.3" r="1.0" fill="#9a9aa2"/>
<circle cx="910.4" cy="24.7" r="1.1" fill="#e8e8f0"/>
<circle cx="1166.9" cy="71.9" r="1.1" fill="#6888e8"/>
<circle cx="709.2" cy="932.4" r="1.3" fill="#6888e8"/>
<circle cx="443.1" cy="729.9" r="1.3" fill="#d89848"/>
<circle cx="461.0" cy="707.5" r="1.3" fill="#e8e8f0"/>
<circle cx="888.0" cy="479.4" r="1.1" fill="#e8e8f0"/>
<circle cx="1139.8" cy="456.3" r="0.9" fill="#e8e8f0"/>
<circle cx="915.2" cy="633.8" r="1.1" fill="#d89848"/>
<circle cx="534.3" cy="95.4" r="1.1" fill="#9a9aa2"/>
<circle cx="188.9" cy="431.2" r="0.9" fill="#6888e8"/>
<circle cx="827.5" cy="723.5" r="1.3" fill="#e8e8f0"/>
<circle cx="264.6" cy="715.5" r="0.9" fill="#d89848"/>
<circle cx="828.5" cy="496.7" r="1.3" fill="#d89848"/>
<circle cx="443.6" cy="170.4" r="1.0" fill="#9a9aa2"/>
<circle cx="789.4" cy="738.5" r="1.3" fill="#e8e8f0"/>
<circle cx="386.3" cy="258.4" r="0.9" fill="#d8c070"/>
<circle cx="93.7" cy="48.8" r="1.0" fill="#d89848"/>
<circle cx="1037.1" cy="586.6" r="1.3" fill="#d8c070"/>
<circle cx="643.3" cy="194.5" r="1.1" fill="#6888e8"/>
<circle cx="1031.1" cy="524.5" r="1.1" fill="#d89848"/>
<circle cx="600.0" cy="780.9" r="1.1" fill="#d8c070"/>
<circle cx="740.6" cy="233.0" r="0.9" fill="#9a9aa2"/>
<circle cx="911.2" cy="542.5" r="1.0" fill="#d89848"/>
<circle cx="416.1" cy="903.3" r="0.9" fill="#d8c070"/>
<circle cx="1081.0" cy="463.4" r="1.1" fill="#e8e8f0"/>
<circle cx="281.4" cy="335.6" r="1.1" fill="#d89848"/>
<circle cx="939.5" cy="801.6" r="1.1" fill="#9a9aa2"/>
<circle cx="16.8" cy="834.7" r="1.0" fill="#d89848"/>
<circle cx="447.9" cy="112.7" r="0.9" fill="#d89848"/>
<circle cx="580.0" cy="202.3" r="1.3" fill="#d89848"/>
<circle cx="528.3" cy="200.3" r="0.9" fill="#9a9aa2"/>
<circle cx="779.9" cy="124.0" r="1.0" fill="#e8e8f0"/>
<circle cx="169.9" cy="515.2" r="0.9" fill="#d8c070"/>
<circle cx="1205.6" cy="27.5" r="1.1" fill="#9a9aa2"/>
<circle cx="659.6" cy="819.8" r="0.9" fill="#9a9aa2"/>
<circle cx="633.9" cy="815.5" r="1.3" fill="#d89848"/>
<circle cx="163.0" cy="659.2" r="1.1" fill="#d89848"/>
<circle cx="1151.3" cy="802.1" r="1.0" fill="#9a9aa2"/>
<circle cx="994.5" cy="36.6" r="1.1" fill="#d8c070"/>
<circle cx="1212.2" cy="870.9" r="0.9" fill="#e8e8f0"/>
<circle cx="842.0" cy="264.0" r="1.3" fill="#9a9aa2"/>
<circle cx="304.3" cy="310.2" r="1.1" fill="#e8e8f0"/>
<circle cx="645.3" cy="726.7" r="1.1" fill="#9a9aa2"/>
<circle cx="8.8" cy="603.2" r="1.3" fill="#d89848"/>
<circle cx="490.0" cy="941.1" r="1.1" fill="#9a9aa2"/>
<circle cx="22.1" cy="101.5" r="1.1" fill="#9a9aa2"/>
<circle cx="944.4" cy="702.4" r="1.1" fill="#6888e8"/>
<circle cx="208.7" cy="217.1" r="1.1" fill="#9a9aa2"/>
<circle cx="869.1" cy="450.2" r="0.9" fill="#9a9aa2"/>
<circle cx="814.7" cy="261.0" r="1.0" fill="#9a9aa2"/>
<circle cx="172.1" cy="669.3" r="1.0" fill="#d89848"/>
<circle cx="24.2" cy="571.5" r="1.1" fill="#9a9aa2"/>
<circle cx="725.3" cy="866.7" r="1.1" fill="#d8c070"/>
<circle cx="984.4" cy="483.3" r="0.9" fill="#9a9aa2"/>
<circle cx="384.6" cy="930.0" r="1.0" fill="#d89848"/>
<circle cx="766.4" cy="269.2" r="1.3" fill="#6888e8"/>
<circle cx="1090.8" cy="203.9" r="1.1" fill="#e8e8f0"/>
<circle cx="556.2" cy="895.1" r="1.3" fill="#6888e8"/>
<circle cx="98.5" cy="347.0" r="1.3" fill="#d89848"/>
<circle cx="121.5" cy="859.9" r="1.1" fill="#6888e8"/>
<circle cx="824.3" cy="724.6" r="0.9" fill="#9a9aa2"/>
<circle cx="389.2" cy="875.1" r="1.0" fill="#d89848"/>
<circle cx="72.4" cy="838.3" r="1.1" fill="#9a9aa2"/>
<circle cx="1002.8" cy="737.7" r="1.1" fill="#d89848"/>
<circle cx="280.2" cy="67.3" r="1.0" fill="#d89848"/>
<circle cx="1118.8" cy="456.1" r="0.9" fill="#e8e8f0"/>
<circle cx="519.5" cy="920.5" r="0.9" fill="#e8e8f0"/>
<circle cx="335.0" cy="359.0" r="1.0" fill="#d89848"/>
<circle cx="1054.5" cy="699.3" r="1.1" fill="#d89848"/>
<circle cx="191.7" cy="770.4" r="1.0" fill="#e8e8f0"/>
<circle cx="721.7" cy="687.3" r="0.9" fill="#e8e8f0"/>
<circle cx="1135.5" cy="203.8" r="1.3" fill="#6888e8"/>
<circle cx="17.0" cy="375.7" r="0.9" fill="#d89848"/>
<circle cx="919.1" cy="2.2" r="1.0" fill="#9a9aa2"/>
<circle cx="832.9" cy="725.3" r="1.0" fill="#d89848"/>
<circle cx="874.1" cy="773.9" r="1.1" fill="#e8e8f0"/>
<circle cx="523.5" cy="144.8" r="1.0" fill="#6888e8"/>
<circle cx="467.5" cy="787.5" r="1.0" fill="#d8c070"/>
<circle cx="572.0" cy="36.4" r="1.0" fill="#d89848"/>
<circle cx="1168.2" cy="324.9" r="1.1" fill="#d89848"/>
<circle cx="1216.8" cy="931.4" r="1.1" fill="#d89848"/>
<circle cx="848.5" cy="445.3" r="1.3" fill="#d8c070"/>
<circle cx="279.5" cy="144.2" r="1.3" fill="#e8e8f0"/>
<circle cx="708.3" cy="720.6" r="1.1" fill="#e8e8f0"/>
<circle cx="1130.4" cy="571.9" r="0.9" fill="#e8e8f0"/>
<circle cx="1041.8" cy="935.4" r="0.9" fill="#d89848"/>
<circle cx="1038.0" cy="429.8" r="1.1" fill="#d89848"/>
<circle cx="432.8" cy="145.4" r="1.1" fill="#6888e8"/>
<circle cx="957.8" cy="642.2" r="1.1" fill="#d89848"/>
<circle cx="1054.4" cy="744.8" r="1.1" fill="#e8e8f0"/>
<circle cx="259.9" cy="250.1" r="1.1" fill="#d8c070"/>
<circle cx="1040.6" cy="507.5" r="1.3" fill="#6888e8"/>
<circle cx="922.0" cy="620.3" r="1.0" fill="#e8e8f0"/>
<circle cx="1277.4" cy="87.2" r="1.3" fill="#9a9aa2"/>
<circle cx="521.7" cy="841.7" r="1.3" fill="#d89848"/>
<circle cx="890.5" cy="476.7" r="1.3" fill="#6888e8"/>
<circle cx="419.1" cy="10.3" r="1.0" fill="#e8e8f0"/>
<circle cx="1163.9" cy="96.8" r="1.1" fill="#d89848"/>
<circle cx="1104.8" cy="333.5" r="1.1" fill="#6888e8"/>
<circle cx="908.5" cy="850.5" r="0.9" fill="#d89848"/>
<circle cx="879.6" cy="868.3" r="1.0" fill="#d89848"/>
<circle cx="185.5" cy="801.5" r="1.3" fill="#d89848"/>
<circle cx="1176.9" cy="605.7" r="0.9" fill="#9a9aa2"/>
<circle cx="154.4" cy="609.6" r="1.0" fill="#d8c070"/>
<circle cx="744.0" cy="58.7" r="1.3" fill="#6888e8"/>
<circle cx="1062.2" cy="274.5" r="0.9" fill="#9a9aa2"/>
<circle cx="228.5" cy="891.6" r="1.3" fill="#9a9aa2"/>
<circle cx="1017.1" cy="801.3" r="1.0" fill="#d89848"/>
<circle cx="149.6" cy="895.1" r="1.1" fill="#d89848"/>
<circle cx="795.0" cy="765.4" r="0.9" fill="#9a9aa2"/>
<circle cx="1136.5" cy="171.7" r="0.9" fill="#e8e8f0"/>
<circle cx="60.8" cy="267.7" r="0.9" fill="#9a9aa2"/>
<circle cx="991.9" cy="732.9" r="1.0" fill="#d89848"/>
<circle cx="310.1" cy="929.1" r="1.0" fill="#6888e8"/>
<circle cx="1128.2" cy="495.1" r="1.0" fill="#9a9aa2"/>
<circle cx="1103.9" cy="662.7" r="0.9" fill="#d8c070"/>
<circle cx="1202.0" cy="699.5" r="1.1" fill="#e8e8f0"/>
<circle cx="464.4" cy="151.0" r="1.1" fill="#9a9aa2"/>
<circle cx="967.5" cy="766.2" r="1.3" fill="#d89848"/>
<circle cx="1074.7" cy="566.6" r="1.0" fill="#6888e8"/>
<circle cx="964.5" cy="180.7" r="0.9" fill="#e8e8f0"/>
<circle cx="1104.7" cy="731.1" r="0.9" fill="#d89848"/>
<circle cx="505.6" cy="34.6" r="1.1" fill="#9a9aa2"/>
<circle cx="191.8" cy="39.1" r="1.0" fill="#6888e8"/>
<circle cx="434.9" cy="49.7" r="1.0" fill="#9a9aa2"/>
<circle cx="804.2" cy="911.6" r="0.9" fill="#d89848"/>
<circle cx="470.2" cy="72.5" r="0.9" fill="#d8c070"/>
<circle cx="863.7" cy="37.9" r="1.3" fill="#d89848"/>
<circle cx="664.0" cy="168.5" r="1.0" fill="#9a9aa2"/>
<circle cx="295.7" cy="584.4" r="1.1" fill="#9a9aa2"/>
<circle cx="647.5" cy="57.2" r="0.9" fill="#d89848"/>
<circle cx="109.0" cy="121.6" r="1.1" fill="#d89848"/>
<circle cx="379.1" cy="142.8" r="1.1" fill="#d8c070"/>
<circle cx="326.7" cy="68.6" r="1.0" fill="#d89848"/>
</g>
<circle cx="27.1" cy="111.8" r="4.5" fill="#f0b0e0" fill-opacity="0.38" filter="url(#b3)"/><circle cx="27.1" cy="111.8" r="2.5" fill="#f0b0e0" fill-opacity="1.00" filter="url(#b1)"/>
<circle cx="27.1" cy="111.8" r="1.2" fill="#fff" filter="url(#b1)"/>
<circle cx="168.3" cy="300.5" r="5.6" fill="#ffd8e8" fill-opacity="0.38" filter="url(#b3)"/><circle cx="168.3" cy="300.5" r="3.0" fill="#ffd8e8" fill-opacity="1.00" filter="url(#b1)"/>
<circle cx="168.3" cy="300.5" r="1.4" fill="#fff" filter="url(#b1)"/>
<circle cx="315.5" cy="225.2" r="4.5" fill="#f0b0d8" fill-opacity="0.38" filter="url(#b3)"/><circle cx="315.5" cy="225.2" r="2.5" fill="#f0b0d8" fill-opacity="1.00" filter="url(#b1)"/>
<circle cx="315.5" cy="225.2" r="1.2" fill="#fff" filter="url(#b1)"/>
<circle cx="509.0" cy="135.5" r="5.2" fill="#f4b8e0" fill-opacity="0.38" filter="url(#b3)"/><circle cx="509.0" cy="135.5" r="2.8" fill="#f4b8e0" fill-opacity="1.00" filter="url(#b1)"/>
<circle cx="509.0" cy="135.5" r="1.4" fill="#fff" filter="url(#b1)"/>
<circle cx="565.5" cy="34.6" r="5.2" fill="#f0b8e8" fill-opacity="0.38" filter="url(#b3)"/><circle cx="565.5" cy="34.6" r="2.8" fill="#f0b8e8" fill-opacity="1.00" filter="url(#b1)"/>
<circle cx="565.5" cy="34.6" r="1.4" fill="#fff" filter="url(#b1)"/>
<circle cx="476.3" cy="228.9" r="4.2" fill="#c8b8f0" fill-opacity="0.38" filter="url(#b3)"/><circle cx="476.3" cy="228.9" r="2.3" fill="#c8b8f0" fill-opacity="1.00" filter="url(#b1)"/>
<circle cx="409.6" cy="317.4" r="2.7" fill="#c0b8f0" fill-opacity="0.38" filter="url(#b3)"/><circle cx="409.6" cy="317.4" r="1.5" fill="#c0b8f0" fill-opacity="1.00" filter="url(#b1)"/>
<circle cx="202.2" cy="236.4" r="1.9" fill="#80c0d0" fill-opacity="0.38" filter="url(#b3)"/><circle cx="202.2" cy="236.4" r="1.0" fill="#80c0d0" fill-opacity="1.00" filter="url(#b1)"/>
<circle cx="244.7" cy="186.4" r="1.8" fill="#7890e0" fill-opacity="0.38" filter="url(#b3)"/><circle cx="244.7" cy="186.4" r="1.0" fill="#7890e0" fill-opacity="1.00" filter="url(#b1)"/>
<circle cx="381.0" cy="97.9" r="1.9" fill="#d09040" fill-opacity="0.38" filter="url(#b3)"/><circle cx="381.0" cy="97.9" r="1.0" fill="#d09040" fill-opacity="1.00" filter="url(#b1)"/>
<circle cx="94.9" cy="390.8" r="2.0" fill="#a0b0f0" fill-opacity="0.38" filter="url(#b3)"/><circle cx="94.9" cy="390.8" r="1.1" fill="#a0b0f0" fill-opacity="1.00" filter="url(#b1)"/>
<circle cx="0.8" cy="417.2" r="3.0" fill="#f0a0e0" fill-opacity="0.38" filter="url(#b3)"/><circle cx="0.8" cy="417.2" r="1.7" fill="#f0a0e0" fill-opacity="1.00" filter="url(#b1)"/>
<circle cx="254.1" cy="402.1" r="1.9" fill="#c08850" fill-opacity="0.38" filter="url(#b3)"/><circle cx="254.1" cy="402.1" r="1.0" fill="#c08850" fill-opacity="1.00" filter="url(#b1)"/>
<circle cx="355.0" cy="424.7" r="1.9" fill="#7090e0" fill-opacity="0.38" filter="url(#b3)"/><circle cx="355.0" cy="424.7" r="1.0" fill="#7090e0" fill-opacity="1.00" filter="url(#b1)"/>
<circle cx="335.1" cy="419.1" r="1.6" fill="#7090e0" fill-opacity="0.38" filter="url(#b3)"/><circle cx="335.1" cy="419.1" r="0.9" fill="#7090e0" fill-opacity="1.00" filter="url(#b1)"/>
<circle cx="390.4" cy="430.3" r="2.0" fill="#d09850" fill-opacity="0.38" filter="url(#b3)"/><circle cx="390.4" cy="430.3" r="1.1" fill="#d09850" fill-opacity="1.00" filter="url(#b1)"/>
<circle cx="570.4" cy="205.2" r="1.9" fill="#c0c8e0" fill-opacity="0.38" filter="url(#b3)"/><circle cx="570.4" cy="205.2" r="1.0" fill="#c0c8e0" fill-opacity="1.00" filter="url(#b1)"/>
<circle cx="113.0" cy="1.1" r="2.0" fill="#d0c080" fill-opacity="0.38" filter="url(#b3)"/><circle cx="113.0" cy="1.1" r="1.1" fill="#d0c080" fill-opacity="1.00" filter="url(#b1)"/>
<circle cx="566.6" cy="259.0" r="1.8" fill="#d09040" fill-opacity="0.38" filter="url(#b3)"/><circle cx="566.6" cy="259.0" r="1.0" fill="#d09040" fill-opacity="1.00" filter="url(#b1)"/>
<circle cx="459.3" cy="308.0" r="1.8" fill="#d09040" fill-opacity="0.38" filter="url(#b3)"/><circle cx="459.3" cy="308.0" r="1.0" fill="#d09040" fill-opacity="1.00" filter="url(#b1)"/>
<circle cx="18.1" cy="343.4" r="1.6" fill="#7080d0" fill-opacity="0.38" filter="url(#b3)"/><circle cx="18.1" cy="343.4" r="0.9" fill="#7080d0" fill-opacity="1.00" filter="url(#b1)"/>
<circle cx="373.5" cy="38.8" r="1.6" fill="#c08840" fill-opacity="0.38" filter="url(#b3)"/><circle cx="373.5" cy="38.8" r="0.9" fill="#c08840" fill-opacity="1.00" filter="url(#b1)"/>
<circle cx="314.4" cy="31.2" r="1.4" fill="#a0a0a0" fill-opacity="0.38" filter="url(#b3)"/><circle cx="314.4" cy="31.2" r="0.8" fill="#a0a0a0" fill-opacity="1.00" filter="url(#b1)"/>
<circle cx="656.9" cy="97.1" r="7.4" fill="#3ca0ff" fill-opacity="0.38" filter="url(#b3)"/><circle cx="656.9" cy="97.1" r="4.0" fill="#3ca0ff" fill-opacity="1.00" filter="url(#b1)"/>
<circle cx="656.9" cy="97.1" r="1.9" fill="#fff" filter="url(#b1)"/>
<circle cx="710.8" cy="181.9" r="4.2" fill="#3ca0ff" fill-opacity="0.38" filter="url(#b3)"/><circle cx="710.8" cy="181.9" r="2.3" fill="#3ca0ff" fill-opacity="1.00" filter="url(#b1)"/>
<circle cx="1176.5" cy="104.3" r="7.4" fill="#ffd0e8" fill-opacity="0.38" filter="url(#b3)"/><circle cx="1176.5" cy="104.3" r="4.0" fill="#ffd0e8" fill-opacity="1.00" filter="url(#b1)"/>
<circle cx="1176.5" cy="104.3" r="1.9" fill="#fff" filter="url(#b1)"/>
<circle cx="1150.2" cy="257.2" r="6.6" fill="#ff8a48" fill-opacity="0.38" filter="url(#b3)"/><circle cx="1150.2" cy="257.2" r="3.6" fill="#ff8a48" fill-opacity="1.00" filter="url(#b1)"/>
<circle cx="1150.2" cy="257.2" r="1.7" fill="#fff" filter="url(#b1)"/>
<circle cx="1127.6" cy="252.3" r="2.0" fill="#e8e8f0" fill-opacity="0.38" filter="url(#b3)"/><circle cx="1127.6" cy="252.3" r="1.1" fill="#e8e8f0" fill-opacity="1.00" filter="url(#b1)"/>
<circle cx="1122.7" cy="88.5" r="2.4" fill="#c8b8f0" fill-opacity="0.38" filter="url(#b3)"/><circle cx="1122.7" cy="88.5" r="1.4" fill="#c8b8f0" fill-opacity="1.00" filter="url(#b1)"/>
<circle cx="843.3" cy="14.3" r="2.4" fill="#c8b8f0" fill-opacity="0.38" filter="url(#b3)"/><circle cx="843.3" cy="14.3" r="1.4" fill="#c8b8f0" fill-opacity="1.00" filter="url(#b1)"/>
<circle cx="925.0" cy="46.3" r="2.0" fill="#6888e8" fill-opacity="0.38" filter="url(#b3)"/><circle cx="925.0" cy="46.3" r="1.1" fill="#6888e8" fill-opacity="1.00" filter="url(#b1)"/>
<circle cx="908.1" cy="53.5" r="1.6" fill="#d89848" fill-opacity="0.38" filter="url(#b3)"/><circle cx="908.1" cy="53.5" r="0.9" fill="#d89848" fill-opacity="1.00" filter="url(#b1)"/>
<circle cx="882.1" cy="120.5" r="2.0" fill="#d89848" fill-opacity="0.38" filter="url(#b3)"/><circle cx="882.1" cy="120.5" r="1.1" fill="#d89848" fill-opacity="1.00" filter="url(#b1)"/>
<circle cx="962.7" cy="125.0" r="1.8" fill="#b8c8f8" fill-opacity="0.38" filter="url(#b3)"/><circle cx="962.7" cy="125.0" r="1.0" fill="#b8c8f8" fill-opacity="1.00" filter="url(#b1)"/>
<circle cx="966.8" cy="166.0" r="2.2" fill="#b8c8f8" fill-opacity="0.38" filter="url(#b3)"/><circle cx="966.8" cy="166.0" r="1.2" fill="#b8c8f8" fill-opacity="1.00" filter="url(#b1)"/>
<circle cx="868.9" cy="184.5" r="1.9" fill="#d89848" fill-opacity="0.38" filter="url(#b3)"/><circle cx="868.9" cy="184.5" r="1.0" fill="#d89848" fill-opacity="1.00" filter="url(#b1)"/>
<circle cx="723.6" cy="157.4" r="2.4" fill="#e8e8f0" fill-opacity="0.38" filter="url(#b3)"/><circle cx="723.6" cy="157.4" r="1.4" fill="#e8e8f0" fill-opacity="1.00" filter="url(#b1)"/>
<circle cx="645.3" cy="138.6" r="2.4" fill="#e8e8f0" fill-opacity="0.38" filter="url(#b3)"/><circle cx="645.3" cy="138.6" r="1.4" fill="#e8e8f0" fill-opacity="1.00" filter="url(#b1)"/>
<circle cx="720.9" cy="128.8" r="1.4" fill="#6888e8" fill-opacity="0.38" filter="url(#b3)"/><circle cx="720.9" cy="128.8" r="0.8" fill="#6888e8" fill-opacity="1.00" filter="url(#b1)"/>
<circle cx="764.2" cy="303.5" r="2.2" fill="#b8c8f8" fill-opacity="0.38" filter="url(#b3)"/><circle cx="764.2" cy="303.5" r="1.2" fill="#b8c8f8" fill-opacity="1.00" filter="url(#b1)"/>
<circle cx="747.3" cy="357.7" r="2.4" fill="#e8e8f0" fill-opacity="0.38" filter="url(#b3)"/><circle cx="747.3" cy="357.7" r="1.4" fill="#e8e8f0" fill-opacity="1.00" filter="url(#b1)"/>
<circle cx="936.7" cy="388.9" r="2.4" fill="#e8e8f0" fill-opacity="0.38" filter="url(#b3)"/><circle cx="936.7" cy="388.9" r="1.4" fill="#e8e8f0" fill-opacity="1.00" filter="url(#b1)"/>
<circle cx="999.6" cy="359.6" r="2.2" fill="#e8e8f0" fill-opacity="0.38" filter="url(#b3)"/><circle cx="999.6" cy="359.6" r="1.2" fill="#e8e8f0" fill-opacity="1.00" filter="url(#b1)"/>
<circle cx="1208.5" cy="365.2" r="2.0" fill="#b8c8f8" fill-opacity="0.38" filter="url(#b3)"/><circle cx="1208.5" cy="365.2" r="1.1" fill="#b8c8f8" fill-opacity="1.00" filter="url(#b1)"/>
<circle cx="1194.6" cy="376.5" r="1.4" fill="#e8e8f0" fill-opacity="0.38" filter="url(#b3)"/><circle cx="1194.6" cy="376.5" r="0.8" fill="#e8e8f0" fill-opacity="1.00" filter="url(#b1)"/>
<circle cx="790.6" cy="451.1" r="2.4" fill="#e8e8f0" fill-opacity="0.38" filter="url(#b3)"/><circle cx="790.6" cy="451.1" r="1.4" fill="#e8e8f0" fill-opacity="1.00" filter="url(#b1)"/>
<circle cx="992.8" cy="431.1" r="1.8" fill="#e8e8f0" fill-opacity="0.38" filter="url(#b3)"/><circle cx="992.8" cy="431.1" r="1.0" fill="#e8e8f0" fill-opacity="1.00" filter="url(#b1)"/>
<circle cx="1113.3" cy="279.4" r="2.0" fill="#f0c8a0" fill-opacity="0.38" filter="url(#b3)"/><circle cx="1113.3" cy="279.4" r="1.1" fill="#f0c8a0" fill-opacity="1.00" filter="url(#b1)"/>
<circle cx="1144.5" cy="276.0" r="1.8" fill="#6888e8" fill-opacity="0.38" filter="url(#b3)"/><circle cx="1144.5" cy="276.0" r="1.0" fill="#6888e8" fill-opacity="1.00" filter="url(#b1)"/>
<circle cx="1271.4" cy="133.7" r="2.0" fill="#d89848" fill-opacity="0.38" filter="url(#b3)"/><circle cx="1271.4" cy="133.7" r="1.1" fill="#d89848" fill-opacity="1.00" filter="url(#b1)"/>
<circle cx="1067.3" cy="455.6" r="4.5" fill="#4468e0" fill-opacity="0.38" filter="url(#b3)"/><circle cx="1067.3" cy="455.6" r="2.5" fill="#4468e0" fill-opacity="1.00" filter="url(#b1)"/>
<circle cx="1067.3" cy="455.6" r="1.2" fill="#fff" filter="url(#b1)"/>
<circle cx="651.3" cy="33.1" r="1.8" fill="#d89848" fill-opacity="0.38" filter="url(#b3)"/><circle cx="651.3" cy="33.1" r="1.0" fill="#d89848" fill-opacity="1.00" filter="url(#b1)"/>
<circle cx="675.8" cy="32.0" r="1.6" fill="#d89848" fill-opacity="0.38" filter="url(#b3)"/><circle cx="675.8" cy="32.0" r="0.9" fill="#d89848" fill-opacity="1.00" filter="url(#b1)"/>
<circle cx="961.2" cy="248.5" r="1.5" fill="#d89848" fill-opacity="0.38" filter="url(#b3)"/><circle cx="961.2" cy="248.5" r="0.8" fill="#d89848" fill-opacity="1.00" filter="url(#b1)"/>
<circle cx="971.3" cy="253.4" r="1.4" fill="#e8e8f0" fill-opacity="0.38" filter="url(#b3)"/><circle cx="971.3" cy="253.4" r="0.8" fill="#e8e8f0" fill-opacity="1.00" filter="url(#b1)"/>
<circle cx="1013.5" cy="244.7" r="1.6" fill="#d8c070" fill-opacity="0.38" filter="url(#b3)"/><circle cx="1013.5" cy="244.7" r="0.9" fill="#d8c070" fill-opacity="1.00" filter="url(#b1)"/>
<circle cx="1060.9" cy="247.4" r="1.5" fill="#d8c070" fill-opacity="0.38" filter="url(#b3)"/><circle cx="1060.9" cy="247.4" r="0.8" fill="#d8c070" fill-opacity="1.00" filter="url(#b1)"/>
<circle cx="1089.9" cy="222.1" r="1.4" fill="#d89848" fill-opacity="0.38" filter="url(#b3)"/><circle cx="1089.9" cy="222.1" r="0.8" fill="#d89848" fill-opacity="1.00" filter="url(#b1)"/>
<circle cx="1145.6" cy="469.9" r="1.8" fill="#e8e8f0" fill-opacity="0.38" filter="url(#b3)"/><circle cx="1145.6" cy="469.9" r="1.0" fill="#e8e8f0" fill-opacity="1.00" filter="url(#b1)"/>
<circle cx="647.5" cy="370.9" r="2.0" fill="#e8e8f0" fill-opacity="0.38" filter="url(#b3)"/><circle cx="647.5" cy="370.9" r="1.1" fill="#e8e8f0" fill-opacity="1.00" filter="url(#b1)"/>
<circle cx="910.3" cy="288.0" r="1.6" fill="#d8c070" fill-opacity="0.38" filter="url(#b3)"/><circle cx="910.3" cy="288.0" r="0.9" fill="#d8c070" fill-opacity="1.00" filter="url(#b1)"/>
<circle cx="710.4" cy="289.2" r="1.4" fill="#d89848" fill-opacity="0.38" filter="url(#b3)"/><circle cx="710.4" cy="289.2" r="0.8" fill="#d89848" fill-opacity="1.00" filter="url(#b1)"/>
<circle cx="711.5" cy="354.7" r="1.4" fill="#d89848" fill-opacity="0.38" filter="url(#b3)"/><circle cx="711.5" cy="354.7" r="0.8" fill="#d89848" fill-opacity="1.00" filter="url(#b1)"/>
<circle cx="654.3" cy="335.1" r="1.6" fill="#d89848" fill-opacity="0.38" filter="url(#b3)"/><circle cx="654.3" cy="335.1" r="0.9" fill="#d89848" fill-opacity="1.00" filter="url(#b1)"/>
<circle cx="36.9" cy="498.3" r="2.7" fill="#f4c0e0" fill-opacity="0.38" filter="url(#b3)"/><circle cx="36.9" cy="498.3" r="1.5" fill="#f4c0e0" fill-opacity="1.00" filter="url(#b1)"/>
<circle cx="174.3" cy="530.7" r="2.4" fill="#e8e8f0" fill-opacity="0.38" filter="url(#b3)"/><circle cx="174.3" cy="530.7" r="1.4" fill="#e8e8f0" fill-opacity="1.00" filter="url(#b1)"/>
<circle cx="87.3" cy="565.4" r="2.2" fill="#b8c8f8" fill-opacity="0.38" filter="url(#b3)"/><circle cx="87.3" cy="565.4" r="1.2" fill="#b8c8f8" fill-opacity="1.00" filter="url(#b1)"/>
<circle cx="175.5" cy="615.1" r="2.0" fill="#b8c8f8" fill-opacity="0.38" filter="url(#b3)"/><circle cx="175.5" cy="615.1" r="1.1" fill="#b8c8f8" fill-opacity="1.00" filter="url(#b1)"/>
<circle cx="209.0" cy="607.9" r="1.9" fill="#c8e8d8" fill-opacity="0.38" filter="url(#b3)"/><circle cx="209.0" cy="607.9" r="1.0" fill="#c8e8d8" fill-opacity="1.00" filter="url(#b1)"/>
<circle cx="51.6" cy="670.0" r="2.0" fill="#c8b8f0" fill-opacity="0.38" filter="url(#b3)"/><circle cx="51.6" cy="670.0" r="1.1" fill="#c8b8f0" fill-opacity="1.00" filter="url(#b1)"/>
<circle cx="213.5" cy="692.6" r="2.2" fill="#e8e8f0" fill-opacity="0.38" filter="url(#b3)"/><circle cx="213.5" cy="692.6" r="1.2" fill="#e8e8f0" fill-opacity="1.00" filter="url(#b1)"/>
<circle cx="168.3" cy="734.8" r="2.0" fill="#e8e8f0" fill-opacity="0.38" filter="url(#b3)"/><circle cx="168.3" cy="734.8" r="1.1" fill="#e8e8f0" fill-opacity="1.00" filter="url(#b1)"/>
<circle cx="103.5" cy="748.0" r="2.4" fill="#e8e8f0" fill-opacity="0.38" filter="url(#b3)"/><circle cx="103.5" cy="748.0" r="1.4" fill="#e8e8f0" fill-opacity="1.00" filter="url(#b1)"/>
<circle cx="169.4" cy="806.3" r="3.0" fill="#f4c0e0" fill-opacity="0.38" filter="url(#b3)"/><circle cx="169.4" cy="806.3" r="1.7" fill="#f4c0e0" fill-opacity="1.00" filter="url(#b1)"/>
<circle cx="109.2" cy="909.9" r="2.4" fill="#b8c8f8" fill-opacity="0.38" filter="url(#b3)"/><circle cx="109.2" cy="909.9" r="1.4" fill="#b8c8f8" fill-opacity="1.00" filter="url(#b1)"/>
<circle cx="429.2" cy="856.4" r="4.5" fill="#e0d8f8" fill-opacity="0.38" filter="url(#b3)"/><circle cx="429.2" cy="856.4" r="2.5" fill="#e0d8f8" fill-opacity="1.00" filter="url(#b1)"/>
<circle cx="429.2" cy="856.4" r="1.2" fill="#fff" filter="url(#b1)"/>
<circle cx="422.8" cy="878.6" r="2.2" fill="#b8c8f8" fill-opacity="0.38" filter="url(#b3)"/><circle cx="422.8" cy="878.6" r="1.2" fill="#b8c8f8" fill-opacity="1.00" filter="url(#b1)"/>
<circle cx="490.2" cy="876.4" r="2.2" fill="#c8b8f0" fill-opacity="0.38" filter="url(#b3)"/><circle cx="490.2" cy="876.4" r="1.2" fill="#c8b8f0" fill-opacity="1.00" filter="url(#b1)"/>
<circle cx="325.7" cy="872.2" r="1.9" fill="#b8c8f8" fill-opacity="0.38" filter="url(#b3)"/><circle cx="325.7" cy="872.2" r="1.0" fill="#b8c8f8" fill-opacity="1.00" filter="url(#b1)"/>
<circle cx="575.3" cy="818.4" r="3.0" fill="#f4c0e0" fill-opacity="0.38" filter="url(#b3)"/><circle cx="575.3" cy="818.4" r="1.7" fill="#f4c0e0" fill-opacity="1.00" filter="url(#b1)"/>
<circle cx="346.4" cy="682.8" r="2.4" fill="#e8e8f0" fill-opacity="0.38" filter="url(#b3)"/><circle cx="346.4" cy="682.8" r="1.4" fill="#e8e8f0" fill-opacity="1.00" filter="url(#b1)"/>
<circle cx="372.0" cy="646.3" r="2.0" fill="#e8e8f0" fill-opacity="0.38" filter="url(#b3)"/><circle cx="372.0" cy="646.3" r="1.1" fill="#e8e8f0" fill-opacity="1.00" filter="url(#b1)"/>
<circle cx="443.5" cy="687.7" r="2.7" fill="#fff0d0" fill-opacity="0.38" filter="url(#b3)"/><circle cx="443.5" cy="687.7" r="1.5" fill="#fff0d0" fill-opacity="1.00" filter="url(#b1)"/>
<circle cx="424.7" cy="567.2" r="2.7" fill="#e8e8f0" fill-opacity="0.38" filter="url(#b3)"/><circle cx="424.7" cy="567.2" r="1.5" fill="#e8e8f0" fill-opacity="1.00" filter="url(#b1)"/>
<circle cx="616.3" cy="579.7" r="2.7" fill="#e8e8f0" fill-opacity="0.38" filter="url(#b3)"/><circle cx="616.3" cy="579.7" r="1.5" fill="#e8e8f0" fill-opacity="1.00" filter="url(#b1)"/>
<circle cx="303.1" cy="697.9" r="2.2" fill="#d89848" fill-opacity="0.38" filter="url(#b3)"/><circle cx="303.1" cy="697.9" r="1.2" fill="#d89848" fill-opacity="1.00" filter="url(#b1)"/>
<circle cx="256.0" cy="881.6" r="2.2" fill="#d89848" fill-opacity="0.38" filter="url(#b3)"/><circle cx="256.0" cy="881.6" r="1.2" fill="#d89848" fill-opacity="1.00" filter="url(#b1)"/>
<circle cx="479.3" cy="764.2" r="1.9" fill="#d89848" fill-opacity="0.38" filter="url(#b3)"/><circle cx="479.3" cy="764.2" r="1.0" fill="#d89848" fill-opacity="1.00" filter="url(#b1)"/>
<circle cx="428.1" cy="787.5" r="1.8" fill="#d89848" fill-opacity="0.38" filter="url(#b3)"/><circle cx="428.1" cy="787.5" r="1.0" fill="#d89848" fill-opacity="1.00" filter="url(#b1)"/>
<circle cx="402.9" cy="820.6" r="1.6" fill="#d89848" fill-opacity="0.38" filter="url(#b3)"/><circle cx="402.9" cy="820.6" r="0.9" fill="#d89848" fill-opacity="1.00" filter="url(#b1)"/>
<circle cx="509.0" cy="652.7" r="1.9" fill="#d89848" fill-opacity="0.38" filter="url(#b3)"/><circle cx="509.0" cy="652.7" r="1.0" fill="#d89848" fill-opacity="1.00" filter="url(#b1)"/>
<circle cx="591.9" cy="682.1" r="2.2" fill="#d89848" fill-opacity="0.38" filter="url(#b3)"/><circle cx="591.9" cy="682.1" r="1.2" fill="#d89848" fill-opacity="1.00" filter="url(#b1)"/>
<circle cx="551.6" cy="617.3" r="2.0" fill="#d8c070" fill-opacity="0.38" filter="url(#b3)"/><circle cx="551.6" cy="617.3" r="1.1" fill="#d8c070" fill-opacity="1.00" filter="url(#b1)"/>
<circle cx="10.5" cy="530.3" r="1.8" fill="#d89848" fill-opacity="0.38" filter="url(#b3)"/><circle cx="10.5" cy="530.3" r="1.0" fill="#d89848" fill-opacity="1.00" filter="url(#b1)"/>
<circle cx="6.0" cy="599.2" r="1.8" fill="#d89848" fill-opacity="0.38" filter="url(#b3)"/><circle cx="6.0" cy="599.2" r="1.0" fill="#d89848" fill-opacity="1.00" filter="url(#b1)"/>
<circle cx="279.4" cy="604.9" r="1.6" fill="#d8c070" fill-opacity="0.38" filter="url(#b3)"/><circle cx="279.4" cy="604.9" r="0.9" fill="#d8c070" fill-opacity="1.00" filter="url(#b1)"/>
<circle cx="260.9" cy="607.5" r="1.5" fill="#d89848" fill-opacity="0.38" filter="url(#b3)"/><circle cx="260.9" cy="607.5" r="0.8" fill="#d89848" fill-opacity="1.00" filter="url(#b1)"/>
<circle cx="284.3" cy="594.7" r="1.4" fill="#e8e8f0" fill-opacity="0.38" filter="url(#b3)"/><circle cx="284.3" cy="594.7" r="0.8" fill="#e8e8f0" fill-opacity="1.00" filter="url(#b1)"/>
<circle cx="264.7" cy="632.4" r="1.5" fill="#d89848" fill-opacity="0.38" filter="url(#b3)"/><circle cx="264.7" cy="632.4" r="0.8" fill="#d89848" fill-opacity="1.00" filter="url(#b1)"/>
<circle cx="286.1" cy="643.7" r="1.4" fill="#d89848" fill-opacity="0.38" filter="url(#b3)"/><circle cx="286.1" cy="643.7" r="0.8" fill="#d89848" fill-opacity="1.00" filter="url(#b1)"/>
<circle cx="161.1" cy="515.7" r="1.5" fill="#d89848" fill-opacity="0.38" filter="url(#b3)"/><circle cx="161.1" cy="515.7" r="0.8" fill="#d89848" fill-opacity="1.00" filter="url(#b1)"/>
<circle cx="78.3" cy="511.9" r="1.5" fill="#d89848" fill-opacity="0.38" filter="url(#b3)"/><circle cx="78.3" cy="511.9" r="0.8" fill="#d89848" fill-opacity="1.00" filter="url(#b1)"/>
<circle cx="99.0" cy="479.5" r="1.6" fill="#d89848" fill-opacity="0.38" filter="url(#b3)"/><circle cx="99.0" cy="479.5" r="0.9" fill="#d89848" fill-opacity="1.00" filter="url(#b1)"/>
<circle cx="210.8" cy="784.5" r="1.4" fill="#e8e8f0" fill-opacity="0.38" filter="url(#b3)"/><circle cx="210.8" cy="784.5" r="0.8" fill="#e8e8f0" fill-opacity="1.00" filter="url(#b1)"/>
<circle cx="97.1" cy="914.8" r="1.5" fill="#d89848" fill-opacity="0.38" filter="url(#b3)"/><circle cx="97.1" cy="914.8" r="0.8" fill="#d89848" fill-opacity="1.00" filter="url(#b1)"/>
<circle cx="477.4" cy="917.4" r="1.5" fill="#d89848" fill-opacity="0.38" filter="url(#b3)"/><circle cx="477.4" cy="917.4" r="0.8" fill="#d89848" fill-opacity="1.00" filter="url(#b1)"/>
<circle cx="189.0" cy="887.3" r="1.4" fill="#c8e8d8" fill-opacity="0.38" filter="url(#b3)"/><circle cx="189.0" cy="887.3" r="0.8" fill="#c8e8d8" fill-opacity="1.00" filter="url(#b1)"/>
<circle cx="333.6" cy="702.0" r="1.8" fill="#6888e8" fill-opacity="0.38" filter="url(#b3)"/><circle cx="333.6" cy="702.0" r="1.0" fill="#6888e8" fill-opacity="1.00" filter="url(#b1)"/>
<circle cx="353.9" cy="535.2" r="5.2" fill="#b068f0" fill-opacity="0.38" filter="url(#b3)"/><circle cx="353.9" cy="535.2" r="2.8" fill="#b068f0" fill-opacity="1.00" filter="url(#b1)"/>
<circle cx="353.9" cy="535.2" r="1.4" fill="#fff" filter="url(#b1)"/>
<circle cx="938.2" cy="755.9" r="5.2" fill="#f4c0e0" fill-opacity="0.38" filter="url(#b3)"/><circle cx="938.2" cy="755.9" r="2.8" fill="#f4c0e0" fill-opacity="1.00" filter="url(#b1)"/>
<circle cx="938.2" cy="755.9" r="1.4" fill="#fff" filter="url(#b1)"/>
<circle cx="1221.7" cy="758.5" r="4.9" fill="#ffd8c0" fill-opacity="0.38" filter="url(#b3)"/><circle cx="1221.7" cy="758.5" r="2.7" fill="#ffd8c0" fill-opacity="1.00" filter="url(#b1)"/>
<circle cx="1221.7" cy="758.5" r="1.3" fill="#fff" filter="url(#b1)"/>
<circle cx="1237.5" cy="752.5" r="2.2" fill="#6888e8" fill-opacity="0.38" filter="url(#b3)"/><circle cx="1237.5" cy="752.5" r="1.2" fill="#6888e8" fill-opacity="1.00" filter="url(#b1)"/>
<circle cx="1083.5" cy="938.1" r="5.6" fill="#ffd8c0" fill-opacity="0.38" filter="url(#b3)"/><circle cx="1083.5" cy="938.1" r="3.0" fill="#ffd8c0" fill-opacity="1.00" filter="url(#b1)"/>
<circle cx="1083.5" cy="938.1" r="1.4" fill="#fff" filter="url(#b1)"/>
<circle cx="920.9" cy="852.6" r="4.9" fill="#e0d8ff" fill-opacity="0.38" filter="url(#b3)"/><circle cx="920.9" cy="852.6" r="2.7" fill="#e0d8ff" fill-opacity="1.00" filter="url(#b1)"/>
<circle cx="920.9" cy="852.6" r="1.3" fill="#fff" filter="url(#b1)"/>
<circle cx="661.1" cy="821.8" r="4.5" fill="#f4c0e0" fill-opacity="0.38" filter="url(#b3)"/><circle cx="661.1" cy="821.8" r="2.5" fill="#f4c0e0" fill-opacity="1.00" filter="url(#b1)"/>
<circle cx="661.1" cy="821.8" r="1.2" fill="#fff" filter="url(#b1)"/>
<circle cx="655.1" cy="876.0" r="3.0" fill="#e8e8f0" fill-opacity="0.38" filter="url(#b3)"/><circle cx="655.1" cy="876.0" r="1.7" fill="#e8e8f0" fill-opacity="1.00" filter="url(#b1)"/>
<circle cx="951.4" cy="803.7" r="2.7" fill="#c8b8f0" fill-opacity="0.38" filter="url(#b3)"/><circle cx="951.4" cy="803.7" r="1.5" fill="#c8b8f0" fill-opacity="1.00" filter="url(#b1)"/>
<circle cx="1144.5" cy="801.1" r="2.4" fill="#b8c8f8" fill-opacity="0.38" filter="url(#b3)"/><circle cx="1144.5" cy="801.1" r="1.4" fill="#b8c8f8" fill-opacity="1.00" filter="url(#b1)"/>
<circle cx="1169.7" cy="674.9" r="2.4" fill="#f4c0e0" fill-opacity="0.38" filter="url(#b3)"/><circle cx="1169.7" cy="674.9" r="1.4" fill="#f4c0e0" fill-opacity="1.00" filter="url(#b1)"/>
<circle cx="832.0" cy="593.2" r="2.7" fill="#a8b0f8" fill-opacity="0.38" filter="url(#b3)"/><circle cx="832.0" cy="593.2" r="1.5" fill="#a8b0f8" fill-opacity="1.00" filter="url(#b1)"/>
<circle cx="970.6" cy="576.7" r="2.0" fill="#b8c8f8" fill-opacity="0.38" filter="url(#b3)"/><circle cx="970.6" cy="576.7" r="1.1" fill="#b8c8f8" fill-opacity="1.00" filter="url(#b1)"/>
<circle cx="795.5" cy="488.9" r="2.2" fill="#e8e8f0" fill-opacity="0.38" filter="url(#b3)"/><circle cx="795.5" cy="488.9" r="1.2" fill="#e8e8f0" fill-opacity="1.00" filter="url(#b1)"/>
<circle cx="1277.0" cy="612.0" r="4.2" fill="#f080b0" fill-opacity="0.38" filter="url(#b3)"/><circle cx="1277.0" cy="612.0" r="2.3" fill="#f080b0" fill-opacity="1.00" filter="url(#b1)"/>
<circle cx="1278.2" cy="945.6" r="2.7" fill="#e05050" fill-opacity="0.38" filter="url(#b3)"/><circle cx="1278.2" cy="945.6" r="1.5" fill="#e05050" fill-opacity="1.00" filter="url(#b1)"/>
<circle cx="804.9" cy="897.4" r="2.2" fill="#e8e8f0" fill-opacity="0.38" filter="url(#b3)"/><circle cx="804.9" cy="897.4" r="1.2" fill="#e8e8f0" fill-opacity="1.00" filter="url(#b1)"/>
<circle cx="873.4" cy="913.6" r="2.0" fill="#b8c8f8" fill-opacity="0.38" filter="url(#b3)"/><circle cx="873.4" cy="913.6" r="1.1" fill="#b8c8f8" fill-opacity="1.00" filter="url(#b1)"/>
<circle cx="821.9" cy="915.5" r="1.8" fill="#8898b8" fill-opacity="0.38" filter="url(#b3)"/><circle cx="821.9" cy="915.5" r="1.0" fill="#8898b8" fill-opacity="1.00" filter="url(#b1)"/>
<circle cx="1005.2" cy="920.0" r="2.4" fill="#d89848" fill-opacity="0.38" filter="url(#b3)"/><circle cx="1005.2" cy="920.0" r="1.4" fill="#d89848" fill-opacity="1.00" filter="url(#b1)"/>
<circle cx="1061.7" cy="534.1" r="2.0" fill="#d89848" fill-opacity="0.38" filter="url(#b3)"/><circle cx="1061.7" cy="534.1" r="1.1" fill="#d89848" fill-opacity="1.00" filter="url(#b1)"/>
<circle cx="960.0" cy="531.5" r="1.9" fill="#d89848" fill-opacity="0.38" filter="url(#b3)"/><circle cx="960.0" cy="531.5" r="1.0" fill="#d89848" fill-opacity="1.00" filter="url(#b1)"/>
<circle cx="995.0" cy="530.7" r="1.6" fill="#d89848" fill-opacity="0.38" filter="url(#b3)"/><circle cx="995.0" cy="530.7" r="0.9" fill="#d89848" fill-opacity="1.00" filter="url(#b1)"/>
<circle cx="877.2" cy="539.8" r="1.6" fill="#d89848" fill-opacity="0.38" filter="url(#b3)"/><circle cx="877.2" cy="539.8" r="0.9" fill="#d89848" fill-opacity="1.00" filter="url(#b1)"/>
<circle cx="860.3" cy="523.2" r="1.9" fill="#d89848" fill-opacity="0.38" filter="url(#b3)"/><circle cx="860.3" cy="523.2" r="1.0" fill="#d89848" fill-opacity="1.00" filter="url(#b1)"/>
<circle cx="695.7" cy="565.4" r="2.4" fill="#d89848" fill-opacity="0.38" filter="url(#b3)"/><circle cx="695.7" cy="565.4" r="1.4" fill="#d89848" fill-opacity="1.00" filter="url(#b1)"/>
<circle cx="713.4" cy="567.2" r="1.8" fill="#d89848" fill-opacity="0.38" filter="url(#b3)"/><circle cx="713.4" cy="567.2" r="1.0" fill="#d89848" fill-opacity="1.00" filter="url(#b1)"/>
<circle cx="1035.3" cy="646.3" r="1.9" fill="#d89848" fill-opacity="0.38" filter="url(#b3)"/><circle cx="1035.3" cy="646.3" r="1.0" fill="#d89848" fill-opacity="1.00" filter="url(#b1)"/>
<circle cx="948.7" cy="663.3" r="1.8" fill="#d89848" fill-opacity="0.38" filter="url(#b3)"/><circle cx="948.7" cy="663.3" r="1.0" fill="#d89848" fill-opacity="1.00" filter="url(#b1)"/>
<circle cx="1036.1" cy="692.6" r="1.6" fill="#d89848" fill-opacity="0.38" filter="url(#b3)"/><circle cx="1036.1" cy="692.6" r="0.9" fill="#d89848" fill-opacity="1.00" filter="url(#b1)"/>
<circle cx="1012.7" cy="683.2" r="1.4" fill="#d89848" fill-opacity="0.38" filter="url(#b3)"/><circle cx="1012.7" cy="683.2" r="0.8" fill="#d89848" fill-opacity="1.00" filter="url(#b1)"/>
<circle cx="904.7" cy="687.0" r="1.5" fill="#d89848" fill-opacity="0.38" filter="url(#b3)"/><circle cx="904.7" cy="687.0" r="0.8" fill="#d89848" fill-opacity="1.00" filter="url(#b1)"/>
<circle cx="772.9" cy="644.4" r="1.9" fill="#d89848" fill-opacity="0.38" filter="url(#b3)"/><circle cx="772.9" cy="644.4" r="1.0" fill="#d89848" fill-opacity="1.00" filter="url(#b1)"/>
<circle cx="776.7" cy="661.4" r="1.6" fill="#d89848" fill-opacity="0.38" filter="url(#b3)"/><circle cx="776.7" cy="661.4" r="0.9" fill="#d89848" fill-opacity="1.00" filter="url(#b1)"/>
<circle cx="781.9" cy="728.4" r="2.0" fill="#d89848" fill-opacity="0.38" filter="url(#b3)"/><circle cx="781.9" cy="728.4" r="1.1" fill="#d89848" fill-opacity="1.00" filter="url(#b1)"/>
<circle cx="805.7" cy="718.6" r="1.6" fill="#d89848" fill-opacity="0.38" filter="url(#b3)"/><circle cx="805.7" cy="718.6" r="0.9" fill="#d89848" fill-opacity="1.00" filter="url(#b1)"/>
<circle cx="800.8" cy="737.8" r="1.5" fill="#d89848" fill-opacity="0.38" filter="url(#b3)"/><circle cx="800.8" cy="737.8" r="0.8" fill="#d89848" fill-opacity="1.00" filter="url(#b1)"/>
<circle cx="690.1" cy="685.1" r="1.8" fill="#e8e8f0" fill-opacity="0.38" filter="url(#b3)"/><circle cx="690.1" cy="685.1" r="1.0" fill="#e8e8f0" fill-opacity="1.00" filter="url(#b1)"/>
<circle cx="712.3" cy="686.6" r="1.4" fill="#d89848" fill-opacity="0.38" filter="url(#b3)"/><circle cx="712.3" cy="686.6" r="0.8" fill="#d89848" fill-opacity="1.00" filter="url(#b1)"/>
<circle cx="856.5" cy="818.4" r="1.5" fill="#d89848" fill-opacity="0.38" filter="url(#b3)"/><circle cx="856.5" cy="818.4" r="0.8" fill="#d89848" fill-opacity="1.00" filter="url(#b1)"/>
<circle cx="745.4" cy="835.3" r="1.6" fill="#e8e8f0" fill-opacity="0.38" filter="url(#b3)"/><circle cx="745.4" cy="835.3" r="0.9" fill="#e8e8f0" fill-opacity="1.00" filter="url(#b1)"/>
<circle cx="1135.9" cy="680.2" r="1.6" fill="#9a9aa2" fill-opacity="0.38" filter="url(#b3)"/><circle cx="1135.9" cy="680.2" r="0.9" fill="#9a9aa2" fill-opacity="1.00" filter="url(#b1)"/>
<circle cx="1180.3" cy="717.8" r="1.5" fill="#9a9aa2" fill-opacity="0.38" filter="url(#b3)"/><circle cx="1180.3" cy="717.8" r="0.8" fill="#9a9aa2" fill-opacity="1.00" filter="url(#b1)"/>
<circle cx="1223.6" cy="807.5" r="1.5" fill="#9a9aa2" fill-opacity="0.38" filter="url(#b3)"/><circle cx="1223.6" cy="807.5" r="0.8" fill="#9a9aa2" fill-opacity="1.00" filter="url(#b1)"/>
<circle cx="990.2" cy="869.2" r="1.5" fill="#9a9aa2" fill-opacity="0.38" filter="url(#b3)"/><circle cx="990.2" cy="869.2" r="0.8" fill="#9a9aa2" fill-opacity="1.00" filter="url(#b1)"/>
<circle cx="897.9" cy="841.3" r="1.5" fill="#9a9aa2" fill-opacity="0.38" filter="url(#b3)"/><circle cx="897.9" cy="841.3" r="0.8" fill="#9a9aa2" fill-opacity="1.00" filter="url(#b1)"/>
<circle cx="688.9" cy="920.4" r="1.6" fill="#d89848" fill-opacity="0.38" filter="url(#b3)"/><circle cx="688.9" cy="920.4" r="0.9" fill="#d89848" fill-opacity="1.00" filter="url(#b1)"/>
<circle cx="676.5" cy="918.5" r="1.5" fill="#60b0a0" fill-opacity="0.38" filter="url(#b3)"/><circle cx="676.5" cy="918.5" r="0.8" fill="#60b0a0" fill-opacity="1.00" filter="url(#b1)"/>
<circle cx="936.7" cy="917.4" r="1.5" fill="#d89848" fill-opacity="0.38" filter="url(#b3)"/><circle cx="936.7" cy="917.4" r="0.8" fill="#d89848" fill-opacity="1.00" filter="url(#b1)"/>
<circle cx="974.3" cy="499.5" r="1.4" fill="#d89848" fill-opacity="0.38" filter="url(#b3)"/><circle cx="974.3" cy="499.5" r="0.8" fill="#d89848" fill-opacity="1.00" filter="url(#b1)"/>
<circle cx="1104.2" cy="478.0" r="1.5" fill="#d89848" fill-opacity="0.38" filter="url(#b3)"/><circle cx="1104.2" cy="478.0" r="0.8" fill="#d89848" fill-opacity="1.00" filter="url(#b1)"/>
<circle cx="1134.4" cy="763.0" r="1.4" fill="#e8e8f0" fill-opacity="0.38" filter="url(#b3)"/><circle cx="1134.4" cy="763.0" r="0.8" fill="#e8e8f0" fill-opacity="1.00" filter="url(#b1)"/>
<circle cx="1068.5" cy="685.1" r="1.2" fill="#9a9aa2" fill-opacity="0.38" filter="url(#b3)"/><circle cx="1068.5" cy="685.1" r="0.7" fill="#9a9aa2" fill-opacity="1.00" filter="url(#b1)"/>
<circle cx="753.0" cy="563.5" r="4.5" fill="#7868e8" fill-opacity="0.38" filter="url(#b3)"/><circle cx="753.0" cy="563.5" r="2.5" fill="#7868e8" fill-opacity="1.00" filter="url(#b1)"/>
<circle cx="753.0" cy="563.5" r="1.2" fill="#fff" filter="url(#b1)"/>
<circle cx="848.2" cy="627.5" r="4.2" fill="#5878e8" fill-opacity="0.38" filter="url(#b3)"/><circle cx="848.2" cy="627.5" r="2.3" fill="#5878e8" fill-opacity="1.00" filter="url(#b1)"/>
<circle cx="732.2" cy="661.4" r="2.4" fill="#5878e8" fill-opacity="0.38" filter="url(#b3)"/><circle cx="732.2" cy="661.4" r="1.4" fill="#5878e8" fill-opacity="1.00" filter="url(#b1)"/>
<circle cx="1214" cy="564" r="16" fill="#f0a040" fill-opacity=".55" filter="url(#b6)"/><circle cx="1214" cy="564" r="8.5" fill="#ffe9b8" filter="url(#b3)"/><circle cx="1214" cy="564" r="5" fill="#fffdf0" filter="url(#b1)"/>
<circle cx="491.5" cy="347.5" r="5" fill="#a0e8e0" fill-opacity=".7" filter="url(#b3)"/><circle cx="491.5" cy="347.5" r="2.6" fill="#e8fffa" filter="url(#b1)"/>
<filter id="b0" x="-10%" y="-50%" width="120%" height="200%"><feGaussianBlur stdDeviation="0.45"/></filter>
<g filter="url(#b0)" fill="#fcfc38"><text x="290.5" y="354.5" text-anchor="middle" font-family="Liberation Sans, Arial, sans-serif" font-style="italic" font-size="30.6">SN 2023ixf</text>
<path d="M376 343.6L461.5 343.6L461.5 336.6L485.4 348.6L461.5 360.6L461.5 353.6L376 353.6Z"/></g>
</svg>
<svg style="left:0;top:0" width="1" height="1"><g stroke="#7a7a7a" stroke-width="1.6" stroke-dasharray="2 2"><path d="M2346 1258L2365 1239M2353 1258L2365 1246"/></g></svg>
</div>
</body></html>
